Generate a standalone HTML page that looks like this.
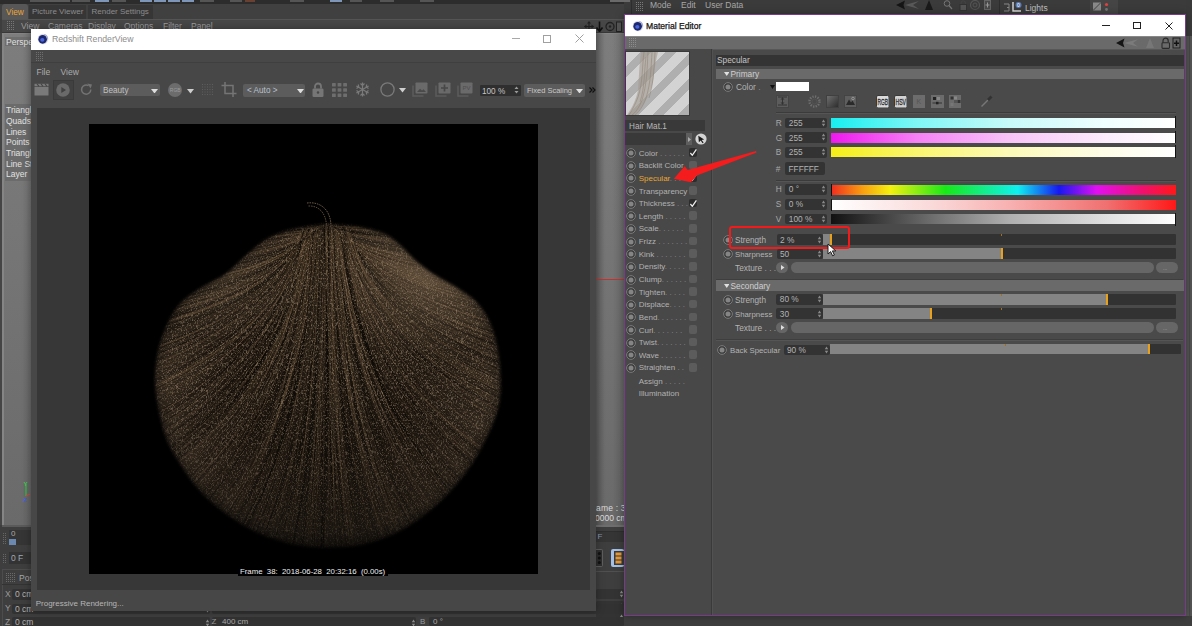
<!DOCTYPE html>
<html><head><meta charset="utf-8">
<style>
*{margin:0;padding:0;box-sizing:border-box}
html,body{width:1192px;height:626px;overflow:hidden;background:#3e3e3e;font-family:"Liberation Sans",sans-serif;position:relative}
.a{position:absolute}
.t{position:absolute;white-space:nowrap;line-height:1}
</style></head><body>
<div class="a" style="left:0px;top:0px;width:1192px;height:626px;background:#3e3e3e"></div>
<div class="a" style="left:0px;top:0px;width:624px;height:4px;background:#2c2c2c"></div>
<div class="a" style="left:30px;top:0px;width:20px;height:2px;background:#555"></div>
<div class="a" style="left:50px;top:0px;width:20px;height:2px;background:#5a5a5a"></div>
<div class="a" style="left:72px;top:0px;width:18px;height:2px;background:#555"></div>
<div class="a" style="left:95px;top:0px;width:14px;height:2px;background:#7e96b8"></div>
<div class="a" style="left:112px;top:0px;width:14px;height:2px;background:#555"></div>
<div class="a" style="left:140px;top:0px;width:12px;height:2px;background:#7e96b8"></div>
<div class="a" style="left:154px;top:0px;width:12px;height:2px;background:#7e96b8"></div>
<div class="a" style="left:168px;top:0px;width:12px;height:2px;background:#7e96b8"></div>
<div class="a" style="left:182px;top:0px;width:12px;height:2px;background:#7e96b8"></div>
<div class="a" style="left:200px;top:0px;width:14px;height:2px;background:#555"></div>
<div class="a" style="left:230px;top:0px;width:12px;height:2px;background:#555"></div>
<div class="a" style="left:245px;top:0px;width:10px;height:2px;background:#6a4030"></div>
<div class="a" style="left:290px;top:0px;width:14px;height:2px;background:#555"></div>
<div class="a" style="left:330px;top:0px;width:12px;height:2px;background:#7e96b8"></div>
<div class="a" style="left:350px;top:0px;width:12px;height:2px;background:#555"></div>
<div class="a" style="left:380px;top:0px;width:14px;height:2px;background:#555"></div>
<div class="a" style="left:420px;top:0px;width:14px;height:2px;background:#555"></div>
<div class="a" style="left:0px;top:4px;width:624px;height:15px;background:#404040"></div>
<div class="a" style="left:2px;top:4px;width:26px;height:15px;background:#575757;border-radius:3px 3px 0 0"></div>
<div class="t" style="left:6px;top:8px;font-size:8.3px;color:#e9a53a;">View</div>
<div class="a" style="left:29px;top:5px;width:57px;height:14px;background:#363636"></div>
<div class="t" style="left:32px;top:8px;font-size:8px;color:#8c8c8c;">Picture Viewer</div>
<div class="a" style="left:88px;top:5px;width:65px;height:14px;background:#363636"></div>
<div class="t" style="left:91.5px;top:8px;font-size:8px;color:#8c8c8c;">Render Settings</div>
<div class="a" style="left:2px;top:19px;width:622px;height:13px;background:#474747"></div>
<div class="a" style="left:2px;top:18.5px;width:622px;height:1px;background:#555"></div>
<svg class="a" style="left:7px;top:21px" width="8" height="9" viewBox="0 0 8 9"><rect x="0" y="0" width="1" height="1" fill="#777"/><rect x="0" y="2" width="1" height="1" fill="#777"/><rect x="0" y="4" width="1" height="1" fill="#777"/><rect x="0" y="6" width="1" height="1" fill="#777"/><rect x="0" y="8" width="1" height="1" fill="#777"/><rect x="2" y="0" width="1" height="1" fill="#777"/><rect x="2" y="2" width="1" height="1" fill="#777"/><rect x="2" y="4" width="1" height="1" fill="#777"/><rect x="2" y="6" width="1" height="1" fill="#777"/><rect x="2" y="8" width="1" height="1" fill="#777"/><rect x="4" y="0" width="1" height="1" fill="#777"/><rect x="4" y="2" width="1" height="1" fill="#777"/><rect x="4" y="4" width="1" height="1" fill="#777"/><rect x="4" y="6" width="1" height="1" fill="#777"/><rect x="4" y="8" width="1" height="1" fill="#777"/><rect x="6" y="0" width="1" height="1" fill="#777"/><rect x="6" y="2" width="1" height="1" fill="#777"/><rect x="6" y="4" width="1" height="1" fill="#777"/><rect x="6" y="6" width="1" height="1" fill="#777"/><rect x="6" y="8" width="1" height="1" fill="#777"/><rect x="8" y="0" width="1" height="1" fill="#777"/><rect x="8" y="2" width="1" height="1" fill="#777"/><rect x="8" y="4" width="1" height="1" fill="#777"/><rect x="8" y="6" width="1" height="1" fill="#777"/><rect x="8" y="8" width="1" height="1" fill="#777"/></svg>
<div class="t" style="left:21px;top:22px;font-size:8.5px;color:#9c9c9c;">View</div>
<div class="t" style="left:48px;top:22px;font-size:8.5px;color:#9c9c9c;">Cameras</div>
<div class="t" style="left:88px;top:22px;font-size:8.5px;color:#9c9c9c;">Display</div>
<div class="t" style="left:124px;top:22px;font-size:8.5px;color:#9c9c9c;">Options</div>
<div class="t" style="left:163px;top:22px;font-size:8.5px;color:#9c9c9c;">Filter</div>
<div class="t" style="left:191px;top:22px;font-size:8.5px;color:#9c9c9c;">Panel</div>
<div class="a" style="left:2px;top:32px;width:622px;height:1px;background:#383838"></div>
<svg class="a" style="left:584px;top:21px" width="38" height="11" viewBox="0 0 38 11"><g stroke="#222" stroke-width="1.2" fill="none"><path d="M5 1V10M0.5 5.5H9.5"/></g><path d="M5 0L7 2.5H3ZM5 11L3 8.5H7ZM0 5.5L2.5 3.5V7.5ZM10 5.5L7.5 3.5V7.5Z" fill="#222"/><path d="M15.5 0.5V9M12.5 6.5L15.5 10.5L18.5 6.5" stroke="#111" stroke-width="1.6" fill="none"/><circle cx="26" cy="5.5" r="4" stroke="#222" stroke-width="1.3" fill="none"/><circle cx="26" cy="5.5" r="1.2" fill="#222"/><rect x="32.5" y="1" width="5" height="9.5" fill="#555" stroke="#222"/></svg>
<div class="a" style="left:624px;top:0px;width:568px;height:14px;background:#3b3b3b"></div>
<div class="a" style="left:610px;top:0px;width:20px;height:2px;background:#6a6a6a"></div>
<div class="a" style="left:631px;top:0px;width:1px;height:14px;background:#2e2e2e"></div>
<svg class="a" style="left:636px;top:2px" width="7" height="9" viewBox="0 0 7 9"><rect x="0" y="0" width="1" height="1" fill="#7a7a7a"/><rect x="0" y="2" width="1" height="1" fill="#7a7a7a"/><rect x="0" y="4" width="1" height="1" fill="#7a7a7a"/><rect x="0" y="6" width="1" height="1" fill="#7a7a7a"/><rect x="0" y="8" width="1" height="1" fill="#7a7a7a"/><rect x="2" y="0" width="1" height="1" fill="#7a7a7a"/><rect x="2" y="2" width="1" height="1" fill="#7a7a7a"/><rect x="2" y="4" width="1" height="1" fill="#7a7a7a"/><rect x="2" y="6" width="1" height="1" fill="#7a7a7a"/><rect x="2" y="8" width="1" height="1" fill="#7a7a7a"/><rect x="4" y="0" width="1" height="1" fill="#7a7a7a"/><rect x="4" y="2" width="1" height="1" fill="#7a7a7a"/><rect x="4" y="4" width="1" height="1" fill="#7a7a7a"/><rect x="4" y="6" width="1" height="1" fill="#7a7a7a"/><rect x="4" y="8" width="1" height="1" fill="#7a7a7a"/><rect x="6" y="0" width="1" height="1" fill="#7a7a7a"/><rect x="6" y="2" width="1" height="1" fill="#7a7a7a"/><rect x="6" y="4" width="1" height="1" fill="#7a7a7a"/><rect x="6" y="6" width="1" height="1" fill="#7a7a7a"/><rect x="6" y="8" width="1" height="1" fill="#7a7a7a"/></svg>
<div class="t" style="left:650px;top:1px;font-size:8.5px;color:#a8a8a8;">Mode</div>
<div class="t" style="left:681px;top:1px;font-size:8.5px;color:#a8a8a8;">Edit</div>
<div class="t" style="left:705px;top:1px;font-size:8.5px;color:#a8a8a8;">User Data</div>
<svg class="a" style="left:895px;top:0px" width="100" height="12" viewBox="0 0 100 12"><path d="M1 5 L10 0.5 L8.5 5 L10 9.5Z" fill="#151515"/><path d="M10 5 L24 1 L18 5 L24 9Z" fill="#666" opacity="0.7"/><path d="M30 10 L34 0 L38 10Z" fill="#1a1a1a"/><circle cx="52" cy="3.5" r="2.8" stroke="#777" stroke-width="1" fill="none"/><path d="M54 5.5 L57 9" stroke="#777" stroke-width="1.2"/><path d="M66 4.5V3A2.2 2.2 0 0 1 70.4 3V4.5" stroke="#444" stroke-width="1" fill="none"/><rect x="65" y="4.5" width="6.5" height="6" fill="#555" stroke="#333"/><circle cx="80" cy="5" r="4.5" stroke="#555" stroke-width="1.2" fill="none"/><circle cx="80" cy="5" r="2" stroke="#555" stroke-width="1" fill="none"/><rect x="89.5" y="0.5" width="6" height="9" fill="#4a4a4a" stroke="#666"/><path d="M92.5 2.5V7.5M90.5 5H94.5" stroke="#999" stroke-width="1"/></svg>
<div class="a" style="left:999px;top:0px;width:1px;height:14px;background:#2e2e2e"></div>
<svg class="a" style="left:1003px;top:1px" width="22" height="12" viewBox="0 0 22 12"><path d="M1 3 H6 V10 H1 M6 6.5 H4" stroke="#888" stroke-width="1" fill="none"/><path d="M10 1 V10 H18" stroke="#ddd" stroke-width="1.4" fill="none"/><circle cx="15.5" cy="4" r="3" fill="#5a7ab0"/><text x="15.5" y="6" font-size="5" fill="#fff" text-anchor="middle" font-family="Liberation Sans">0</text></svg>
<div class="t" style="left:1025px;top:4px;font-size:8.5px;color:#c0c0c0;">Lights</div>
<div class="a" style="left:1090px;top:0px;width:28px;height:14px;background:#454545"></div>
<svg class="a" style="left:1093px;top:2px" width="22" height="10" viewBox="0 0 22 10"><rect x="0" y="0.5" width="8" height="8" fill="#8a8a8a"/><path d="M0 8.5 L8 0.5" stroke="#444" stroke-width="1"/><circle cx="13.5" cy="2.5" r="1.6" fill="#e04040"/><circle cx="13.5" cy="7.5" r="1.4" fill="#777"/></svg>
<div class="a" style="left:0px;top:33px;width:2px;height:493px;background:#454545"></div>
<div class="a" style="left:2px;top:33px;width:622px;height:493px;background:#858585"></div>
<div class="a" style="left:4px;top:34px;width:620px;height:491px;background:linear-gradient(180deg,#7d7d7d 0%,#767676 40%,#6a6a6a 100%)"></div>
<div class="a" style="left:596px;top:33px;width:9px;height:493px;background:linear-gradient(90deg,rgba(0,0,0,0.2),rgba(0,0,0,0))"></div>
<div class="a" style="left:612px;top:33px;width:12px;height:493px;background:linear-gradient(90deg,rgba(0,0,0,0),rgba(0,0,0,0.1))"></div>
<div class="a" style="left:22px;top:33px;width:9px;height:493px;background:linear-gradient(90deg,rgba(0,0,0,0),rgba(0,0,0,0.06))"></div>
<div class="a" style="left:5px;top:37px;width:30px;height:9px;background:#6e6e6e"></div>
<div class="t" style="left:6px;top:38px;font-size:8.5px;color:#e0e0e0;">Perspective</div>
<div class="a" style="left:5px;top:104px;width:30px;height:77px;background:#6b6b6b"></div>
<div class="t" style="left:6px;top:106px;font-size:8.5px;color:#e2e2e2;">Triangles</div>
<div class="t" style="left:6px;top:117px;font-size:8.5px;color:#e2e2e2;">Quads</div>
<div class="t" style="left:6px;top:128px;font-size:8.5px;color:#e2e2e2;">Lines</div>
<div class="t" style="left:6px;top:138px;font-size:8.5px;color:#e2e2e2;">Points</div>
<div class="t" style="left:6px;top:149px;font-size:8.5px;color:#e2e2e2;">Triangles</div>
<div class="t" style="left:6px;top:160px;font-size:8.5px;color:#e2e2e2;">Line Strips</div>
<div class="t" style="left:6px;top:170px;font-size:8.5px;color:#e2e2e2;">Layer</div>
<div class="a" style="left:596px;top:279px;width:28px;height:1px;background:#c83030"></div>
<div class="t" style="left:593px;top:504px;font-size:8.5px;color:#dcdcdc;letter-spacing:0.2px">rame : 38</div>
<div class="t" style="left:595px;top:514px;font-size:8.5px;color:#dcdcdc;">0000 cm</div>
<svg class="a" style="left:20px;top:480px" width="14" height="24" viewBox="0 0 14 24"><path d="M6 4 V16" stroke="#2ec040" stroke-width="1.2"/><text x="3.5" y="6" font-size="6" fill="#3ed050" font-family="Liberation Sans" font-weight="bold">Y</text><path d="M6 16 L10 14" stroke="#e04040" stroke-width="1"/><text x="3" y="22" font-size="6" fill="#4060e0" font-family="Liberation Sans" font-weight="bold">Z</text></svg>
<div class="a" style="left:0px;top:525px;width:624px;height:101px;background:#3e3e3e"></div>
<div class="a" style="left:2px;top:525px;width:622px;height:2px;background:#5a5a5a"></div>
<svg class="a" style="left:3px;top:533px" width="3" height="11" viewBox="0 0 3 11"><rect x="0" y="0" width="1" height="1" fill="#666"/><rect x="0" y="2" width="1" height="1" fill="#666"/><rect x="0" y="4" width="1" height="1" fill="#666"/><rect x="0" y="6" width="1" height="1" fill="#666"/><rect x="0" y="8" width="1" height="1" fill="#666"/><rect x="0" y="10" width="1" height="1" fill="#666"/><rect x="2" y="0" width="1" height="1" fill="#666"/><rect x="2" y="2" width="1" height="1" fill="#666"/><rect x="2" y="4" width="1" height="1" fill="#666"/><rect x="2" y="6" width="1" height="1" fill="#666"/><rect x="2" y="8" width="1" height="1" fill="#666"/><rect x="2" y="10" width="1" height="1" fill="#666"/></svg>
<div class="a" style="left:9px;top:530px;width:587px;height:15px;background:#353535"></div>
<div class="t" style="left:11px;top:530px;font-size:8px;color:#a8a8a8;">0</div>
<div class="a" style="left:9px;top:539px;width:7px;height:6px;background:#6b88b0"></div>
<svg class="a" style="left:3px;top:554px" width="3" height="10" viewBox="0 0 3 10"><rect x="0" y="0" width="1" height="1" fill="#666"/><rect x="0" y="2" width="1" height="1" fill="#666"/><rect x="0" y="4" width="1" height="1" fill="#666"/><rect x="0" y="6" width="1" height="1" fill="#666"/><rect x="0" y="8" width="1" height="1" fill="#666"/><rect x="0" y="10" width="1" height="1" fill="#666"/><rect x="2" y="0" width="1" height="1" fill="#666"/><rect x="2" y="2" width="1" height="1" fill="#666"/><rect x="2" y="4" width="1" height="1" fill="#666"/><rect x="2" y="6" width="1" height="1" fill="#666"/><rect x="2" y="8" width="1" height="1" fill="#666"/><rect x="2" y="10" width="1" height="1" fill="#666"/></svg>
<div class="a" style="left:9px;top:552px;width:587px;height:12px;background:#333"></div>
<div class="t" style="left:11px;top:554px;font-size:8.5px;color:#a0a8b8;">0 F</div>
<div class="a" style="left:2px;top:569px;width:594px;height:1px;background:#4c4c4c"></div>
<div class="a" style="left:2px;top:569px;width:1px;height:57px;background:#4c4c4c"></div>
<svg class="a" style="left:6px;top:573px" width="9" height="9" viewBox="0 0 9 9"><rect x="0" y="0" width="1" height="1" fill="#6a6a6a"/><rect x="0" y="2" width="1" height="1" fill="#6a6a6a"/><rect x="0" y="4" width="1" height="1" fill="#6a6a6a"/><rect x="0" y="6" width="1" height="1" fill="#6a6a6a"/><rect x="0" y="8" width="1" height="1" fill="#6a6a6a"/><rect x="2" y="0" width="1" height="1" fill="#6a6a6a"/><rect x="2" y="2" width="1" height="1" fill="#6a6a6a"/><rect x="2" y="4" width="1" height="1" fill="#6a6a6a"/><rect x="2" y="6" width="1" height="1" fill="#6a6a6a"/><rect x="2" y="8" width="1" height="1" fill="#6a6a6a"/><rect x="4" y="0" width="1" height="1" fill="#6a6a6a"/><rect x="4" y="2" width="1" height="1" fill="#6a6a6a"/><rect x="4" y="4" width="1" height="1" fill="#6a6a6a"/><rect x="4" y="6" width="1" height="1" fill="#6a6a6a"/><rect x="4" y="8" width="1" height="1" fill="#6a6a6a"/><rect x="6" y="0" width="1" height="1" fill="#6a6a6a"/><rect x="6" y="2" width="1" height="1" fill="#6a6a6a"/><rect x="6" y="4" width="1" height="1" fill="#6a6a6a"/><rect x="6" y="6" width="1" height="1" fill="#6a6a6a"/><rect x="6" y="8" width="1" height="1" fill="#6a6a6a"/><rect x="8" y="0" width="1" height="1" fill="#6a6a6a"/><rect x="8" y="2" width="1" height="1" fill="#6a6a6a"/><rect x="8" y="4" width="1" height="1" fill="#6a6a6a"/><rect x="8" y="6" width="1" height="1" fill="#6a6a6a"/><rect x="8" y="8" width="1" height="1" fill="#6a6a6a"/></svg>
<div class="t" style="left:19px;top:574px;font-size:8.5px;color:#a8a8a8;">Pos</div>
<div class="a" style="left:2px;top:584px;width:594px;height:1px;background:#333"></div>
<div class="t" style="left:5px;top:590px;font-size:8.5px;color:#9a9a9a;">X</div>
<div class="a" style="left:12px;top:589px;width:198px;height:10.5px;background:#323232;border-radius:2px"></div>
<div class="t" style="left:15px;top:590px;font-size:8.5px;color:#b0b0b0;">0 cm</div>
<svg class="a" style="left:205px;top:590.5px" width="5" height="8" viewBox="0 0 5 8"><path d="M0.8 3.2L2.5 0.6L4.2 3.2ZM0.8 4.8L2.5 7.4L4.2 4.8Z" fill="#8a8a8a"/></svg>
<div class="t" style="left:5px;top:604px;font-size:8.5px;color:#9a9a9a;">Y</div>
<div class="a" style="left:12px;top:603.5px;width:198px;height:10.5px;background:#323232;border-radius:2px"></div>
<div class="t" style="left:15px;top:605px;font-size:8.5px;color:#b0b0b0;">0 cm</div>
<svg class="a" style="left:205px;top:605.0px" width="5" height="8" viewBox="0 0 5 8"><path d="M0.8 3.2L2.5 0.6L4.2 3.2ZM0.8 4.8L2.5 7.4L4.2 4.8Z" fill="#8a8a8a"/></svg>
<div class="t" style="left:5px;top:618px;font-size:8.5px;color:#9a9a9a;">Z</div>
<div class="a" style="left:12px;top:617px;width:198px;height:10.5px;background:#323232;border-radius:2px"></div>
<div class="t" style="left:15px;top:618px;font-size:8.5px;color:#b0b0b0;">0 cm</div>
<svg class="a" style="left:205px;top:618.5px" width="5" height="8" viewBox="0 0 5 8"><path d="M0.8 3.2L2.5 0.6L4.2 3.2ZM0.8 4.8L2.5 7.4L4.2 4.8Z" fill="#8a8a8a"/></svg>
<div class="a" style="left:596px;top:525px;width:28px;height:1.5px;background:#6e6e6e"></div>
<div class="a" style="left:596px;top:531px;width:28px;height:11px;background:#353535;border-top:1px solid #2e2e2e"></div>
<div class="t" style="left:597.5px;top:533px;font-size:8px;color:#8898b8;">F</div>
<div class="a" style="left:596px;top:549px;width:6.5px;height:18px;background:#2e2e2e;border:1px solid #5e5e5e;border-left:none;border-radius:0 2px 2px 0"></div>
<svg class="a" style="left:596.5px;top:551px" width="5" height="14" viewBox="0 0 5 14"><circle cx="2.3" cy="2.5" r="1.5" fill="#111"/><circle cx="2.3" cy="7" r="1.5" fill="#111"/><circle cx="2.3" cy="11.5" r="1.5" fill="#111"/></svg>
<div class="a" style="left:611px;top:549px;width:13px;height:18px;background:#a4c0e6;border-radius:2px"></div>
<svg class="a" style="left:614px;top:551px" width="10" height="14" viewBox="0 0 10 14"><rect x="0" y="0" width="10" height="14" fill="#3a3a3a"/><rect x="1.5" y="1.5" width="6" height="3" fill="#e89a3a"/><rect x="1.5" y="5.5" width="6" height="3" fill="#e89a3a"/><rect x="1.5" y="9.5" width="6" height="3" fill="#e89a3a"/></svg>
<div class="a" style="left:596px;top:571px;width:28px;height:1px;background:#505050"></div>
<div class="a" style="left:596px;top:588.5px;width:28px;height:10.5px;background:#333;border-radius:2px"></div>
<svg class="a" style="left:618.5px;top:590.0px" width="5" height="8" viewBox="0 0 5 8"><path d="M0.8 3.2L2.5 0.6L4.2 3.2ZM0.8 4.8L2.5 7.4L4.2 4.8Z" fill="#8a8a8a"/></svg>
<div class="a" style="left:596px;top:601px;width:28px;height:10.5px;background:#333;border-radius:2px"></div>
<svg class="a" style="left:618.5px;top:602.5px" width="5" height="8" viewBox="0 0 5 8"><path d="M0.8 3.2L2.5 0.6L4.2 3.2ZM0.8 4.8L2.5 7.4L4.2 4.8Z" fill="#8a8a8a"/></svg>
<div class="a" style="left:596px;top:612px;width:28px;height:14px;background:#333;border-radius:2px"></div>
<svg class="a" style="left:618.5px;top:613.5px" width="5" height="8" viewBox="0 0 5 8"><path d="M0.8 3.2L2.5 0.6L4.2 3.2ZM0.8 4.8L2.5 7.4L4.2 4.8Z" fill="#8a8a8a"/></svg>
<div class="a" style="left:212px;top:603.5px;width:412px;height:10.5px;background:#323232;border-radius:2px"></div>
<div class="t" style="left:221px;top:605px;font-size:8px;color:#a8a8a8;">400 cm</div>
<div class="a" style="left:429px;top:603.5px;width:195px;height:10.5px;background:#323232;border-radius:2px"></div>
<div class="a" style="left:212px;top:617px;width:204px;height:9px;background:#323232;border-radius:2px"></div>
<div class="t" style="left:211.5px;top:618px;font-size:8px;color:#999;">Z</div>
<div class="t" style="left:222px;top:618px;font-size:8px;color:#a8a8a8;">400 cm</div>
<svg class="a" style="left:411px;top:618.5px" width="5" height="8" viewBox="0 0 5 8"><path d="M0.8 3.2L2.5 0.6L4.2 3.2ZM0.8 4.8L2.5 7.4L4.2 4.8Z" fill="#8a8a8a"/></svg>
<div class="a" style="left:429px;top:617px;width:195px;height:9px;background:#323232;border-radius:2px"></div>
<div class="t" style="left:420px;top:618px;font-size:8px;color:#999;">B</div>
<div class="t" style="left:433px;top:618px;font-size:8px;color:#a8a8a8;">0 &deg;</div>
<div class="a" style="left:1186px;top:0px;width:6px;height:36px;background:#3a3a3a"></div>
<div class="a" style="left:1186px;top:36px;width:6px;height:580px;background:#555"></div>
<div class="a" style="left:1189px;top:36px;width:1px;height:580px;background:#484848"></div>
<div class="a" style="left:31px;top:29px;width:565px;height:582px;background:#474747;box-shadow:0 0 8px rgba(0,0,0,0.35)"></div>
<div class="a" style="left:31px;top:29px;width:565px;height:21px;background:#fff"></div>
<svg class="a" style="left:37px;top:33px;" width="12" height="12" viewBox="0 0 14 14"><circle cx="7" cy="7" r="6.2" fill="#dcdce6"/><circle cx="6.6" cy="7.4" r="5" fill="#1c2870"/><ellipse cx="6.2" cy="8" rx="2.4" ry="2.2" fill="#4a66d8"/><path d="M8.5 1.8 Q12.6 3 12.4 7.5" stroke="#a0a8d0" fill="none" stroke-width="1.2"/></svg>
<div class="t" style="left:52px;top:35px;font-size:8.7px;color:#8c8c8c;">Redshift RenderView</div>
<div class="a" style="left:512px;top:38px;width:8px;height:1px;background:#a8a8a8"></div>
<div class="a" style="left:543px;top:35px;width:8px;height:8px;border:1px solid #a0a0a0"></div>
<svg class="a" style="left:575px;top:34px;" width="9" height="9" viewBox="0 0 9 9"><path d="M0.5 0.5L8.5 8.5M8.5 0.5L0.5 8.5" stroke="#a0a0a0" stroke-width="1"/></svg>
<div class="a" style="left:31px;top:50px;width:565px;height:13px;background:#484848"></div>
<div class="a" style="left:31px;top:62px;width:565px;height:1px;background:#3f3f3f"></div>
<svg class="a" style="left:36px;top:52px;" width="8" height="9" viewBox="0 0 8 9"><rect x="0" y="0" width="1" height="1" fill="#6e6e6e"/><rect x="0" y="2" width="1" height="1" fill="#6e6e6e"/><rect x="0" y="4" width="1" height="1" fill="#6e6e6e"/><rect x="0" y="6" width="1" height="1" fill="#6e6e6e"/><rect x="0" y="8" width="1" height="1" fill="#6e6e6e"/><rect x="2" y="0" width="1" height="1" fill="#6e6e6e"/><rect x="2" y="2" width="1" height="1" fill="#6e6e6e"/><rect x="2" y="4" width="1" height="1" fill="#6e6e6e"/><rect x="2" y="6" width="1" height="1" fill="#6e6e6e"/><rect x="2" y="8" width="1" height="1" fill="#6e6e6e"/><rect x="4" y="0" width="1" height="1" fill="#6e6e6e"/><rect x="4" y="2" width="1" height="1" fill="#6e6e6e"/><rect x="4" y="4" width="1" height="1" fill="#6e6e6e"/><rect x="4" y="6" width="1" height="1" fill="#6e6e6e"/><rect x="4" y="8" width="1" height="1" fill="#6e6e6e"/><rect x="6" y="0" width="1" height="1" fill="#6e6e6e"/><rect x="6" y="2" width="1" height="1" fill="#6e6e6e"/><rect x="6" y="4" width="1" height="1" fill="#6e6e6e"/><rect x="6" y="6" width="1" height="1" fill="#6e6e6e"/><rect x="6" y="8" width="1" height="1" fill="#6e6e6e"/><rect x="8" y="0" width="1" height="1" fill="#6e6e6e"/><rect x="8" y="2" width="1" height="1" fill="#6e6e6e"/><rect x="8" y="4" width="1" height="1" fill="#6e6e6e"/><rect x="8" y="6" width="1" height="1" fill="#6e6e6e"/><rect x="8" y="8" width="1" height="1" fill="#6e6e6e"/></svg>
<div class="t" style="left:36.5px;top:68px;font-size:8.5px;color:#acacac;">File</div>
<div class="t" style="left:60.5px;top:68px;font-size:8.5px;color:#acacac;">View</div>
<svg class="a" style="left:34px;top:83px;" width="15" height="13" viewBox="0 0 15 13"><rect x="0.5" y="4" width="14" height="8.5" fill="#7a7a7a"/><path d="M0.5 0.8 H14.5 V3.3 H0.5Z" fill="#7a7a7a"/><path d="M3 0.8L5 3.3M7 0.8L9 3.3M11 0.8L13 3.3" stroke="#474747" stroke-width="1.1"/></svg>
<div class="a" style="left:53px;top:80px;width:21px;height:20px;background:#414141;border:1px solid #3a3a3a"></div>
<svg class="a" style="left:56px;top:83px;" width="14" height="14" viewBox="0 0 14 14"><circle cx="7" cy="7" r="6.8" fill="#6a6a6a"/><path d="M5.3 4 L10 7 L5.3 10Z" fill="#414141"/></svg>
<svg class="a" style="left:80px;top:83px;" width="13" height="13" viewBox="0 0 13 13"><path d="M10.8 6.5 A4.6 4.6 0 1 1 8.6 2.6" stroke="#737373" stroke-width="1.5" fill="none"/><path d="M7.4 0.5 L12 1.5 L10.6 5.6Z" fill="#737373"/></svg>
<div class="a" style="left:99.5px;top:84px;width:60.5px;height:12px;background:#5c5c5c;border-radius:2px"></div>
<div class="t" style="left:103px;top:87px;font-size:8.2px;color:#c0c0c0;">Beauty</div>
<svg class="a" style="left:150.5px;top:88.5px;" width="7" height="4.5" viewBox="0 0 7 4.5"><path d="M0 0H7L3.5 4.5Z" fill="#dedede"/></svg>
<div class="a" style="left:168px;top:83px;width:14px;height:14px;background:#6c6c6c;border-radius:50%"></div>
<div class="t" style="left:169.8px;top:87.6px;font-size:5px;color:#9c9c9c;">RGB</div>
<svg class="a" style="left:187px;top:89px;" width="7" height="4.5" viewBox="0 0 7 4.5"><path d="M0 0H7L3.5 4.5Z" fill="#cfcfcf"/></svg>
<svg class="a" style="left:202px;top:84px;" width="11" height="12" viewBox="0 0 11 12"><rect x="0.0" y="0.0" width="1" height="1" fill="#5e5e5e"/><rect x="0.0" y="2.5" width="1" height="1" fill="#5e5e5e"/><rect x="0.0" y="5.0" width="1" height="1" fill="#5e5e5e"/><rect x="0.0" y="7.5" width="1" height="1" fill="#5e5e5e"/><rect x="0.0" y="10.0" width="1" height="1" fill="#5e5e5e"/><rect x="2.5" y="0.0" width="1" height="1" fill="#5e5e5e"/><rect x="2.5" y="2.5" width="1" height="1" fill="#5e5e5e"/><rect x="2.5" y="5.0" width="1" height="1" fill="#5e5e5e"/><rect x="2.5" y="7.5" width="1" height="1" fill="#5e5e5e"/><rect x="2.5" y="10.0" width="1" height="1" fill="#5e5e5e"/><rect x="5.0" y="0.0" width="1" height="1" fill="#5e5e5e"/><rect x="5.0" y="2.5" width="1" height="1" fill="#5e5e5e"/><rect x="5.0" y="5.0" width="1" height="1" fill="#5e5e5e"/><rect x="5.0" y="7.5" width="1" height="1" fill="#5e5e5e"/><rect x="5.0" y="10.0" width="1" height="1" fill="#5e5e5e"/><rect x="7.5" y="0.0" width="1" height="1" fill="#5e5e5e"/><rect x="7.5" y="2.5" width="1" height="1" fill="#5e5e5e"/><rect x="7.5" y="5.0" width="1" height="1" fill="#5e5e5e"/><rect x="7.5" y="7.5" width="1" height="1" fill="#5e5e5e"/><rect x="7.5" y="10.0" width="1" height="1" fill="#5e5e5e"/><rect x="10.0" y="0.0" width="1" height="1" fill="#5e5e5e"/><rect x="10.0" y="2.5" width="1" height="1" fill="#5e5e5e"/><rect x="10.0" y="5.0" width="1" height="1" fill="#5e5e5e"/><rect x="10.0" y="7.5" width="1" height="1" fill="#5e5e5e"/><rect x="10.0" y="10.0" width="1" height="1" fill="#5e5e5e"/></svg>
<svg class="a" style="left:221px;top:81px;" width="16" height="17" viewBox="0 0 16 17"><path d="M4 1 V12.5 H15.5 M0.5 4.5 H12 V16" stroke="#757575" stroke-width="1.5" fill="none"/></svg>
<div class="a" style="left:243px;top:84px;width:62px;height:12.5px;background:#5c5c5c;border-radius:2px"></div>
<div class="t" style="left:247px;top:87px;font-size:8.2px;color:#b8c0cc;">&lt; Auto &gt;</div>
<svg class="a" style="left:296.5px;top:88.5px;" width="7" height="4.5" viewBox="0 0 7 4.5"><path d="M0 0H7L3.5 4.5Z" fill="#dedede"/></svg>
<svg class="a" style="left:311.5px;top:82px;" width="12" height="15" viewBox="0 0 12 15"><path d="M3 6.5 V4.5 A3 3 0 0 1 9 4.5 V6.5" stroke="#767676" stroke-width="1.8" fill="none"/><rect x="0.5" y="6.5" width="11" height="8.5" rx="1.3" fill="#767676"/><circle cx="6" cy="10.5" r="1.2" fill="#474747"/></svg>
<svg class="a" style="left:332px;top:83px;" width="15" height="14" viewBox="0 0 15 14"><g fill="#6e6e6e"><rect x="0" y="0" width="3.8" height="3.6" rx="0.6"/><rect x="5.6" y="0" width="3.8" height="3.6" rx="0.6"/><rect x="11.2" y="0" width="3.8" height="3.6" rx="0.6"/><rect x="0" y="5.2" width="3.8" height="3.6" rx="0.6"/><rect x="5.6" y="5.2" width="3.8" height="3.6" rx="0.6"/><rect x="11.2" y="5.2" width="3.8" height="3.6" rx="0.6"/><rect x="0" y="10.4" width="3.8" height="3.6" rx="0.6"/><rect x="5.6" y="10.4" width="3.8" height="3.6" rx="0.6"/><rect x="11.2" y="10.4" width="3.8" height="3.6" rx="0.6"/></g></svg>
<svg class="a" style="left:355px;top:82px;" width="15" height="15" viewBox="0 0 15 15"><g stroke="#7a7a7a" stroke-width="1.2" fill="none"><path d="M7.5 0.5V14.5M1.4 4L13.6 11M1.4 11L13.6 4"/><path d="M5.5 1.5L7.5 3.5L9.5 1.5M5.5 13.5L7.5 11.5L9.5 13.5M1.5 6.5L3.8 5L3.2 2.5M13.5 8.5L11.2 10L11.8 12.5M1.5 8.5L3.8 10L3.2 12.5M13.5 6.5L11.2 5L11.8 2.5"/></g></svg>
<svg class="a" style="left:379.5px;top:82px;" width="15" height="15" viewBox="0 0 15 15"><circle cx="7.5" cy="7.5" r="6.6" stroke="#7a7a7a" stroke-width="1.3" fill="none"/></svg>
<svg class="a" style="left:399px;top:88px;" width="7" height="4.5" viewBox="0 0 7 4.5"><path d="M0 0H7L3.5 4.5Z" fill="#cfcfcf"/></svg>
<svg class="a" style="left:411.5px;top:82px;" width="16" height="15" viewBox="0 0 16 15"><path d="M1 3.5V14H11.5" stroke="#5c5c5c" stroke-width="1.5" fill="none"/><rect x="3.5" y="0.5" width="12" height="11" rx="0.8" fill="#6a6a6a"/><path d="M5 10L8 6.8L10 8.6L11.5 7.3L14 10Z" fill="#4a4a4a"/></svg>
<svg class="a" style="left:434.5px;top:82px;" width="16" height="15" viewBox="0 0 16 15"><path d="M1 3.5V14H11.5" stroke="#5c5c5c" stroke-width="1.5" fill="none"/><rect x="3.5" y="0.5" width="12" height="11" rx="0.8" fill="#6a6a6a"/><path d="M9.5 2.5V9.5M6 6H13" stroke="#474747" stroke-width="1.7"/></svg>
<svg class="a" style="left:456.5px;top:82px;" width="16" height="15" viewBox="0 0 16 15"><path d="M1 3.5V14H11.5" stroke="#5c5c5c" stroke-width="1.5" fill="none"/><rect x="3.5" y="0.5" width="12" height="11" rx="0.8" fill="#6a6a6a"/><text x="9.5" y="8.3" font-size="6" fill="#4e4e4e" text-anchor="middle" font-family="Liberation Sans">PV</text></svg>
<div class="a" style="left:479.5px;top:84.5px;width:41px;height:11.5px;background:#2f2f2f;border-radius:1px"></div>
<div class="t" style="left:482px;top:88px;font-size:8.2px;color:#c4c4c4;">100 %</div>
<svg class="a" style="left:514px;top:86px;" width="5" height="8" viewBox="0 0 5 8"><path d="M0.5 3L2.5 0.5L4.5 3ZM0.5 5L2.5 7.5L4.5 5Z" fill="#9a9a9a"/></svg>
<div class="a" style="left:524px;top:84px;width:60.5px;height:12.5px;background:#5c5c5c;border-radius:2px"></div>
<div class="t" style="left:527px;top:87px;font-size:7.5px;color:#c8c8c8;">Fixed Scaling</div>
<svg class="a" style="left:575.5px;top:88.5px;" width="7" height="4.5" viewBox="0 0 7 4.5"><path d="M0 0H7L3.5 4.5Z" fill="#dedede"/></svg>
<svg class="a" style="left:589px;top:87px;" width="7" height="6" viewBox="0 0 7 6"><path d="M0.5 0.5L3 3L0.5 5.5M3.5 0.5L6 3L3.5 5.5" stroke="#111" stroke-width="1.2" fill="none"/></svg>
<div class="a" style="left:37px;top:108px;width:553px;height:482px;background:#373737"></div>
<div class="a" style="left:89px;top:124px;width:449px;height:450px;background:#000"></div>
<svg class="a" style="left:89px;top:124px;" width="449" height="450" viewBox="89 124 449 450"><defs><radialGradient id="hg" gradientUnits="userSpaceOnUse" cx="326" cy="360" r="190"><stop offset="0" stop-color="#140f0a"/><stop offset="0.5" stop-color="#1c150e"/><stop offset="0.8" stop-color="#2e241a"/><stop offset="1" stop-color="#45382a"/></radialGradient>
<linearGradient id="hb" gradientUnits="userSpaceOnUse" x1="0" y1="380" x2="0" y2="550"><stop offset="0" stop-color="#000" stop-opacity="0"/><stop offset="0.55" stop-color="#000" stop-opacity="0.25"/><stop offset="0.85" stop-color="#000" stop-opacity="0.5"/><stop offset="1" stop-color="#000" stop-opacity="0.7"/></linearGradient><filter id="rb" x="-10%" y="-10%" width="120%" height="120%"><feGaussianBlur stdDeviation="4"/></filter>
<radialGradient id="hh" gradientUnits="userSpaceOnUse" cx="430" cy="270" r="90"><stop offset="0" stop-color="#a08668" stop-opacity="0.42"/><stop offset="1" stop-color="#a08668" stop-opacity="0"/></radialGradient><radialGradient id="hh2" gradientUnits="userSpaceOnUse" cx="225" cy="275" r="70"><stop offset="0" stop-color="#a08668" stop-opacity="0.18"/><stop offset="1" stop-color="#a08668" stop-opacity="0"/></radialGradient><filter id="fz" x="-5%" y="-5%" width="110%" height="110%"><feGaussianBlur stdDeviation="1.5"/></filter>
<filter id="nz" x="0" y="0" width="100%" height="100%"><feTurbulence type="fractalNoise" baseFrequency="1.8 0.6" numOctaves="1" seed="3"/><feColorMatrix type="matrix" values="0 0 0 0 0.6  0 0 0 0 0.47  0 0 0 0 0.32  0 0 0 4 -2.0"/></filter>
<filter id="mb" x="-10%" y="-10%" width="120%" height="120%"><feGaussianBlur stdDeviation="1.4"/></filter><mask id="hm" maskUnits="userSpaceOnUse" x="89" y="124" width="449" height="450"><path d="M330.5 224 C336.4 224.5 352.6 225.6 361.5 227.2 C370.4 228.8 377.5 230.6 383.9 233.5 C390.3 236.4 394.6 240.2 399.9 244.7 C405.2 249.2 409.9 255.6 415.8 260.7 C421.7 265.8 428.1 270.5 435 275 C441.9 279.5 450.5 283.4 457.4 287.9 C464.3 292.4 471.2 296.6 476.5 302.2 C481.8 307.8 485.8 313.9 489.3 321.4 C492.8 328.9 495.4 337.4 497.3 347 C499.2 356.6 500.4 368.8 500.5 379 C500.6 389.2 500.6 398.2 498 408.4 C495.4 418.6 490.5 429.6 485.2 440.3 C479.9 451.0 474.0 461.7 466 472.3 C458.0 482.9 447.9 494.6 437.2 504.2 C426.5 513.8 414.2 523.1 402 529.8 C389.8 536.5 376.5 541.3 363.7 544.2 C350.9 547.1 337.1 547.4 325.4 547.4 C313.7 547.4 304.6 546.6 293.4 544.2 C282.2 541.8 269.4 538.1 258.2 533 C247.0 527.9 235.9 520.7 226.3 513.8 C216.7 506.9 208.2 499.4 200.7 491.4 C193.2 483.4 187.1 474.4 181.5 465.9 C175.9 457.4 170.9 449.4 167.2 440.3 C163.5 431.2 161.2 421.7 159.2 411.5 C157.2 401.3 155.0 389.8 155 379 C155.0 368.2 156.9 356.6 159.2 347 C161.5 337.4 165.1 328.9 168.8 321.4 C172.5 313.9 175.7 308.0 181.5 302.2 C187.3 296.4 196.4 291.1 203.9 286.3 C211.4 281.5 219.4 278.6 226.3 273.5 C233.2 268.4 238.5 261.8 245.4 255.9 C252.3 250.0 259.8 242.8 267.8 238.3 C275.8 233.8 283.7 231.2 293.4 228.8 C303.1 226.4 319.8 224.8 326 224 C332.2 223.2 324.6 223.5 330.5 224Z" fill="#fff" filter="url(#mb)"/></mask><clipPath id="hc"><path d="M330.5 224 C336.4 224.5 352.6 225.6 361.5 227.2 C370.4 228.8 377.5 230.6 383.9 233.5 C390.3 236.4 394.6 240.2 399.9 244.7 C405.2 249.2 409.9 255.6 415.8 260.7 C421.7 265.8 428.1 270.5 435 275 C441.9 279.5 450.5 283.4 457.4 287.9 C464.3 292.4 471.2 296.6 476.5 302.2 C481.8 307.8 485.8 313.9 489.3 321.4 C492.8 328.9 495.4 337.4 497.3 347 C499.2 356.6 500.4 368.8 500.5 379 C500.6 389.2 500.6 398.2 498 408.4 C495.4 418.6 490.5 429.6 485.2 440.3 C479.9 451.0 474.0 461.7 466 472.3 C458.0 482.9 447.9 494.6 437.2 504.2 C426.5 513.8 414.2 523.1 402 529.8 C389.8 536.5 376.5 541.3 363.7 544.2 C350.9 547.1 337.1 547.4 325.4 547.4 C313.7 547.4 304.6 546.6 293.4 544.2 C282.2 541.8 269.4 538.1 258.2 533 C247.0 527.9 235.9 520.7 226.3 513.8 C216.7 506.9 208.2 499.4 200.7 491.4 C193.2 483.4 187.1 474.4 181.5 465.9 C175.9 457.4 170.9 449.4 167.2 440.3 C163.5 431.2 161.2 421.7 159.2 411.5 C157.2 401.3 155.0 389.8 155 379 C155.0 368.2 156.9 356.6 159.2 347 C161.5 337.4 165.1 328.9 168.8 321.4 C172.5 313.9 175.7 308.0 181.5 302.2 C187.3 296.4 196.4 291.1 203.9 286.3 C211.4 281.5 219.4 278.6 226.3 273.5 C233.2 268.4 238.5 261.8 245.4 255.9 C252.3 250.0 259.8 242.8 267.8 238.3 C275.8 233.8 283.7 231.2 293.4 228.8 C303.1 226.4 319.8 224.8 326 224 C332.2 223.2 324.6 223.5 330.5 224Z"/></clipPath></defs>
<g mask="url(#hm)">
<path d="M330.5 224 C336.4 224.5 352.6 225.6 361.5 227.2 C370.4 228.8 377.5 230.6 383.9 233.5 C390.3 236.4 394.6 240.2 399.9 244.7 C405.2 249.2 409.9 255.6 415.8 260.7 C421.7 265.8 428.1 270.5 435 275 C441.9 279.5 450.5 283.4 457.4 287.9 C464.3 292.4 471.2 296.6 476.5 302.2 C481.8 307.8 485.8 313.9 489.3 321.4 C492.8 328.9 495.4 337.4 497.3 347 C499.2 356.6 500.4 368.8 500.5 379 C500.6 389.2 500.6 398.2 498 408.4 C495.4 418.6 490.5 429.6 485.2 440.3 C479.9 451.0 474.0 461.7 466 472.3 C458.0 482.9 447.9 494.6 437.2 504.2 C426.5 513.8 414.2 523.1 402 529.8 C389.8 536.5 376.5 541.3 363.7 544.2 C350.9 547.1 337.1 547.4 325.4 547.4 C313.7 547.4 304.6 546.6 293.4 544.2 C282.2 541.8 269.4 538.1 258.2 533 C247.0 527.9 235.9 520.7 226.3 513.8 C216.7 506.9 208.2 499.4 200.7 491.4 C193.2 483.4 187.1 474.4 181.5 465.9 C175.9 457.4 170.9 449.4 167.2 440.3 C163.5 431.2 161.2 421.7 159.2 411.5 C157.2 401.3 155.0 389.8 155 379 C155.0 368.2 156.9 356.6 159.2 347 C161.5 337.4 165.1 328.9 168.8 321.4 C172.5 313.9 175.7 308.0 181.5 302.2 C187.3 296.4 196.4 291.1 203.9 286.3 C211.4 281.5 219.4 278.6 226.3 273.5 C233.2 268.4 238.5 261.8 245.4 255.9 C252.3 250.0 259.8 242.8 267.8 238.3 C275.8 233.8 283.7 231.2 293.4 228.8 C303.1 226.4 319.8 224.8 326 224 C332.2 223.2 324.6 223.5 330.5 224Z" fill="url(#hg)" transform="translate(326 385) scale(1.02) translate(-326 -385)"/>
<g><path d="M341.1 228.0 Q362.0 370.4 474.8 457.7" stroke="#9c7c58" stroke-opacity="0.26" stroke-width="0.55" fill="none"/><path d="M333.6 226.3 Q339.1 232.8 388.7 236.8" stroke="#4a3a2a" stroke-opacity="0.32" stroke-width="0.55" fill="none"/><path d="M337.6 226.5 Q344.9 414.8 401.1 530.2" stroke="#9c7c58" stroke-opacity="0.28" stroke-width="0.78" fill="none"/><path d="M315.9 226.5 Q308.7 413.0 248.7 527.3" stroke="#9c7c58" stroke-opacity="0.34" stroke-width="0.52" fill="none"/><path d="M339.0 227.7 Q356.1 266.3 460.2 290.0" stroke="#0a0805" stroke-opacity="0.26" stroke-width="0.91" fill="none"/><path d="M309.7 227.6 Q293.2 389.2 198.3 488.2" stroke="#9c7c58" stroke-opacity="0.14" stroke-width="0.48" fill="none"/><path d="M307.2 228.0 Q286.1 367.3 174.1 452.7" stroke="#4a3a2a" stroke-opacity="0.44" stroke-width="0.65" fill="none"/><path d="M308.0 228.3 Q284.6 296.5 162.5 338.3" stroke="#4a3a2a" stroke-opacity="0.46" stroke-width="0.94" fill="none"/><path d="M304.2 228.4 Q285.2 337.7 158.3 404.7" stroke="#9c7c58" stroke-opacity="0.23" stroke-width="0.70" fill="none"/><path d="M342.8 227.8 Q358.6 269.4 466.6 294.8" stroke="#0a0805" stroke-opacity="0.47" stroke-width="0.90" fill="none"/><path d="M311.5 227.2 Q298.6 259.0 217.5 278.5" stroke="#4a3a2a" stroke-opacity="0.47" stroke-width="0.73" fill="none"/><path d="M312.8 227.8 Q293.7 271.7 186.6 298.6" stroke="#0a0805" stroke-opacity="0.22" stroke-width="0.99" fill="none"/><path d="M314.0 227.7 Q297.8 385.0 193.2 481.4" stroke="#9c7c58" stroke-opacity="0.22" stroke-width="0.67" fill="none"/><path d="M329.0 225.6 Q330.8 226.1 353.8 226.4" stroke="#9c7c58" stroke-opacity="0.14" stroke-width="0.71" fill="none"/><path d="M338.5 227.4 Q354.1 261.2 447.0 281.9" stroke="#0a0805" stroke-opacity="0.23" stroke-width="0.81" fill="none"/><path d="M323.0 226.0 Q317.7 419.7 275.1 538.4" stroke="#0a0805" stroke-opacity="0.30" stroke-width="0.79" fill="none"/><path d="M344.3 227.5 Q363.4 388.1 453.1 486.6" stroke="#9c7c58" stroke-opacity="0.17" stroke-width="0.49" fill="none"/><path d="M346.7 228.5 Q370.2 315.7 499.5 369.2" stroke="#9c7c58" stroke-opacity="0.12" stroke-width="0.57" fill="none"/><path d="M340.9 227.4 Q359.4 393.1 445.8 494.6" stroke="#0a0805" stroke-opacity="0.38" stroke-width="0.93" fill="none"/><path d="M304.5 228.0 Q287.6 369.7 176.2 456.5" stroke="#0a0805" stroke-opacity="0.51" stroke-width="1.06" fill="none"/><path d="M337.5 227.0 Q348.7 402.9 428.2 510.8" stroke="#0a0805" stroke-opacity="0.22" stroke-width="0.55" fill="none"/><path d="M343.7 228.4 Q365.7 300.0 496.3 343.9" stroke="#9c7c58" stroke-opacity="0.12" stroke-width="0.46" fill="none"/><path d="M336.5 226.9 Q346.6 251.2 422.9 266.0" stroke="#0a0805" stroke-opacity="0.41" stroke-width="0.60" fill="none"/><path d="M345.6 228.5 Q367.9 327.8 499.7 388.7" stroke="#9c7c58" stroke-opacity="0.34" stroke-width="0.80" fill="none"/><path d="M330.0 225.7 Q332.1 423.3 360.6 544.5" stroke="#9c7c58" stroke-opacity="0.21" stroke-width="0.51" fill="none"/><path d="M305.6 227.9 Q283.7 276.7 178.6 306.6" stroke="#0a0805" stroke-opacity="0.38" stroke-width="0.60" fill="none"/><path d="M316.8 225.9 Q311.7 420.9 281.3 540.3" stroke="#0a0805" stroke-opacity="0.50" stroke-width="0.99" fill="none"/><path d="M345.7 228.5 Q366.7 333.5 498.9 397.9" stroke="#0a0805" stroke-opacity="0.39" stroke-width="1.05" fill="none"/><path d="M341.3 227.9 Q362.7 373.6 471.7 462.9" stroke="#0a0805" stroke-opacity="0.50" stroke-width="1.06" fill="none"/><path d="M309.5 228.1 Q287.3 282.4 172.6 315.7" stroke="#4a3a2a" stroke-opacity="0.41" stroke-width="0.51" fill="none"/><path d="M328.2 225.7 Q331.5 226.5 359.4 227.0" stroke="#0a0805" stroke-opacity="0.53" stroke-width="0.81" fill="none"/><path d="M322.9 226.2 Q317.3 233.9 267.3 238.7" stroke="#9c7c58" stroke-opacity="0.18" stroke-width="0.49" fill="none"/><path d="M343.6 228.3 Q366.7 292.6 492.6 332.0" stroke="#0a0805" stroke-opacity="0.49" stroke-width="0.84" fill="none"/><path d="M312.0 227.7 Q291.2 382.0 189.5 476.5" stroke="#0a0805" stroke-opacity="0.52" stroke-width="1.05" fill="none"/><path d="M305.4 228.4 Q281.0 324.5 155.6 383.4" stroke="#0a0805" stroke-opacity="0.32" stroke-width="1.06" fill="none"/><path d="M322.2 225.5 Q318.5 226.8 301.3 227.6" stroke="#0a0805" stroke-opacity="0.45" stroke-width="0.62" fill="none"/><path d="M337.5 227.4 Q356.0 260.5 445.0 280.7" stroke="#0a0805" stroke-opacity="0.25" stroke-width="1.08" fill="none"/><path d="M325.4 225.3 Q322.2 225.9 310.2 226.3" stroke="#4a3a2a" stroke-opacity="0.34" stroke-width="0.51" fill="none"/><path d="M324.1 225.5 Q320.8 226.9 300.5 227.7" stroke="#0a0805" stroke-opacity="0.35" stroke-width="1.11" fill="none"/><path d="M305.8 228.0 Q285.0 278.2 177.0 308.9" stroke="#9c7c58" stroke-opacity="0.18" stroke-width="0.63" fill="none"/><path d="M346.1 228.5 Q366.8 332.4 499.0 396.1" stroke="#0a0805" stroke-opacity="0.32" stroke-width="0.82" fill="none"/><path d="M319.3 226.7 Q307.4 411.0 243.2 524.0" stroke="#0a0805" stroke-opacity="0.38" stroke-width="0.87" fill="none"/><path d="M319.2 225.5 Q316.1 423.6 301.1 545.0" stroke="#9c7c58" stroke-opacity="0.12" stroke-width="0.72" fill="none"/><path d="M344.4 228.1 Q366.3 278.6 481.4 309.6" stroke="#4a3a2a" stroke-opacity="0.40" stroke-width="0.76" fill="none"/><path d="M321.4 226.1 Q311.2 418.5 269.1 536.5" stroke="#4a3a2a" stroke-opacity="0.37" stroke-width="0.64" fill="none"/><path d="M305.8 228.4 Q283.9 310.3 157.4 360.6" stroke="#0a0805" stroke-opacity="0.52" stroke-width="0.81" fill="none"/><path d="M313.1 227.2 Q299.0 400.5 218.3 506.8" stroke="#0a0805" stroke-opacity="0.36" stroke-width="0.87" fill="none"/><path d="M332.2 225.4 Q335.8 423.9 348.1 545.5" stroke="#0a0805" stroke-opacity="0.53" stroke-width="0.68" fill="none"/><path d="M322.2 226.2 Q315.7 417.8 265.1 535.2" stroke="#9c7c58" stroke-opacity="0.15" stroke-width="0.58" fill="none"/><path d="M332.9 226.5 Q340.5 238.4 400.9 245.7" stroke="#0a0805" stroke-opacity="0.47" stroke-width="1.13" fill="none"/><path d="M344.9 227.9 Q364.4 270.3 468.7 296.4" stroke="#9c7c58" stroke-opacity="0.35" stroke-width="0.79" fill="none"/><path d="M350.3 228.4 Q371.8 306.9 498.1 355.0" stroke="#4a3a2a" stroke-opacity="0.60" stroke-width="0.92" fill="none"/><path d="M343.3 228.0 Q363.1 273.1 474.5 300.7" stroke="#9c7c58" stroke-opacity="0.17" stroke-width="0.53" fill="none"/><path d="M302.2 228.3 Q281.1 342.3 159.4 412.2" stroke="#4a3a2a" stroke-opacity="0.31" stroke-width="0.67" fill="none"/><path d="M312.1 227.3 Q294.1 395.8 209.4 499.0" stroke="#0a0805" stroke-opacity="0.48" stroke-width="1.18" fill="none"/><path d="M336.1 227.0 Q346.8 252.4 425.7 268.1" stroke="#0a0805" stroke-opacity="0.29" stroke-width="0.59" fill="none"/><path d="M338.5 226.5 Q350.1 414.1 403.1 529.0" stroke="#9c7c58" stroke-opacity="0.16" stroke-width="0.77" fill="none"/><path d="M319.0 226.4 Q306.9 415.1 254.5 530.8" stroke="#9c7c58" stroke-opacity="0.30" stroke-width="0.57" fill="none"/><path d="M338.5 226.5 Q348.6 238.3 400.8 245.6" stroke="#0a0805" stroke-opacity="0.23" stroke-width="1.10" fill="none"/><path d="M337.3 226.4 Q345.8 236.1 396.0 242.0" stroke="#9c7c58" stroke-opacity="0.26" stroke-width="0.77" fill="none"/><path d="M343.7 228.4 Q367.1 337.8 498.3 404.9" stroke="#9c7c58" stroke-opacity="0.15" stroke-width="0.46" fill="none"/><path d="M330.3 226.1 Q336.9 230.3 381.9 232.9" stroke="#9c7c58" stroke-opacity="0.32" stroke-width="0.52" fill="none"/><path d="M323.3 225.0 Q322.7 424.9 325.3 547.4" stroke="#9c7c58" stroke-opacity="0.19" stroke-width="0.41" fill="none"/><path d="M306.2 228.4 Q282.1 335.4 157.8 400.9" stroke="#4a3a2a" stroke-opacity="0.58" stroke-width="0.55" fill="none"/><path d="M307.1 228.1 Q286.9 282.1 172.9 315.2" stroke="#0a0805" stroke-opacity="0.34" stroke-width="0.85" fill="none"/><path d="M311.2 228.1 Q289.1 363.2 170.4 446.0" stroke="#0a0805" stroke-opacity="0.45" stroke-width="0.95" fill="none"/><path d="M335.8 226.8 Q345.4 407.5 417.8 518.3" stroke="#9c7c58" stroke-opacity="0.14" stroke-width="0.70" fill="none"/><path d="M344.1 228.5 Q364.9 330.0 499.4 392.2" stroke="#0a0805" stroke-opacity="0.50" stroke-width="0.97" fill="none"/><path d="M344.1 228.4 Q365.3 346.4 493.9 418.7" stroke="#4a3a2a" stroke-opacity="0.35" stroke-width="0.72" fill="none"/><path d="M350.4 228.5 Q375.5 334.9 498.7 400.1" stroke="#4a3a2a" stroke-opacity="0.37" stroke-width="0.98" fill="none"/><path d="M343.6 228.1 Q361.4 362.5 482.4 444.9" stroke="#9c7c58" stroke-opacity="0.24" stroke-width="0.60" fill="none"/><path d="M346.2 228.4 Q365.4 295.2 493.9 336.2" stroke="#9c7c58" stroke-opacity="0.14" stroke-width="0.56" fill="none"/><path d="M327.8 225.9 Q333.5 228.8 373.2 230.5" stroke="#9c7c58" stroke-opacity="0.27" stroke-width="0.61" fill="none"/><path d="M306.8 228.4 Q285.4 324.2 155.5 382.9" stroke="#0a0805" stroke-opacity="0.34" stroke-width="0.73" fill="none"/><path d="M321.8 225.2 Q322.1 225.5 314.8 225.7" stroke="#0a0805" stroke-opacity="0.22" stroke-width="1.08" fill="none"/><path d="M315.7 226.9 Q304.4 252.9 231.4 268.8" stroke="#0a0805" stroke-opacity="0.25" stroke-width="0.87" fill="none"/><path d="M328.1 225.1 Q328.8 424.6 320.8 546.9" stroke="#0a0805" stroke-opacity="0.40" stroke-width="1.12" fill="none"/><path d="M309.2 228.1 Q287.1 365.9 172.8 450.4" stroke="#9c7c58" stroke-opacity="0.15" stroke-width="0.54" fill="none"/><path d="M340.7 227.0 Q353.8 252.5 425.8 268.1" stroke="#0a0805" stroke-opacity="0.42" stroke-width="0.98" fill="none"/><path d="M323.3 225.2 Q327.0 424.4 336.4 546.5" stroke="#0a0805" stroke-opacity="0.38" stroke-width="0.87" fill="none"/><path d="M305.7 227.8 Q289.1 378.8 185.6 471.3" stroke="#9c7c58" stroke-opacity="0.14" stroke-width="0.51" fill="none"/><path d="M303.5 228.4 Q283.2 337.7 158.3 404.8" stroke="#0a0805" stroke-opacity="0.37" stroke-width="0.77" fill="none"/><path d="M330.0 225.4 Q334.2 423.9 347.1 545.6" stroke="#4a3a2a" stroke-opacity="0.49" stroke-width="0.54" fill="none"/><path d="M340.5 227.7 Q360.3 267.6 462.9 292.0" stroke="#9c7c58" stroke-opacity="0.27" stroke-width="0.40" fill="none"/><path d="M331.9 226.3 Q341.8 233.8 390.9 238.4" stroke="#0a0805" stroke-opacity="0.44" stroke-width="0.70" fill="none"/><path d="M323.6 225.4 Q321.1 424.0 308.3 545.7" stroke="#9c7c58" stroke-opacity="0.35" stroke-width="0.48" fill="none"/><path d="M327.3 225.4 Q321.5 226.2 308.0 226.7" stroke="#4a3a2a" stroke-opacity="0.55" stroke-width="0.98" fill="none"/><path d="M330.2 226.0 Q335.5 420.2 376.8 539.3" stroke="#0a0805" stroke-opacity="0.27" stroke-width="0.91" fill="none"/><path d="M342.0 227.6 Q362.2 265.3 458.1 288.4" stroke="#9c7c58" stroke-opacity="0.33" stroke-width="0.60" fill="none"/><path d="M315.8 227.0 Q301.0 255.1 227.6 272.3" stroke="#0a0805" stroke-opacity="0.37" stroke-width="0.52" fill="none"/><path d="M326.9 225.2 Q327.7 224.7 334.2 224.4" stroke="#9c7c58" stroke-opacity="0.16" stroke-width="0.54" fill="none"/><path d="M347.1 228.1 Q363.9 366.1 478.9 450.8" stroke="#0a0805" stroke-opacity="0.49" stroke-width="0.58" fill="none"/><path d="M319.6 226.3 Q312.9 238.2 258.6 245.5" stroke="#9c7c58" stroke-opacity="0.22" stroke-width="0.56" fill="none"/><path d="M327.1 225.1 Q326.6 224.4 329.2 224.0" stroke="#4a3a2a" stroke-opacity="0.38" stroke-width="0.52" fill="none"/><path d="M340.3 226.9 Q351.5 251.2 423.1 266.1" stroke="#0a0805" stroke-opacity="0.29" stroke-width="0.69" fill="none"/><path d="M322.1 225.2 Q320.1 424.3 314.0 546.3" stroke="#0a0805" stroke-opacity="0.51" stroke-width="1.07" fill="none"/><path d="M314.7 227.4 Q300.7 392.9 204.0 494.3" stroke="#4a3a2a" stroke-opacity="0.52" stroke-width="0.52" fill="none"/><path d="M305.4 228.4 Q284.8 335.8 157.9 401.7" stroke="#0a0805" stroke-opacity="0.30" stroke-width="0.53" fill="none"/><path d="M315.0 226.3 Q306.4 238.1 258.9 245.3" stroke="#9c7c58" stroke-opacity="0.20" stroke-width="0.70" fill="none"/><path d="M321.7 225.4 Q320.3 226.3 306.1 226.9" stroke="#9c7c58" stroke-opacity="0.26" stroke-width="0.56" fill="none"/><path d="M341.6 228.1 Q360.4 275.9 478.5 305.2" stroke="#0a0805" stroke-opacity="0.37" stroke-width="0.65" fill="none"/><path d="M319.9 226.7 Q308.0 246.5 242.4 258.7" stroke="#9c7c58" stroke-opacity="0.17" stroke-width="0.44" fill="none"/><path d="M339.4 227.8 Q356.6 380.2 464.8 473.6" stroke="#9c7c58" stroke-opacity="0.27" stroke-width="0.75" fill="none"/><path d="M304.9 228.4 Q282.0 324.8 155.6 383.9" stroke="#4a3a2a" stroke-opacity="0.41" stroke-width="0.67" fill="none"/><path d="M332.2 226.3 Q344.0 234.3 392.1 239.2" stroke="#9c7c58" stroke-opacity="0.25" stroke-width="0.65" fill="none"/><path d="M309.3 227.4 Q292.5 263.1 206.1 285.0" stroke="#9c7c58" stroke-opacity="0.22" stroke-width="0.58" fill="none"/><path d="M323.7 225.8 Q319.9 229.9 283.7 232.4" stroke="#9c7c58" stroke-opacity="0.13" stroke-width="0.68" fill="none"/><path d="M314.8 226.8 Q303.2 251.2 234.3 266.1" stroke="#9c7c58" stroke-opacity="0.22" stroke-width="0.77" fill="none"/><path d="M310.9 228.0 Q293.6 278.5 176.7 309.4" stroke="#9c7c58" stroke-opacity="0.15" stroke-width="0.46" fill="none"/><path d="M324.6 225.5 Q323.9 423.6 302.2 545.1" stroke="#0a0805" stroke-opacity="0.43" stroke-width="1.04" fill="none"/><path d="M331.6 225.9 Q334.5 422.0 369.2 542.1" stroke="#0a0805" stroke-opacity="0.28" stroke-width="1.14" fill="none"/><path d="M308.6 227.6 Q289.2 385.8 194.2 482.7" stroke="#9c7c58" stroke-opacity="0.29" stroke-width="0.68" fill="none"/><path d="M335.3 227.1 Q349.9 255.3 431.8 272.6" stroke="#4a3a2a" stroke-opacity="0.42" stroke-width="0.61" fill="none"/><path d="M310.3 227.0 Q296.6 405.2 227.4 514.5" stroke="#4a3a2a" stroke-opacity="0.59" stroke-width="0.82" fill="none"/><path d="M313.7 227.0 Q298.8 256.3 225.0 274.2" stroke="#9c7c58" stroke-opacity="0.37" stroke-width="0.68" fill="none"/><path d="M341.1 228.2 Q362.4 361.4 483.6 443.0" stroke="#0a0805" stroke-opacity="0.35" stroke-width="0.68" fill="none"/><path d="M312.0 227.9 Q290.6 374.6 180.7 464.5" stroke="#9c7c58" stroke-opacity="0.21" stroke-width="0.57" fill="none"/><path d="M305.2 228.1 Q287.2 366.1 173.0 450.7" stroke="#0a0805" stroke-opacity="0.38" stroke-width="0.64" fill="none"/><path d="M321.3 225.5 Q320.0 227.0 299.5 227.9" stroke="#9c7c58" stroke-opacity="0.18" stroke-width="0.70" fill="none"/><path d="M349.2 228.3 Q370.1 354.1 488.8 431.2" stroke="#9c7c58" stroke-opacity="0.18" stroke-width="0.57" fill="none"/><path d="M312.3 227.9 Q290.6 375.7 181.8 466.3" stroke="#9c7c58" stroke-opacity="0.18" stroke-width="0.79" fill="none"/><path d="M338.3 227.6 Q353.6 265.4 458.3 288.6" stroke="#9c7c58" stroke-opacity="0.35" stroke-width="0.75" fill="none"/><path d="M309.8 228.4 Q289.6 335.6 157.9 401.3" stroke="#9c7c58" stroke-opacity="0.17" stroke-width="0.77" fill="none"/><path d="M301.9 228.4 Q281.0 326.9 156.1 387.3" stroke="#9c7c58" stroke-opacity="0.22" stroke-width="0.53" fill="none"/><path d="M340.5 228.1 Q360.0 276.9 479.6 306.9" stroke="#9c7c58" stroke-opacity="0.37" stroke-width="0.45" fill="none"/><path d="M319.8 225.6 Q315.0 227.6 293.7 228.8" stroke="#0a0805" stroke-opacity="0.49" stroke-width="0.80" fill="none"/><path d="M332.4 226.1 Q338.9 230.1 380.7 232.6" stroke="#0a0805" stroke-opacity="0.27" stroke-width="0.75" fill="none"/><path d="M311.4 226.8 Q299.4 250.6 235.3 265.2" stroke="#0a0805" stroke-opacity="0.47" stroke-width="0.53" fill="none"/><path d="M327.3 225.8 Q335.7 227.5 366.3 228.6" stroke="#9c7c58" stroke-opacity="0.31" stroke-width="0.76" fill="none"/><path d="M341.1 227.8 Q362.6 378.7 466.6 471.2" stroke="#4a3a2a" stroke-opacity="0.38" stroke-width="0.86" fill="none"/><path d="M342.5 228.1 Q360.0 366.4 478.7 451.1" stroke="#0a0805" stroke-opacity="0.52" stroke-width="0.94" fill="none"/><path d="M315.9 226.1 Q307.9 232.4 273.3 236.3" stroke="#4a3a2a" stroke-opacity="0.59" stroke-width="0.98" fill="none"/><path d="M336.9 227.1 Q350.9 400.8 433.1 507.2" stroke="#4a3a2a" stroke-opacity="0.58" stroke-width="0.59" fill="none"/><path d="M308.6 228.2 Q289.1 291.5 165.4 330.3" stroke="#0a0805" stroke-opacity="0.41" stroke-width="0.73" fill="none"/><path d="M343.0 228.0 Q364.8 368.0 477.1 453.8" stroke="#9c7c58" stroke-opacity="0.17" stroke-width="0.70" fill="none"/><path d="M343.4 228.5 Q364.1 324.7 500.1 383.6" stroke="#4a3a2a" stroke-opacity="0.40" stroke-width="0.99" fill="none"/><path d="M317.7 227.0 Q302.4 256.4 224.7 274.4" stroke="#9c7c58" stroke-opacity="0.15" stroke-width="0.60" fill="none"/><path d="M306.0 228.3 Q282.9 350.0 162.8 424.6" stroke="#4a3a2a" stroke-opacity="0.49" stroke-width="0.84" fill="none"/><path d="M308.4 228.4 Q286.5 325.9 155.9 385.6" stroke="#9c7c58" stroke-opacity="0.34" stroke-width="0.52" fill="none"/><path d="M316.8 226.4 Q309.4 416.3 257.8 532.8" stroke="#9c7c58" stroke-opacity="0.18" stroke-width="0.50" fill="none"/><path d="M346.1 227.8 Q364.8 269.9 467.8 295.7" stroke="#9c7c58" stroke-opacity="0.22" stroke-width="0.80" fill="none"/><path d="M322.9 225.2 Q324.0 424.5 317.8 546.6" stroke="#0a0805" stroke-opacity="0.55" stroke-width="0.57" fill="none"/><path d="M331.6 225.5 Q336.6 423.7 351.5 545.2" stroke="#0a0805" stroke-opacity="0.21" stroke-width="0.71" fill="none"/><path d="M336.9 227.2 Q354.9 257.9 437.9 276.7" stroke="#4a3a2a" stroke-opacity="0.58" stroke-width="0.69" fill="none"/><path d="M311.6 227.3 Q294.8 262.1 209.1 283.3" stroke="#0a0805" stroke-opacity="0.53" stroke-width="0.57" fill="none"/><path d="M315.7 226.9 Q301.4 406.8 231.8 517.1" stroke="#9c7c58" stroke-opacity="0.16" stroke-width="0.48" fill="none"/><path d="M347.6 228.5 Q371.3 329.5 499.4 391.5" stroke="#9c7c58" stroke-opacity="0.12" stroke-width="0.53" fill="none"/><path d="M305.4 228.0 Q284.7 368.5 175.2 454.6" stroke="#9c7c58" stroke-opacity="0.33" stroke-width="0.62" fill="none"/><path d="M330.9 226.3 Q339.6 234.8 393.1 240.0" stroke="#4a3a2a" stroke-opacity="0.49" stroke-width="0.55" fill="none"/><path d="M345.6 228.0 Q364.7 273.9 476.4 302.1" stroke="#9c7c58" stroke-opacity="0.20" stroke-width="0.78" fill="none"/><path d="M345.1 228.1 Q364.6 364.1 480.9 447.4" stroke="#4a3a2a" stroke-opacity="0.56" stroke-width="1.00" fill="none"/><path d="M338.4 227.5 Q356.5 390.5 449.6 490.4" stroke="#9c7c58" stroke-opacity="0.12" stroke-width="0.76" fill="none"/><path d="M337.7 226.5 Q346.7 414.6 401.8 529.9" stroke="#0a0805" stroke-opacity="0.36" stroke-width="0.61" fill="none"/><path d="M328.8 225.4 Q332.2 225.5 345.8 225.6" stroke="#0a0805" stroke-opacity="0.23" stroke-width="0.94" fill="none"/><path d="M340.3 227.4 Q353.8 393.8 444.7 495.9" stroke="#9c7c58" stroke-opacity="0.26" stroke-width="0.77" fill="none"/><path d="M338.3 227.1 Q353.7 254.0 429.0 270.5" stroke="#0a0805" stroke-opacity="0.27" stroke-width="0.59" fill="none"/><path d="M323.5 226.1 Q315.8 232.4 273.1 236.3" stroke="#9c7c58" stroke-opacity="0.36" stroke-width="0.56" fill="none"/><path d="M316.7 226.7 Q307.3 247.4 240.8 260.1" stroke="#9c7c58" stroke-opacity="0.32" stroke-width="0.49" fill="none"/><path d="M339.8 226.8 Q353.5 407.5 418.0 518.1" stroke="#9c7c58" stroke-opacity="0.18" stroke-width="0.56" fill="none"/><path d="M322.8 225.4 Q318.1 423.9 306.9 545.5" stroke="#9c7c58" stroke-opacity="0.31" stroke-width="0.76" fill="none"/><path d="M332.1 225.9 Q339.7 228.7 372.6 230.3" stroke="#9c7c58" stroke-opacity="0.34" stroke-width="0.45" fill="none"/><path d="M314.7 226.9 Q302.6 405.7 228.8 515.3" stroke="#9c7c58" stroke-opacity="0.23" stroke-width="0.63" fill="none"/><path d="M336.1 226.5 Q345.4 415.0 399.9 530.6" stroke="#4a3a2a" stroke-opacity="0.31" stroke-width="0.81" fill="none"/><path d="M325.1 225.2 Q328.4 424.4 336.2 546.5" stroke="#0a0805" stroke-opacity="0.36" stroke-width="0.63" fill="none"/><path d="M326.1 225.5 Q327.9 423.7 353.1 545.1" stroke="#4a3a2a" stroke-opacity="0.33" stroke-width="0.72" fill="none"/><path d="M321.0 225.2 Q320.9 424.3 314.9 546.3" stroke="#9c7c58" stroke-opacity="0.31" stroke-width="0.71" fill="none"/><path d="M320.9 225.3 Q319.8 424.2 313.5 546.2" stroke="#9c7c58" stroke-opacity="0.37" stroke-width="0.45" fill="none"/><path d="M315.0 227.5 Q299.3 265.2 201.1 288.3" stroke="#0a0805" stroke-opacity="0.27" stroke-width="1.19" fill="none"/><path d="M330.6 225.2 Q333.6 424.5 333.8 546.7" stroke="#9c7c58" stroke-opacity="0.32" stroke-width="0.77" fill="none"/><path d="M333.1 226.4 Q343.9 235.6 395.1 241.3" stroke="#9c7c58" stroke-opacity="0.35" stroke-width="0.51" fill="none"/><path d="M304.5 228.1 Q284.5 283.9 171.0 318.1" stroke="#0a0805" stroke-opacity="0.27" stroke-width="0.68" fill="none"/><path d="M323.7 225.1 Q320.3 424.6 319.1 546.8" stroke="#9c7c58" stroke-opacity="0.16" stroke-width="0.77" fill="none"/><path d="M311.0 228.0 Q288.5 367.7 174.5 453.3" stroke="#0a0805" stroke-opacity="0.24" stroke-width="0.87" fill="none"/><path d="M309.7 227.5 Q295.5 390.5 199.9 490.4" stroke="#4a3a2a" stroke-opacity="0.47" stroke-width="0.94" fill="none"/><path d="M341.9 227.0 Q355.2 252.4 425.5 267.9" stroke="#9c7c58" stroke-opacity="0.33" stroke-width="0.51" fill="none"/><path d="M326.0 225.1 Q324.3 224.9 320.7 224.8" stroke="#0a0805" stroke-opacity="0.35" stroke-width="0.62" fill="none"/><path d="M302.0 228.4 Q282.1 328.7 156.4 390.1" stroke="#9c7c58" stroke-opacity="0.29" stroke-width="0.79" fill="none"/><path d="M317.1 226.7 Q304.6 410.2 240.9 522.6" stroke="#9c7c58" stroke-opacity="0.13" stroke-width="0.46" fill="none"/><path d="M312.2 227.2 Q297.8 399.1 215.6 504.4" stroke="#0a0805" stroke-opacity="0.25" stroke-width="0.66" fill="none"/><path d="M305.8 227.7 Q285.4 381.9 189.4 476.4" stroke="#9c7c58" stroke-opacity="0.15" stroke-width="0.54" fill="none"/><path d="M347.4 228.5 Q370.6 309.9 498.6 359.8" stroke="#9c7c58" stroke-opacity="0.28" stroke-width="0.59" fill="none"/><path d="M344.6 227.5 Q359.2 263.0 451.9 284.7" stroke="#9c7c58" stroke-opacity="0.14" stroke-width="0.66" fill="none"/><path d="M314.8 227.2 Q299.0 260.4 213.7 280.7" stroke="#9c7c58" stroke-opacity="0.12" stroke-width="0.66" fill="none"/><path d="M317.2 226.3 Q309.8 417.3 262.3 534.3" stroke="#4a3a2a" stroke-opacity="0.58" stroke-width="0.87" fill="none"/><path d="M350.1 228.5 Q369.9 325.4 500.0 384.9" stroke="#4a3a2a" stroke-opacity="0.42" stroke-width="0.62" fill="none"/><path d="M335.8 226.3 Q340.8 233.0 389.0 237.1" stroke="#4a3a2a" stroke-opacity="0.58" stroke-width="0.57" fill="none"/><path d="M347.0 228.3 Q369.0 294.3 493.5 334.7" stroke="#0a0805" stroke-opacity="0.48" stroke-width="0.62" fill="none"/><path d="M343.2 228.1 Q361.4 362.5 482.5 444.8" stroke="#0a0805" stroke-opacity="0.47" stroke-width="1.00" fill="none"/><path d="M330.1 225.2 Q332.6 224.9 337.1 224.7" stroke="#4a3a2a" stroke-opacity="0.52" stroke-width="0.73" fill="none"/><path d="M343.6 228.5 Q365.2 311.0 498.8 361.5" stroke="#9c7c58" stroke-opacity="0.21" stroke-width="0.70" fill="none"/><path d="M309.7 228.2 Q289.5 359.0 166.9 439.2" stroke="#9c7c58" stroke-opacity="0.26" stroke-width="0.57" fill="none"/><path d="M306.3 228.3 Q283.0 300.1 160.3 344.1" stroke="#0a0805" stroke-opacity="0.54" stroke-width="0.65" fill="none"/><path d="M309.6 227.1 Q295.0 257.5 221.6 276.2" stroke="#9c7c58" stroke-opacity="0.31" stroke-width="0.78" fill="none"/><path d="M304.2 228.4 Q284.3 327.0 156.1 387.5" stroke="#9c7c58" stroke-opacity="0.18" stroke-width="0.76" fill="none"/><path d="M312.9 227.4 Q297.6 393.0 204.1 494.4" stroke="#0a0805" stroke-opacity="0.36" stroke-width="1.09" fill="none"/><path d="M309.7 228.2 Q287.8 357.5 166.2 436.7" stroke="#0a0805" stroke-opacity="0.40" stroke-width="0.72" fill="none"/><path d="M347.5 228.4 Q367.5 302.0 497.3 347.1" stroke="#0a0805" stroke-opacity="0.25" stroke-width="0.52" fill="none"/><path d="M341.6 227.0 Q353.5 253.2 427.3 269.2" stroke="#9c7c58" stroke-opacity="0.13" stroke-width="0.42" fill="none"/><path d="M308.1 228.2 Q288.3 360.5 167.9 441.6" stroke="#0a0805" stroke-opacity="0.22" stroke-width="0.91" fill="none"/><path d="M343.4 227.5 Q361.3 390.3 449.9 490.1" stroke="#0a0805" stroke-opacity="0.22" stroke-width="1.11" fill="none"/><path d="M320.3 226.5 Q307.2 243.1 248.8 253.2" stroke="#9c7c58" stroke-opacity="0.15" stroke-width="0.41" fill="none"/><path d="M312.6 227.7 Q295.5 268.7 193.2 293.9" stroke="#0a0805" stroke-opacity="0.42" stroke-width="0.70" fill="none"/><path d="M334.3 226.9 Q348.9 250.5 421.6 265.0" stroke="#9c7c58" stroke-opacity="0.20" stroke-width="0.57" fill="none"/><path d="M327.2 225.5 Q329.6 226.0 352.1 226.2" stroke="#0a0805" stroke-opacity="0.33" stroke-width="0.72" fill="none"/><path d="M322.1 225.7 Q319.9 227.6 293.5 228.8" stroke="#4a3a2a" stroke-opacity="0.31" stroke-width="0.71" fill="none"/><path d="M335.8 226.3 Q342.9 417.4 389.5 534.5" stroke="#0a0805" stroke-opacity="0.39" stroke-width="0.65" fill="none"/><path d="M308.3 227.4 Q294.8 263.3 205.6 285.3" stroke="#9c7c58" stroke-opacity="0.12" stroke-width="0.48" fill="none"/><path d="M309.4 228.4 Q283.4 316.8 156.1 371.0" stroke="#4a3a2a" stroke-opacity="0.45" stroke-width="0.90" fill="none"/><path d="M345.4 228.2 Q366.0 285.2 488.4 320.1" stroke="#0a0805" stroke-opacity="0.29" stroke-width="1.16" fill="none"/><path d="M343.8 228.3 Q367.4 347.4 493.2 420.4" stroke="#4a3a2a" stroke-opacity="0.33" stroke-width="0.82" fill="none"/><path d="M338.0 226.6 Q349.5 242.2 407.0 251.8" stroke="#0a0805" stroke-opacity="0.42" stroke-width="0.75" fill="none"/><path d="M336.5 226.9 Q351.5 406.3 420.7 516.2" stroke="#9c7c58" stroke-opacity="0.35" stroke-width="0.41" fill="none"/><path d="M344.4 228.4 Q369.5 298.4 495.5 341.3" stroke="#4a3a2a" stroke-opacity="0.41" stroke-width="0.94" fill="none"/><path d="M346.5 228.5 Q369.7 315.9 499.5 369.4" stroke="#0a0805" stroke-opacity="0.46" stroke-width="0.95" fill="none"/><path d="M340.7 227.7 Q356.6 383.3 460.3 478.6" stroke="#0a0805" stroke-opacity="0.43" stroke-width="1.02" fill="none"/><path d="M344.0 228.1 Q366.0 277.1 479.8 307.1" stroke="#4a3a2a" stroke-opacity="0.34" stroke-width="0.73" fill="none"/><path d="M311.9 227.0 Q297.2 255.9 226.2 273.5" stroke="#9c7c58" stroke-opacity="0.30" stroke-width="0.74" fill="none"/><path d="M340.4 227.9 Q358.1 270.4 468.8 296.4" stroke="#9c7c58" stroke-opacity="0.26" stroke-width="0.46" fill="none"/><path d="M341.1 227.9 Q363.7 372.7 472.5 461.4" stroke="#0a0805" stroke-opacity="0.24" stroke-width="1.17" fill="none"/><path d="M336.7 226.9 Q352.6 251.2 423.1 266.1" stroke="#0a0805" stroke-opacity="0.46" stroke-width="0.80" fill="none"/><path d="M347.1 228.3 Q366.5 292.3 492.4 331.4" stroke="#9c7c58" stroke-opacity="0.22" stroke-width="0.41" fill="none"/><path d="M339.9 226.9 Q353.5 405.4 422.6 514.8" stroke="#4a3a2a" stroke-opacity="0.49" stroke-width="0.73" fill="none"/><path d="M342.7 227.6 Q359.4 265.4 458.2 288.5" stroke="#0a0805" stroke-opacity="0.52" stroke-width="0.80" fill="none"/><path d="M319.1 226.5 Q308.5 414.0 251.5 529.0" stroke="#9c7c58" stroke-opacity="0.31" stroke-width="0.75" fill="none"/><path d="M307.4 228.4 Q287.1 309.2 157.7 358.7" stroke="#0a0805" stroke-opacity="0.42" stroke-width="0.82" fill="none"/><path d="M345.6 228.1 Q363.4 364.4 480.6 448.0" stroke="#4a3a2a" stroke-opacity="0.53" stroke-width="0.86" fill="none"/><path d="M309.5 227.4 Q293.3 393.4 205.0 495.1" stroke="#4a3a2a" stroke-opacity="0.49" stroke-width="0.70" fill="none"/><path d="M311.5 228.0 Q289.4 370.2 176.7 457.3" stroke="#0a0805" stroke-opacity="0.47" stroke-width="0.77" fill="none"/><path d="M331.0 225.2 Q328.9 424.4 335.9 546.5" stroke="#4a3a2a" stroke-opacity="0.35" stroke-width="0.89" fill="none"/><path d="M319.5 226.1 Q309.8 233.0 270.7 237.2" stroke="#4a3a2a" stroke-opacity="0.46" stroke-width="0.86" fill="none"/><path d="M325.5 225.3 Q325.6 424.2 312.8 546.1" stroke="#4a3a2a" stroke-opacity="0.42" stroke-width="0.97" fill="none"/><path d="M348.0 228.4 Q369.6 300.8 496.7 345.2" stroke="#0a0805" stroke-opacity="0.24" stroke-width="1.19" fill="none"/><path d="M338.0 227.6 Q354.2 386.6 455.4 484.0" stroke="#9c7c58" stroke-opacity="0.12" stroke-width="0.57" fill="none"/><path d="M337.0 226.6 Q346.2 413.4 404.5 528.0" stroke="#9c7c58" stroke-opacity="0.18" stroke-width="0.70" fill="none"/><path d="M319.5 226.1 Q310.4 233.2 270.0 237.5" stroke="#0a0805" stroke-opacity="0.34" stroke-width="0.65" fill="none"/><path d="M342.7 227.4 Q360.2 261.2 447.0 281.9" stroke="#0a0805" stroke-opacity="0.36" stroke-width="0.89" fill="none"/><path d="M350.4 228.5 Q371.8 311.0 498.8 361.6" stroke="#0a0805" stroke-opacity="0.49" stroke-width="1.07" fill="none"/><path d="M328.2 225.6 Q333.0 423.4 358.4 544.6" stroke="#9c7c58" stroke-opacity="0.34" stroke-width="0.54" fill="none"/><path d="M308.5 227.6 Q290.8 267.6 195.7 292.1" stroke="#9c7c58" stroke-opacity="0.23" stroke-width="0.47" fill="none"/><path d="M328.6 225.1 Q328.0 224.6 333.3 224.3" stroke="#9c7c58" stroke-opacity="0.20" stroke-width="0.59" fill="none"/><path d="M335.6 226.4 Q345.8 415.6 397.2 531.6" stroke="#9c7c58" stroke-opacity="0.36" stroke-width="0.74" fill="none"/><path d="M336.0 226.2 Q346.3 232.5 387.9 236.3" stroke="#0a0805" stroke-opacity="0.25" stroke-width="1.08" fill="none"/><path d="M307.3 227.5 Q288.6 391.9 202.2 492.7" stroke="#0a0805" stroke-opacity="0.43" stroke-width="0.68" fill="none"/><path d="M334.8 226.9 Q346.4 251.2 422.9 266.0" stroke="#0a0805" stroke-opacity="0.32" stroke-width="0.61" fill="none"/><path d="M318.1 226.7 Q304.5 247.5 240.7 260.2" stroke="#0a0805" stroke-opacity="0.41" stroke-width="1.05" fill="none"/><path d="M311.7 227.9 Q293.7 374.0 180.2 463.5" stroke="#0a0805" stroke-opacity="0.27" stroke-width="0.98" fill="none"/><path d="M324.0 225.6 Q319.1 423.2 293.5 544.2" stroke="#0a0805" stroke-opacity="0.39" stroke-width="0.69" fill="none"/><path d="M343.9 228.5 Q367.3 316.2 499.6 370.0" stroke="#9c7c58" stroke-opacity="0.24" stroke-width="0.46" fill="none"/><path d="M327.0 225.2 Q328.3 424.5 334.3 546.7" stroke="#0a0805" stroke-opacity="0.20" stroke-width="1.09" fill="none"/><path d="M330.4 225.7 Q335.6 423.4 358.5 544.6" stroke="#0a0805" stroke-opacity="0.33" stroke-width="0.79" fill="none"/><path d="M318.3 225.7 Q314.9 228.4 290.2 230.0" stroke="#0a0805" stroke-opacity="0.21" stroke-width="0.93" fill="none"/><path d="M311.1 228.1 Q289.4 366.1 173.0 450.7" stroke="#0a0805" stroke-opacity="0.38" stroke-width="0.84" fill="none"/><path d="M311.4 226.8 Q301.4 250.4 235.7 264.8" stroke="#0a0805" stroke-opacity="0.32" stroke-width="1.10" fill="none"/><path d="M340.4 227.4 Q356.7 391.6 448.0 492.3" stroke="#0a0805" stroke-opacity="0.27" stroke-width="0.80" fill="none"/><path d="M335.7 226.5 Q347.7 414.1 403.0 529.1" stroke="#9c7c58" stroke-opacity="0.34" stroke-width="0.56" fill="none"/><path d="M323.6 225.1 Q323.3 424.7 321.5 547.0" stroke="#0a0805" stroke-opacity="0.43" stroke-width="1.05" fill="none"/><path d="M341.9 227.9 Q360.1 374.3 471.0 463.9" stroke="#4a3a2a" stroke-opacity="0.49" stroke-width="0.89" fill="none"/><path d="M333.2 225.9 Q341.3 228.5 371.5 230.0" stroke="#4a3a2a" stroke-opacity="0.31" stroke-width="0.65" fill="none"/><path d="M324.8 225.2 Q329.2 224.9 336.9 224.7" stroke="#4a3a2a" stroke-opacity="0.50" stroke-width="0.89" fill="none"/><path d="M317.2 226.6 Q307.1 244.9 245.1 256.2" stroke="#0a0805" stroke-opacity="0.44" stroke-width="0.92" fill="none"/><path d="M305.4 228.0 Q286.7 367.0 173.8 452.1" stroke="#4a3a2a" stroke-opacity="0.53" stroke-width="0.55" fill="none"/><path d="M341.6 228.2 Q365.0 283.4 486.6 317.3" stroke="#0a0805" stroke-opacity="0.43" stroke-width="0.76" fill="none"/><path d="M310.2 228.0 Q290.3 280.1 175.0 312.0" stroke="#9c7c58" stroke-opacity="0.20" stroke-width="0.57" fill="none"/><path d="M343.6 228.0 Q364.6 367.4 477.6 452.9" stroke="#0a0805" stroke-opacity="0.22" stroke-width="0.90" fill="none"/><path d="M328.3 225.9 Q336.6 228.3 370.9 229.8" stroke="#4a3a2a" stroke-opacity="0.58" stroke-width="0.72" fill="none"/><path d="M327.4 225.4 Q330.6 225.5 345.1 225.5" stroke="#0a0805" stroke-opacity="0.54" stroke-width="0.83" fill="none"/><path d="M333.1 226.7 Q345.7 410.4 411.4 523.0" stroke="#9c7c58" stroke-opacity="0.16" stroke-width="0.41" fill="none"/><path d="M328.6 225.2 Q327.4 224.8 335.4 224.5" stroke="#0a0805" stroke-opacity="0.23" stroke-width="1.11" fill="none"/><path d="M336.6 227.4 Q354.5 261.1 446.7 281.7" stroke="#9c7c58" stroke-opacity="0.31" stroke-width="0.47" fill="none"/><path d="M334.9 226.1 Q343.2 230.3 381.6 232.9" stroke="#0a0805" stroke-opacity="0.46" stroke-width="0.56" fill="none"/><path d="M313.2 227.4 Q296.9 393.8 205.7 495.8" stroke="#0a0805" stroke-opacity="0.29" stroke-width="1.18" fill="none"/><path d="M302.3 228.3 Q278.1 345.4 160.8 417.1" stroke="#0a0805" stroke-opacity="0.49" stroke-width="0.56" fill="none"/><path d="M346.5 228.1 Q364.8 363.4 481.6 446.3" stroke="#0a0805" stroke-opacity="0.37" stroke-width="0.54" fill="none"/><path d="M341.1 227.4 Q356.6 392.3 447.0 493.3" stroke="#0a0805" stroke-opacity="0.25" stroke-width="1.06" fill="none"/><path d="M342.0 227.5 Q359.0 390.3 450.0 490.0" stroke="#4a3a2a" stroke-opacity="0.42" stroke-width="0.89" fill="none"/><path d="M322.1 226.0 Q315.5 232.0 274.9 235.7" stroke="#9c7c58" stroke-opacity="0.14" stroke-width="0.79" fill="none"/><path d="M309.3 228.2 Q286.6 354.0 164.6 431.1" stroke="#4a3a2a" stroke-opacity="0.59" stroke-width="0.92" fill="none"/><path d="M312.6 227.0 Q299.4 405.2 227.4 514.4" stroke="#0a0805" stroke-opacity="0.33" stroke-width="0.98" fill="none"/><path d="M317.3 227.0 Q305.5 405.0 226.8 514.1" stroke="#9c7c58" stroke-opacity="0.12" stroke-width="0.51" fill="none"/><path d="M335.9 226.5 Q347.9 414.2 402.9 529.2" stroke="#0a0805" stroke-opacity="0.21" stroke-width="1.08" fill="none"/><path d="M310.1 228.1 Q289.3 286.0 168.8 321.4" stroke="#9c7c58" stroke-opacity="0.34" stroke-width="0.72" fill="none"/><path d="M310.8 228.1 Q289.1 364.9 172.0 448.8" stroke="#9c7c58" stroke-opacity="0.26" stroke-width="0.72" fill="none"/><path d="M348.1 228.4 Q372.6 294.9 493.8 335.7" stroke="#9c7c58" stroke-opacity="0.28" stroke-width="0.67" fill="none"/><path d="M327.9 225.7 Q331.4 423.3 361.2 544.4" stroke="#0a0805" stroke-opacity="0.48" stroke-width="0.82" fill="none"/><path d="M338.8 226.7 Q351.4 245.4 412.0 256.8" stroke="#9c7c58" stroke-opacity="0.27" stroke-width="0.76" fill="none"/><path d="M314.2 227.0 Q300.9 255.9 226.2 273.6" stroke="#4a3a2a" stroke-opacity="0.36" stroke-width="0.60" fill="none"/><path d="M346.8 228.2 Q366.9 283.1 486.2 316.8" stroke="#4a3a2a" stroke-opacity="0.42" stroke-width="0.76" fill="none"/><path d="M338.9 227.8 Q360.7 268.2 464.2 293.0" stroke="#9c7c58" stroke-opacity="0.15" stroke-width="0.65" fill="none"/><path d="M303.3 228.3 Q282.4 300.8 159.9 345.2" stroke="#9c7c58" stroke-opacity="0.26" stroke-width="0.41" fill="none"/><path d="M334.6 225.8 Q341.4 227.3 365.1 228.2" stroke="#4a3a2a" stroke-opacity="0.47" stroke-width="0.63" fill="none"/><path d="M305.3 228.4 Q285.9 305.9 158.4 353.4" stroke="#0a0805" stroke-opacity="0.49" stroke-width="1.17" fill="none"/><path d="M343.1 228.5 Q364.8 329.0 499.5 390.5" stroke="#9c7c58" stroke-opacity="0.14" stroke-width="0.42" fill="none"/><path d="M321.9 226.2 Q313.5 418.2 267.2 535.9" stroke="#0a0805" stroke-opacity="0.52" stroke-width="0.54" fill="none"/><path d="M313.7 226.9 Q298.9 406.2 230.1 516.1" stroke="#0a0805" stroke-opacity="0.29" stroke-width="0.90" fill="none"/><path d="M314.2 227.6 Q297.7 388.3 197.2 486.8" stroke="#9c7c58" stroke-opacity="0.24" stroke-width="0.46" fill="none"/><path d="M326.2 225.6 Q319.9 227.4 295.3 228.5" stroke="#9c7c58" stroke-opacity="0.19" stroke-width="0.54" fill="none"/><path d="M318.9 226.7 Q309.0 248.1 239.7 261.2" stroke="#9c7c58" stroke-opacity="0.32" stroke-width="0.68" fill="none"/><path d="M314.0 227.7 Q293.2 385.2 193.4 481.8" stroke="#9c7c58" stroke-opacity="0.32" stroke-width="0.78" fill="none"/><path d="M306.4 228.0 Q287.4 369.3 175.9 455.9" stroke="#0a0805" stroke-opacity="0.24" stroke-width="0.73" fill="none"/><path d="M343.8 228.5 Q367.0 330.9 499.3 393.7" stroke="#9c7c58" stroke-opacity="0.18" stroke-width="0.46" fill="none"/><path d="M304.0 228.0 Q286.1 368.8 175.5 455.2" stroke="#9c7c58" stroke-opacity="0.13" stroke-width="0.77" fill="none"/><path d="M350.1 228.4 Q374.5 307.5 498.2 356.0" stroke="#0a0805" stroke-opacity="0.25" stroke-width="0.81" fill="none"/><path d="M340.6 226.9 Q354.5 249.4 419.2 263.2" stroke="#0a0805" stroke-opacity="0.36" stroke-width="0.74" fill="none"/><path d="M307.7 228.0 Q288.6 279.8 175.3 311.6" stroke="#9c7c58" stroke-opacity="0.18" stroke-width="0.42" fill="none"/><path d="M306.7 228.3 Q282.8 347.5 161.7 420.6" stroke="#0a0805" stroke-opacity="0.29" stroke-width="0.79" fill="none"/><path d="M341.4 227.9 Q362.7 270.8 469.7 297.1" stroke="#9c7c58" stroke-opacity="0.16" stroke-width="0.60" fill="none"/><path d="M347.4 228.0 Q364.7 367.2 477.9 452.5" stroke="#0a0805" stroke-opacity="0.22" stroke-width="1.13" fill="none"/><path d="M306.2 227.9 Q287.2 374.1 180.2 463.7" stroke="#9c7c58" stroke-opacity="0.19" stroke-width="0.48" fill="none"/><path d="M344.7 227.5 Q363.4 390.7 449.3 490.8" stroke="#0a0805" stroke-opacity="0.23" stroke-width="0.70" fill="none"/><path d="M311.5 226.8 Q301.3 251.0 234.7 265.8" stroke="#9c7c58" stroke-opacity="0.37" stroke-width="0.41" fill="none"/><path d="M305.7 228.2 Q282.7 288.8 167.1 326.0" stroke="#9c7c58" stroke-opacity="0.34" stroke-width="0.61" fill="none"/><path d="M345.1 228.3 Q369.1 285.9 489.2 321.2" stroke="#9c7c58" stroke-opacity="0.27" stroke-width="0.46" fill="none"/><path d="M347.3 228.2 Q369.4 282.8 485.9 316.3" stroke="#9c7c58" stroke-opacity="0.14" stroke-width="0.43" fill="none"/><path d="M313.4 227.1 Q298.3 402.2 221.4 509.5" stroke="#9c7c58" stroke-opacity="0.28" stroke-width="0.68" fill="none"/><path d="M307.8 228.1 Q285.1 286.1 168.7 321.6" stroke="#9c7c58" stroke-opacity="0.31" stroke-width="0.56" fill="none"/><path d="M302.5 228.3 Q282.9 342.6 159.5 412.7" stroke="#9c7c58" stroke-opacity="0.34" stroke-width="0.75" fill="none"/><path d="M322.9 225.1 Q326.8 424.6 332.6 546.8" stroke="#4a3a2a" stroke-opacity="0.56" stroke-width="0.63" fill="none"/><path d="M348.2 228.3 Q368.6 286.0 489.3 321.4" stroke="#9c7c58" stroke-opacity="0.22" stroke-width="0.64" fill="none"/><path d="M327.3 225.2 Q328.2 224.8 335.3 224.5" stroke="#4a3a2a" stroke-opacity="0.34" stroke-width="0.86" fill="none"/><path d="M310.4 228.1 Q288.5 283.4 171.5 317.3" stroke="#0a0805" stroke-opacity="0.33" stroke-width="1.03" fill="none"/><path d="M336.8 226.3 Q347.7 234.0 391.4 238.7" stroke="#4a3a2a" stroke-opacity="0.45" stroke-width="0.77" fill="none"/><path d="M317.5 225.8 Q315.7 421.9 287.1 542.2" stroke="#9c7c58" stroke-opacity="0.17" stroke-width="0.44" fill="none"/><path d="M349.4 228.5 Q369.1 326.7 499.8 386.9" stroke="#9c7c58" stroke-opacity="0.30" stroke-width="0.48" fill="none"/><path d="M329.5 225.5 Q332.9 225.7 348.8 225.9" stroke="#4a3a2a" stroke-opacity="0.51" stroke-width="0.55" fill="none"/><path d="M314.1 227.3 Q296.1 260.9 212.1 281.6" stroke="#9c7c58" stroke-opacity="0.25" stroke-width="0.60" fill="none"/><path d="M343.2 228.4 Q365.4 345.0 494.8 416.5" stroke="#9c7c58" stroke-opacity="0.27" stroke-width="0.74" fill="none"/><path d="M343.0 227.7 Q362.4 267.5 462.7 291.9" stroke="#9c7c58" stroke-opacity="0.33" stroke-width="0.78" fill="none"/><path d="M338.0 227.1 Q354.0 401.6 431.2 508.5" stroke="#4a3a2a" stroke-opacity="0.42" stroke-width="0.97" fill="none"/><path d="M304.6 228.4 Q281.0 307.4 158.0 355.8" stroke="#9c7c58" stroke-opacity="0.23" stroke-width="0.79" fill="none"/><path d="M310.1 228.2 Q290.4 290.4 166.1 328.6" stroke="#0a0805" stroke-opacity="0.22" stroke-width="0.86" fill="none"/><path d="M324.9 225.8 Q317.7 229.0 287.5 231.0" stroke="#4a3a2a" stroke-opacity="0.49" stroke-width="0.68" fill="none"/><path d="M318.7 225.6 Q314.5 423.2 293.5 544.2" stroke="#4a3a2a" stroke-opacity="0.31" stroke-width="0.57" fill="none"/><path d="M325.0 225.5 Q323.8 227.0 299.3 227.9" stroke="#0a0805" stroke-opacity="0.48" stroke-width="1.12" fill="none"/><path d="M310.2 227.0 Q298.4 256.0 225.8 273.8" stroke="#9c7c58" stroke-opacity="0.30" stroke-width="0.51" fill="none"/><path d="M324.1 225.9 Q318.6 421.0 282.2 540.6" stroke="#9c7c58" stroke-opacity="0.26" stroke-width="0.57" fill="none"/><path d="M318.9 225.9 Q312.0 230.6 280.7 233.5" stroke="#0a0805" stroke-opacity="0.24" stroke-width="0.92" fill="none"/><path d="M321.3 225.8 Q314.6 229.4 285.7 231.6" stroke="#4a3a2a" stroke-opacity="0.46" stroke-width="0.57" fill="none"/><path d="M337.0 227.3 Q351.5 259.4 442.1 279.1" stroke="#4a3a2a" stroke-opacity="0.39" stroke-width="0.62" fill="none"/><path d="M336.7 226.7 Q350.0 245.5 412.1 257.0" stroke="#4a3a2a" stroke-opacity="0.47" stroke-width="0.83" fill="none"/><path d="M347.8 228.4 Q369.5 295.3 494.0 336.4" stroke="#4a3a2a" stroke-opacity="0.48" stroke-width="0.73" fill="none"/><path d="M342.6 228.1 Q361.9 363.1 481.9 445.8" stroke="#4a3a2a" stroke-opacity="0.41" stroke-width="0.79" fill="none"/><path d="M326.8 225.3 Q331.4 225.3 342.8 225.3" stroke="#9c7c58" stroke-opacity="0.26" stroke-width="0.60" fill="none"/><path d="M349.9 228.3 Q370.1 348.1 492.8 421.5" stroke="#0a0805" stroke-opacity="0.26" stroke-width="0.55" fill="none"/><path d="M312.0 227.2 Q294.7 260.4 213.7 280.7" stroke="#9c7c58" stroke-opacity="0.23" stroke-width="0.69" fill="none"/><path d="M336.2 227.1 Q352.9 254.2 429.4 270.8" stroke="#0a0805" stroke-opacity="0.25" stroke-width="0.74" fill="none"/><path d="M343.2 227.6 Q361.0 385.1 457.5 481.7" stroke="#0a0805" stroke-opacity="0.49" stroke-width="0.86" fill="none"/><path d="M307.7 228.4 Q286.6 331.7 157.1 395.1" stroke="#4a3a2a" stroke-opacity="0.54" stroke-width="0.85" fill="none"/><path d="M313.8 226.5 Q306.3 243.0 249.1 253.0" stroke="#9c7c58" stroke-opacity="0.32" stroke-width="0.63" fill="none"/><path d="M329.9 225.0 Q330.0 424.8 327.5 547.2" stroke="#4a3a2a" stroke-opacity="0.54" stroke-width="0.94" fill="none"/><path d="M312.6 227.1 Q298.8 402.7 222.4 510.4" stroke="#4a3a2a" stroke-opacity="0.52" stroke-width="0.65" fill="none"/><path d="M338.9 227.1 Q351.8 402.3 429.6 509.7" stroke="#9c7c58" stroke-opacity="0.32" stroke-width="0.74" fill="none"/><path d="M325.5 225.0 Q323.7 424.9 325.8 547.4" stroke="#9c7c58" stroke-opacity="0.16" stroke-width="0.63" fill="none"/><path d="M313.0 226.6 Q305.2 411.6 244.8 524.9" stroke="#9c7c58" stroke-opacity="0.34" stroke-width="0.74" fill="none"/><path d="M319.1 225.8 Q314.1 228.8 288.4 230.7" stroke="#0a0805" stroke-opacity="0.20" stroke-width="0.53" fill="none"/><path d="M318.0 226.3 Q311.8 416.8 259.7 533.5" stroke="#0a0805" stroke-opacity="0.39" stroke-width="1.20" fill="none"/><path d="M323.9 225.4 Q322.5 423.9 307.3 545.6" stroke="#9c7c58" stroke-opacity="0.21" stroke-width="0.64" fill="none"/><path d="M345.5 227.6 Q363.5 384.5 458.5 480.7" stroke="#4a3a2a" stroke-opacity="0.33" stroke-width="0.69" fill="none"/><path d="M337.9 226.9 Q350.8 406.1 421.0 516.0" stroke="#0a0805" stroke-opacity="0.54" stroke-width="0.84" fill="none"/><path d="M334.2 226.2 Q344.9 418.2 385.9 535.9" stroke="#9c7c58" stroke-opacity="0.26" stroke-width="0.73" fill="none"/><path d="M343.1 228.1 Q366.6 277.7 480.5 308.1" stroke="#0a0805" stroke-opacity="0.38" stroke-width="0.58" fill="none"/><path d="M316.4 226.9 Q305.9 251.7 233.4 267.0" stroke="#0a0805" stroke-opacity="0.51" stroke-width="0.79" fill="none"/><path d="M341.6 227.9 Q361.0 271.1 470.3 297.6" stroke="#4a3a2a" stroke-opacity="0.36" stroke-width="0.59" fill="none"/><path d="M312.3 227.4 Q295.2 393.2 204.6 494.8" stroke="#0a0805" stroke-opacity="0.42" stroke-width="0.53" fill="none"/><path d="M338.6 226.7 Q348.5 410.0 412.2 522.4" stroke="#0a0805" stroke-opacity="0.20" stroke-width="0.71" fill="none"/><path d="M310.2 227.8 Q292.9 270.8 188.5 297.3" stroke="#9c7c58" stroke-opacity="0.25" stroke-width="0.62" fill="none"/><path d="M347.9 228.4 Q370.6 336.7 498.5 403.0" stroke="#0a0805" stroke-opacity="0.40" stroke-width="0.79" fill="none"/><path d="M336.9 227.3 Q353.9 258.6 440.0 277.9" stroke="#9c7c58" stroke-opacity="0.15" stroke-width="0.47" fill="none"/><path d="M325.7 225.5 Q322.9 423.6 302.1 545.1" stroke="#0a0805" stroke-opacity="0.22" stroke-width="0.51" fill="none"/><path d="M304.3 228.4 Q283.5 311.4 157.2 362.3" stroke="#9c7c58" stroke-opacity="0.16" stroke-width="0.51" fill="none"/><path d="M340.7 226.9 Q353.2 250.4 421.2 264.7" stroke="#9c7c58" stroke-opacity="0.24" stroke-width="0.55" fill="none"/><path d="M336.3 226.2 Q344.2 231.6 385.8 234.9" stroke="#0a0805" stroke-opacity="0.35" stroke-width="0.93" fill="none"/><path d="M343.2 228.5 Q369.3 326.0 499.9 385.7" stroke="#0a0805" stroke-opacity="0.31" stroke-width="1.13" fill="none"/><path d="M305.8 228.1 Q286.3 283.7 171.2 317.8" stroke="#0a0805" stroke-opacity="0.37" stroke-width="1.16" fill="none"/><path d="M346.1 228.5 Q370.5 321.9 500.5 379.1" stroke="#9c7c58" stroke-opacity="0.20" stroke-width="0.75" fill="none"/><path d="M330.2 225.3 Q330.4 424.2 341.5 546.1" stroke="#9c7c58" stroke-opacity="0.21" stroke-width="0.47" fill="none"/><path d="M321.4 225.5 Q318.7 226.8 301.2 227.6" stroke="#9c7c58" stroke-opacity="0.26" stroke-width="0.55" fill="none"/><path d="M333.7 226.9 Q344.2 407.0 419.1 517.4" stroke="#0a0805" stroke-opacity="0.32" stroke-width="0.67" fill="none"/><path d="M344.1 228.3 Q364.5 289.2 490.9 326.5" stroke="#9c7c58" stroke-opacity="0.29" stroke-width="0.54" fill="none"/><path d="M344.9 227.9 Q361.2 270.9 469.9 297.3" stroke="#9c7c58" stroke-opacity="0.34" stroke-width="0.45" fill="none"/><path d="M335.5 226.1 Q344.4 418.9 382.8 537.0" stroke="#9c7c58" stroke-opacity="0.21" stroke-width="0.69" fill="none"/><path d="M343.4 227.3 Q356.2 396.7 440.5 500.5" stroke="#0a0805" stroke-opacity="0.38" stroke-width="0.66" fill="none"/><path d="M328.8 226.0 Q336.7 420.9 373.7 540.5" stroke="#9c7c58" stroke-opacity="0.35" stroke-width="0.64" fill="none"/><path d="M338.5 227.4 Q355.3 392.5 446.7 493.7" stroke="#9c7c58" stroke-opacity="0.35" stroke-width="0.45" fill="none"/><path d="M324.6 225.3 Q321.4 424.2 311.9 546.0" stroke="#0a0805" stroke-opacity="0.33" stroke-width="0.96" fill="none"/><path d="M316.2 226.4 Q306.7 416.1 257.1 532.4" stroke="#9c7c58" stroke-opacity="0.17" stroke-width="0.74" fill="none"/><path d="M345.3 228.0 Q362.6 368.8 476.3 455.2" stroke="#4a3a2a" stroke-opacity="0.41" stroke-width="0.75" fill="none"/><path d="M342.0 228.2 Q362.8 355.3 488.1 433.2" stroke="#9c7c58" stroke-opacity="0.15" stroke-width="0.69" fill="none"/><path d="M345.4 228.4 Q370.1 346.6 493.7 419.1" stroke="#0a0805" stroke-opacity="0.51" stroke-width="1.10" fill="none"/><path d="M339.0 227.5 Q352.8 262.1 449.6 283.4" stroke="#0a0805" stroke-opacity="0.43" stroke-width="0.75" fill="none"/><path d="M337.5 226.7 Q349.8 410.5 411.2 523.1" stroke="#9c7c58" stroke-opacity="0.34" stroke-width="0.54" fill="none"/><path d="M309.0 227.4 Q291.2 393.7 205.6 495.7" stroke="#0a0805" stroke-opacity="0.46" stroke-width="1.00" fill="none"/><path d="M327.8 225.9 Q332.4 228.5 371.9 230.1" stroke="#9c7c58" stroke-opacity="0.20" stroke-width="0.55" fill="none"/><path d="M329.9 225.9 Q336.8 228.3 370.7 229.8" stroke="#9c7c58" stroke-opacity="0.34" stroke-width="0.63" fill="none"/><path d="M304.2 228.3 Q282.3 345.7 160.9 417.7" stroke="#0a0805" stroke-opacity="0.32" stroke-width="0.50" fill="none"/><path d="M310.9 227.9 Q290.3 273.8 181.8 302.0" stroke="#9c7c58" stroke-opacity="0.34" stroke-width="0.64" fill="none"/><path d="M330.3 226.1 Q335.2 229.8 378.8 232.1" stroke="#0a0805" stroke-opacity="0.27" stroke-width="1.14" fill="none"/><path d="M302.2 228.4 Q281.4 324.9 155.6 384.0" stroke="#9c7c58" stroke-opacity="0.31" stroke-width="0.73" fill="none"/><path d="M342.9 228.4 Q368.3 345.9 494.2 418.0" stroke="#4a3a2a" stroke-opacity="0.58" stroke-width="0.85" fill="none"/><path d="M308.4 228.4 Q286.4 331.8 157.1 395.2" stroke="#4a3a2a" stroke-opacity="0.32" stroke-width="0.85" fill="none"/><path d="M334.7 226.4 Q346.6 415.6 397.3 531.6" stroke="#9c7c58" stroke-opacity="0.32" stroke-width="0.42" fill="none"/><path d="M309.1 228.2 Q286.0 354.3 164.8 431.6" stroke="#4a3a2a" stroke-opacity="0.59" stroke-width="0.82" fill="none"/><path d="M318.5 225.9 Q310.2 420.7 280.5 540.1" stroke="#9c7c58" stroke-opacity="0.23" stroke-width="0.48" fill="none"/><path d="M341.8 228.1 Q364.1 363.1 481.9 445.8" stroke="#0a0805" stroke-opacity="0.28" stroke-width="0.67" fill="none"/><path d="M323.6 225.3 Q324.1 424.0 309.5 545.8" stroke="#9c7c58" stroke-opacity="0.20" stroke-width="0.75" fill="none"/><path d="M342.4 227.6 Q358.8 265.4 458.2 288.5" stroke="#0a0805" stroke-opacity="0.39" stroke-width="1.03" fill="none"/><path d="M345.8 228.1 Q366.4 276.9 479.6 306.8" stroke="#4a3a2a" stroke-opacity="0.53" stroke-width="0.92" fill="none"/><path d="M337.2 227.2 Q350.9 256.2 433.7 274.1" stroke="#9c7c58" stroke-opacity="0.14" stroke-width="0.51" fill="none"/><path d="M347.6 228.3 Q369.1 292.8 492.7 332.4" stroke="#9c7c58" stroke-opacity="0.20" stroke-width="0.59" fill="none"/><path d="M338.2 227.5 Q352.5 390.1 450.2 489.8" stroke="#9c7c58" stroke-opacity="0.38" stroke-width="0.70" fill="none"/><path d="M337.7 226.7 Q351.3 243.7 409.2 254.1" stroke="#4a3a2a" stroke-opacity="0.33" stroke-width="0.74" fill="none"/><path d="M331.4 226.3 Q340.7 416.9 391.6 533.7" stroke="#9c7c58" stroke-opacity="0.36" stroke-width="0.66" fill="none"/><path d="M315.1 227.4 Q299.7 394.2 206.4 496.4" stroke="#9c7c58" stroke-opacity="0.18" stroke-width="0.46" fill="none"/><path d="M332.2 225.7 Q338.2 226.5 359.1 227.0" stroke="#9c7c58" stroke-opacity="0.17" stroke-width="0.66" fill="none"/><path d="M313.3 227.7 Q293.0 269.5 191.5 295.1" stroke="#0a0805" stroke-opacity="0.49" stroke-width="1.02" fill="none"/><path d="M341.1 227.9 Q362.9 371.9 473.3 460.2" stroke="#9c7c58" stroke-opacity="0.22" stroke-width="0.62" fill="none"/><path d="M343.0 227.4 Q356.9 393.1 445.8 494.7" stroke="#9c7c58" stroke-opacity="0.27" stroke-width="0.65" fill="none"/><path d="M309.3 228.1 Q291.4 281.6 173.4 314.5" stroke="#0a0805" stroke-opacity="0.37" stroke-width="0.85" fill="none"/><path d="M341.8 227.9 Q361.7 271.5 471.2 298.2" stroke="#9c7c58" stroke-opacity="0.30" stroke-width="0.47" fill="none"/><path d="M336.6 226.1 Q341.1 418.9 382.9 537.0" stroke="#9c7c58" stroke-opacity="0.23" stroke-width="0.48" fill="none"/><path d="M302.0 228.3 Q282.6 341.8 159.2 411.4" stroke="#0a0805" stroke-opacity="0.48" stroke-width="0.80" fill="none"/><path d="M347.4 228.3 Q369.4 347.2 493.4 420.0" stroke="#4a3a2a" stroke-opacity="0.40" stroke-width="0.72" fill="none"/><path d="M311.3 227.9 Q294.2 375.3 181.4 465.6" stroke="#9c7c58" stroke-opacity="0.20" stroke-width="0.58" fill="none"/><path d="M317.0 226.3 Q306.8 417.1 261.3 534.0" stroke="#9c7c58" stroke-opacity="0.20" stroke-width="0.58" fill="none"/><path d="M326.3 225.5 Q324.7 226.9 301.0 227.7" stroke="#0a0805" stroke-opacity="0.54" stroke-width="0.93" fill="none"/><path d="M303.6 228.1 Q284.4 286.3 168.6 322.0" stroke="#4a3a2a" stroke-opacity="0.39" stroke-width="0.79" fill="none"/><path d="M320.6 225.9 Q315.8 230.2 282.6 232.8" stroke="#9c7c58" stroke-opacity="0.21" stroke-width="0.75" fill="none"/><path d="M327.5 225.7 Q333.3 226.5 359.3 227.0" stroke="#4a3a2a" stroke-opacity="0.33" stroke-width="0.83" fill="none"/><path d="M340.8 227.4 Q355.8 394.4 443.9 496.8" stroke="#4a3a2a" stroke-opacity="0.47" stroke-width="0.70" fill="none"/><path d="M336.4 227.2 Q353.3 256.2 433.6 273.9" stroke="#4a3a2a" stroke-opacity="0.33" stroke-width="0.93" fill="none"/><path d="M343.6 228.5 Q367.2 328.6 499.6 390.0" stroke="#9c7c58" stroke-opacity="0.25" stroke-width="0.62" fill="none"/><path d="M347.3 228.5 Q367.7 311.4 498.8 362.2" stroke="#4a3a2a" stroke-opacity="0.48" stroke-width="0.54" fill="none"/><path d="M333.3 226.8 Q345.2 408.8 415.0 520.3" stroke="#0a0805" stroke-opacity="0.39" stroke-width="1.00" fill="none"/><path d="M302.4 228.4 Q283.3 320.2 155.3 376.4" stroke="#0a0805" stroke-opacity="0.24" stroke-width="1.08" fill="none"/><path d="M335.7 227.1 Q352.4 402.8 428.5 510.5" stroke="#4a3a2a" stroke-opacity="0.53" stroke-width="0.57" fill="none"/><path d="M302.3 228.4 Q279.1 307.8 157.9 356.6" stroke="#9c7c58" stroke-opacity="0.12" stroke-width="0.64" fill="none"/><path d="M345.0 228.4 Q369.1 302.7 497.4 348.3" stroke="#4a3a2a" stroke-opacity="0.57" stroke-width="0.81" fill="none"/><path d="M313.1 227.2 Q300.8 260.1 214.5 280.2" stroke="#0a0805" stroke-opacity="0.26" stroke-width="1.02" fill="none"/><path d="M344.8 227.8 Q364.0 379.9 465.2 473.2" stroke="#0a0805" stroke-opacity="0.24" stroke-width="0.76" fill="none"/><path d="M309.3 228.4 Q287.9 332.7 157.3 396.6" stroke="#9c7c58" stroke-opacity="0.28" stroke-width="0.44" fill="none"/><path d="M322.4 226.0 Q313.1 419.8 275.7 538.6" stroke="#0a0805" stroke-opacity="0.44" stroke-width="0.68" fill="none"/><path d="M345.4 228.3 Q369.4 290.4 491.5 328.4" stroke="#4a3a2a" stroke-opacity="0.33" stroke-width="0.51" fill="none"/><path d="M340.9 227.1 Q352.5 254.7 430.4 271.5" stroke="#4a3a2a" stroke-opacity="0.39" stroke-width="0.84" fill="none"/><path d="M336.6 227.2 Q354.0 398.6 437.8 503.6" stroke="#4a3a2a" stroke-opacity="0.51" stroke-width="0.90" fill="none"/><path d="M316.4 225.9 Q309.8 231.1 278.6 234.3" stroke="#9c7c58" stroke-opacity="0.25" stroke-width="0.75" fill="none"/><path d="M302.9 228.2 Q280.3 292.8 164.7 332.4" stroke="#0a0805" stroke-opacity="0.44" stroke-width="0.77" fill="none"/><path d="M326.2 225.5 Q331.9 423.8 350.4 545.3" stroke="#9c7c58" stroke-opacity="0.35" stroke-width="0.64" fill="none"/><path d="M333.9 226.5 Q342.6 239.9 403.3 248.1" stroke="#0a0805" stroke-opacity="0.41" stroke-width="0.53" fill="none"/><path d="M343.4 228.1 Q363.6 277.2 479.9 307.3" stroke="#4a3a2a" stroke-opacity="0.42" stroke-width="0.68" fill="none"/><path d="M327.9 225.2 Q328.2 224.9 336.7 224.6" stroke="#9c7c58" stroke-opacity="0.24" stroke-width="0.79" fill="none"/><path d="M329.3 226.0 Q337.4 229.4 376.9 231.5" stroke="#9c7c58" stroke-opacity="0.19" stroke-width="0.60" fill="none"/><path d="M347.3 228.5 Q370.2 334.1 498.8 398.9" stroke="#0a0805" stroke-opacity="0.55" stroke-width="0.52" fill="none"/><path d="M320.7 226.2 Q314.5 417.6 264.0 534.8" stroke="#0a0805" stroke-opacity="0.42" stroke-width="0.94" fill="none"/><path d="M339.2 227.5 Q357.6 390.1 450.2 489.8" stroke="#0a0805" stroke-opacity="0.53" stroke-width="0.98" fill="none"/><path d="M347.2 228.2 Q369.4 359.5 485.3 440.0" stroke="#4a3a2a" stroke-opacity="0.49" stroke-width="0.68" fill="none"/><path d="M319.0 226.0 Q309.6 419.4 273.8 538.0" stroke="#9c7c58" stroke-opacity="0.20" stroke-width="0.80" fill="none"/><path d="M327.2 225.4 Q328.2 424.0 344.5 545.8" stroke="#9c7c58" stroke-opacity="0.21" stroke-width="0.45" fill="none"/><path d="M330.4 225.2 Q331.3 224.9 338.0 224.8" stroke="#4a3a2a" stroke-opacity="0.47" stroke-width="0.65" fill="none"/><path d="M340.9 228.1 Q360.5 276.8 479.4 306.6" stroke="#9c7c58" stroke-opacity="0.31" stroke-width="0.62" fill="none"/><path d="M317.7 226.2 Q312.7 233.8 267.6 238.4" stroke="#4a3a2a" stroke-opacity="0.32" stroke-width="0.59" fill="none"/><path d="M320.3 226.6 Q308.2 411.9 245.7 525.5" stroke="#0a0805" stroke-opacity="0.35" stroke-width="1.11" fill="none"/><path d="M334.4 226.4 Q346.2 236.5 397.0 242.6" stroke="#9c7c58" stroke-opacity="0.19" stroke-width="0.41" fill="none"/><path d="M342.3 228.0 Q363.7 274.4 476.9 302.8" stroke="#9c7c58" stroke-opacity="0.22" stroke-width="0.48" fill="none"/><path d="M316.9 227.0 Q304.1 404.6 225.9 513.4" stroke="#9c7c58" stroke-opacity="0.31" stroke-width="0.79" fill="none"/><path d="M310.8 227.0 Q300.2 405.2 227.5 514.5" stroke="#0a0805" stroke-opacity="0.32" stroke-width="0.60" fill="none"/><path d="M346.0 228.3 Q369.8 287.3 490.0 323.5" stroke="#0a0805" stroke-opacity="0.52" stroke-width="0.65" fill="none"/><path d="M345.7 227.9 Q365.7 372.0 473.2 460.3" stroke="#4a3a2a" stroke-opacity="0.50" stroke-width="0.67" fill="none"/><path d="M332.8 226.2 Q338.4 232.6 388.2 236.5" stroke="#0a0805" stroke-opacity="0.32" stroke-width="0.85" fill="none"/><path d="M312.6 226.9 Q300.0 406.3 230.3 516.2" stroke="#9c7c58" stroke-opacity="0.36" stroke-width="0.63" fill="none"/><path d="M321.4 225.2 Q321.6 225.2 317.6 225.2" stroke="#0a0805" stroke-opacity="0.32" stroke-width="0.57" fill="none"/><path d="M340.4 227.9 Q361.5 271.0 470.1 297.4" stroke="#9c7c58" stroke-opacity="0.33" stroke-width="0.57" fill="none"/><path d="M321.9 225.8 Q316.8 421.7 285.7 541.8" stroke="#0a0805" stroke-opacity="0.41" stroke-width="0.73" fill="none"/><path d="M303.8 228.4 Q283.0 330.3 156.8 392.7" stroke="#0a0805" stroke-opacity="0.47" stroke-width="0.72" fill="none"/><path d="M309.6 228.4 Q286.5 310.1 157.5 360.2" stroke="#9c7c58" stroke-opacity="0.26" stroke-width="0.78" fill="none"/><path d="M336.9 227.5 Q353.6 262.0 449.3 283.2" stroke="#0a0805" stroke-opacity="0.47" stroke-width="0.75" fill="none"/><path d="M323.1 225.1 Q324.1 225.0 319.7 224.9" stroke="#9c7c58" stroke-opacity="0.13" stroke-width="0.45" fill="none"/><path d="M333.8 226.3 Q342.6 233.6 390.5 238.1" stroke="#9c7c58" stroke-opacity="0.36" stroke-width="0.55" fill="none"/><path d="M340.0 227.8 Q360.1 268.3 464.4 293.2" stroke="#0a0805" stroke-opacity="0.26" stroke-width="0.52" fill="none"/><path d="M303.8 228.4 Q284.9 306.6 158.2 354.6" stroke="#4a3a2a" stroke-opacity="0.49" stroke-width="0.67" fill="none"/><path d="M306.3 228.2 Q284.0 292.8 164.7 332.3" stroke="#0a0805" stroke-opacity="0.24" stroke-width="1.01" fill="none"/><path d="M335.4 226.4 Q343.8 235.6 395.0 241.3" stroke="#0a0805" stroke-opacity="0.22" stroke-width="0.89" fill="none"/><path d="M339.8 226.7 Q353.6 409.5 413.4 521.5" stroke="#0a0805" stroke-opacity="0.28" stroke-width="0.68" fill="none"/><path d="M346.2 228.5 Q367.5 334.3 498.8 399.2" stroke="#9c7c58" stroke-opacity="0.32" stroke-width="0.66" fill="none"/><path d="M349.3 228.2 Q368.4 356.2 487.5 434.6" stroke="#4a3a2a" stroke-opacity="0.35" stroke-width="0.93" fill="none"/><path d="M310.4 227.3 Q297.2 261.0 211.9 281.7" stroke="#0a0805" stroke-opacity="0.30" stroke-width="0.73" fill="none"/><path d="M330.8 225.3 Q330.2 424.2 340.3 546.2" stroke="#0a0805" stroke-opacity="0.41" stroke-width="0.82" fill="none"/><path d="M319.6 226.6 Q306.9 412.3 246.9 526.2" stroke="#0a0805" stroke-opacity="0.33" stroke-width="1.05" fill="none"/><path d="M309.1 227.4 Q295.9 263.0 206.6 284.8" stroke="#0a0805" stroke-opacity="0.30" stroke-width="0.52" fill="none"/><path d="M342.4 227.1 Q352.8 255.1 431.3 272.3" stroke="#0a0805" stroke-opacity="0.25" stroke-width="1.02" fill="none"/><path d="M334.6 226.9 Q348.4 249.6 419.6 263.6" stroke="#9c7c58" stroke-opacity="0.21" stroke-width="0.77" fill="none"/><path d="M309.3 228.3 Q289.9 345.9 161.0 418.0" stroke="#9c7c58" stroke-opacity="0.18" stroke-width="0.72" fill="none"/><path d="M303.5 228.1 Q283.5 362.3 169.5 444.5" stroke="#9c7c58" stroke-opacity="0.23" stroke-width="0.44" fill="none"/><path d="M332.9 225.5 Q334.6 225.9 351.1 226.1" stroke="#0a0805" stroke-opacity="0.24" stroke-width="0.84" fill="none"/><path d="M340.6 227.5 Q355.6 263.3 452.8 285.3" stroke="#0a0805" stroke-opacity="0.25" stroke-width="1.02" fill="none"/><path d="M322.7 225.0 Q322.1 424.8 324.6 547.3" stroke="#4a3a2a" stroke-opacity="0.58" stroke-width="0.67" fill="none"/><path d="M350.3 228.4 Q374.7 304.0 497.6 350.4" stroke="#0a0805" stroke-opacity="0.30" stroke-width="0.62" fill="none"/><path d="M343.3 228.5 Q363.8 335.8 498.6 401.6" stroke="#4a3a2a" stroke-opacity="0.42" stroke-width="0.78" fill="none"/><path d="M337.0 227.5 Q355.2 389.9 450.5 489.5" stroke="#0a0805" stroke-opacity="0.39" stroke-width="0.88" fill="none"/><path d="M311.0 228.1 Q292.0 361.8 169.1 443.7" stroke="#0a0805" stroke-opacity="0.34" stroke-width="0.72" fill="none"/><path d="M339.3 226.6 Q348.6 412.9 405.7 527.1" stroke="#9c7c58" stroke-opacity="0.23" stroke-width="0.46" fill="none"/><path d="M322.4 225.1 Q324.0 224.4 328.8 224.0" stroke="#0a0805" stroke-opacity="0.29" stroke-width="0.93" fill="none"/><path d="M337.7 227.3 Q351.3 396.7 440.5 500.6" stroke="#9c7c58" stroke-opacity="0.34" stroke-width="0.71" fill="none"/><path d="M312.6 226.6 Q303.5 245.5 244.1 257.1" stroke="#9c7c58" stroke-opacity="0.29" stroke-width="0.62" fill="none"/><path d="M348.2 228.1 Q364.8 365.9 479.2 450.3" stroke="#0a0805" stroke-opacity="0.50" stroke-width="0.86" fill="none"/><path d="M319.1 226.8 Q304.9 408.1 235.2 519.2" stroke="#0a0805" stroke-opacity="0.46" stroke-width="0.77" fill="none"/><path d="M305.5 228.3 Q284.1 348.5 162.2 422.2" stroke="#4a3a2a" stroke-opacity="0.50" stroke-width="0.66" fill="none"/><path d="M311.9 227.4 Q294.3 393.7 205.5 495.6" stroke="#4a3a2a" stroke-opacity="0.38" stroke-width="0.95" fill="none"/><path d="M331.0 225.5 Q334.4 423.7 353.0 545.1" stroke="#4a3a2a" stroke-opacity="0.37" stroke-width="0.57" fill="none"/><path d="M318.2 226.3 Q309.5 237.9 259.4 244.9" stroke="#4a3a2a" stroke-opacity="0.54" stroke-width="0.62" fill="none"/><path d="M347.2 228.1 Q367.1 278.6 481.4 309.6" stroke="#0a0805" stroke-opacity="0.49" stroke-width="1.13" fill="none"/><path d="M308.5 227.3 Q293.1 261.5 210.6 282.5" stroke="#0a0805" stroke-opacity="0.49" stroke-width="0.59" fill="none"/><path d="M341.1 227.8 Q357.8 270.1 468.2 296.0" stroke="#9c7c58" stroke-opacity="0.33" stroke-width="0.61" fill="none"/><path d="M328.4 226.0 Q334.6 421.0 373.6 540.5" stroke="#0a0805" stroke-opacity="0.44" stroke-width="0.81" fill="none"/><path d="M331.0 225.4 Q335.1 423.9 347.8 545.5" stroke="#9c7c58" stroke-opacity="0.30" stroke-width="0.55" fill="none"/><path d="M321.3 225.4 Q317.9 423.7 304.0 545.3" stroke="#9c7c58" stroke-opacity="0.22" stroke-width="0.41" fill="none"/><path d="M346.7 228.4 Q366.1 295.1 493.9 336.1" stroke="#9c7c58" stroke-opacity="0.31" stroke-width="0.51" fill="none"/><path d="M341.8 228.0 Q363.7 370.5 474.7 457.8" stroke="#9c7c58" stroke-opacity="0.29" stroke-width="0.74" fill="none"/><path d="M345.6 228.4 Q369.6 295.7 494.1 336.9" stroke="#4a3a2a" stroke-opacity="0.41" stroke-width="0.52" fill="none"/><path d="M331.8 226.2 Q340.9 418.7 383.6 536.7" stroke="#9c7c58" stroke-opacity="0.23" stroke-width="0.66" fill="none"/><path d="M305.9 228.2 Q284.6 286.5 168.5 322.3" stroke="#4a3a2a" stroke-opacity="0.58" stroke-width="0.60" fill="none"/><path d="M324.7 225.5 Q320.4 226.8 301.0 227.7" stroke="#0a0805" stroke-opacity="0.32" stroke-width="0.55" fill="none"/><path d="M304.5 228.4 Q282.3 320.7 155.2 377.3" stroke="#4a3a2a" stroke-opacity="0.57" stroke-width="0.88" fill="none"/><path d="M330.5 225.6 Q334.2 226.3 356.9 226.7" stroke="#4a3a2a" stroke-opacity="0.55" stroke-width="0.71" fill="none"/><path d="M332.3 225.5 Q335.0 423.7 352.7 545.1" stroke="#4a3a2a" stroke-opacity="0.45" stroke-width="0.91" fill="none"/><path d="M310.3 227.9 Q290.0 372.9 179.2 461.8" stroke="#9c7c58" stroke-opacity="0.30" stroke-width="0.62" fill="none"/><path d="M307.9 228.4 Q283.0 312.3 157.0 363.7" stroke="#9c7c58" stroke-opacity="0.14" stroke-width="0.73" fill="none"/><path d="M334.4 226.9 Q349.2 251.2 423.1 266.1" stroke="#4a3a2a" stroke-opacity="0.32" stroke-width="0.84" fill="none"/><path d="M306.2 228.3 Q282.0 349.2 162.5 423.3" stroke="#0a0805" stroke-opacity="0.35" stroke-width="0.91" fill="none"/><path d="M328.8 225.1 Q331.0 224.4 328.5 224.0" stroke="#9c7c58" stroke-opacity="0.21" stroke-width="0.61" fill="none"/><path d="M331.2 225.2 Q330.7 224.9 336.7 224.6" stroke="#9c7c58" stroke-opacity="0.20" stroke-width="0.50" fill="none"/><path d="M311.6 227.5 Q295.4 264.5 202.6 287.2" stroke="#4a3a2a" stroke-opacity="0.32" stroke-width="0.65" fill="none"/><path d="M314.5 227.3 Q300.9 261.8 209.7 283.0" stroke="#9c7c58" stroke-opacity="0.17" stroke-width="0.42" fill="none"/><path d="M320.4 225.8 Q315.2 422.0 287.5 542.3" stroke="#4a3a2a" stroke-opacity="0.48" stroke-width="0.68" fill="none"/><path d="M304.3 228.2 Q285.9 292.2 165.0 331.4" stroke="#4a3a2a" stroke-opacity="0.32" stroke-width="0.66" fill="none"/><path d="M321.1 225.7 Q317.0 422.7 291.3 543.5" stroke="#9c7c58" stroke-opacity="0.19" stroke-width="0.72" fill="none"/><path d="M347.4 228.3 Q370.6 352.1 490.2 428.0" stroke="#4a3a2a" stroke-opacity="0.44" stroke-width="0.97" fill="none"/><path d="M335.7 226.1 Q339.8 419.2 381.3 537.6" stroke="#4a3a2a" stroke-opacity="0.49" stroke-width="0.52" fill="none"/><path d="M308.2 227.4 Q293.4 263.2 205.9 285.1" stroke="#9c7c58" stroke-opacity="0.36" stroke-width="0.62" fill="none"/><path d="M306.6 228.2 Q286.4 292.7 164.8 332.2" stroke="#0a0805" stroke-opacity="0.30" stroke-width="0.65" fill="none"/><path d="M306.3 227.8 Q290.6 272.3 185.2 299.6" stroke="#9c7c58" stroke-opacity="0.15" stroke-width="0.44" fill="none"/><path d="M309.6 228.3 Q286.5 302.7 159.0 348.2" stroke="#0a0805" stroke-opacity="0.29" stroke-width="1.13" fill="none"/><path d="M304.7 228.1 Q282.0 364.2 171.3 447.7" stroke="#0a0805" stroke-opacity="0.21" stroke-width="1.09" fill="none"/><path d="M343.5 228.3 Q365.8 353.3 489.3 430.0" stroke="#9c7c58" stroke-opacity="0.27" stroke-width="0.46" fill="none"/><path d="M315.1 226.6 Q306.9 244.1 246.8 254.8" stroke="#9c7c58" stroke-opacity="0.33" stroke-width="0.79" fill="none"/><path d="M334.6 227.1 Q348.0 402.6 428.9 510.2" stroke="#0a0805" stroke-opacity="0.28" stroke-width="0.88" fill="none"/><path d="M336.6 226.8 Q349.9 248.1 416.4 261.1" stroke="#4a3a2a" stroke-opacity="0.50" stroke-width="0.56" fill="none"/><path d="M305.3 228.0 Q288.8 276.9 178.4 306.9" stroke="#0a0805" stroke-opacity="0.53" stroke-width="0.87" fill="none"/><path d="M344.5 228.3 Q367.9 351.6 490.5 427.2" stroke="#4a3a2a" stroke-opacity="0.58" stroke-width="0.55" fill="none"/><path d="M330.7 225.3 Q332.9 424.2 341.1 546.1" stroke="#4a3a2a" stroke-opacity="0.33" stroke-width="0.57" fill="none"/><path d="M349.8 228.4 Q374.1 340.0 498.0 408.3" stroke="#9c7c58" stroke-opacity="0.36" stroke-width="0.41" fill="none"/><path d="M318.2 226.9 Q303.9 406.0 229.4 515.7" stroke="#0a0805" stroke-opacity="0.43" stroke-width="0.54" fill="none"/><path d="M342.9 227.9 Q360.4 375.5 469.8 465.9" stroke="#0a0805" stroke-opacity="0.26" stroke-width="1.05" fill="none"/><path d="M341.9 228.2 Q364.1 356.1 487.6 434.4" stroke="#9c7c58" stroke-opacity="0.26" stroke-width="0.72" fill="none"/><path d="M314.4 226.9 Q299.3 407.0 232.3 517.4" stroke="#4a3a2a" stroke-opacity="0.33" stroke-width="0.82" fill="none"/><path d="M341.4 227.5 Q356.7 262.1 449.4 283.3" stroke="#9c7c58" stroke-opacity="0.29" stroke-width="0.47" fill="none"/><path d="M348.0 228.1 Q366.8 277.2 479.9 307.3" stroke="#0a0805" stroke-opacity="0.51" stroke-width="0.84" fill="none"/><path d="M339.3 227.8 Q360.3 268.2 464.2 293.0" stroke="#9c7c58" stroke-opacity="0.25" stroke-width="0.61" fill="none"/><path d="M339.0 227.2 Q351.6 257.4 436.4 275.8" stroke="#4a3a2a" stroke-opacity="0.45" stroke-width="0.68" fill="none"/><path d="M345.3 228.3 Q365.6 293.2 492.9 333.0" stroke="#9c7c58" stroke-opacity="0.18" stroke-width="0.75" fill="none"/><path d="M328.8 225.1 Q325.1 424.8 323.5 547.2" stroke="#0a0805" stroke-opacity="0.37" stroke-width="1.05" fill="none"/><path d="M319.0 226.4 Q307.7 415.2 254.7 530.9" stroke="#0a0805" stroke-opacity="0.25" stroke-width="0.68" fill="none"/><path d="M329.5 225.7 Q334.6 226.8 362.4 227.5" stroke="#9c7c58" stroke-opacity="0.35" stroke-width="0.43" fill="none"/><path d="M314.5 226.6 Q305.0 412.6 247.5 526.6" stroke="#0a0805" stroke-opacity="0.45" stroke-width="0.54" fill="none"/><path d="M347.7 228.5 Q373.5 323.7 500.2 382.0" stroke="#9c7c58" stroke-opacity="0.28" stroke-width="0.68" fill="none"/><path d="M306.1 228.1 Q287.6 284.4 170.4 318.9" stroke="#4a3a2a" stroke-opacity="0.58" stroke-width="0.51" fill="none"/><path d="M318.6 226.1 Q310.8 233.1 270.4 237.3" stroke="#9c7c58" stroke-opacity="0.18" stroke-width="0.69" fill="none"/><path d="M305.1 228.0 Q284.6 368.2 174.9 454.1" stroke="#9c7c58" stroke-opacity="0.17" stroke-width="0.49" fill="none"/><path d="M347.2 227.9 Q368.7 374.3 470.9 464.1" stroke="#0a0805" stroke-opacity="0.37" stroke-width="0.85" fill="none"/><path d="M309.1 228.4 Q288.0 305.9 158.4 353.4" stroke="#0a0805" stroke-opacity="0.27" stroke-width="0.94" fill="none"/><path d="M312.2 227.7 Q291.6 269.5 191.5 295.1" stroke="#0a0805" stroke-opacity="0.32" stroke-width="0.61" fill="none"/><path d="M323.7 225.6 Q320.9 227.4 295.3 228.5" stroke="#9c7c58" stroke-opacity="0.34" stroke-width="0.77" fill="none"/><path d="M317.8 226.7 Q308.3 247.2 241.2 259.7" stroke="#0a0805" stroke-opacity="0.41" stroke-width="0.80" fill="none"/><path d="M310.3 228.0 Q292.5 278.7 176.5 309.8" stroke="#9c7c58" stroke-opacity="0.37" stroke-width="0.61" fill="none"/><path d="M316.9 226.0 Q313.6 231.8 275.9 235.3" stroke="#0a0805" stroke-opacity="0.29" stroke-width="1.09" fill="none"/><path d="M344.4 228.5 Q367.4 314.9 499.4 367.9" stroke="#9c7c58" stroke-opacity="0.25" stroke-width="0.76" fill="none"/><path d="M309.2 228.1 Q287.9 364.6 171.6 448.2" stroke="#0a0805" stroke-opacity="0.48" stroke-width="0.98" fill="none"/><path d="M322.1 226.1 Q314.0 232.7 271.7 236.8" stroke="#9c7c58" stroke-opacity="0.29" stroke-width="0.73" fill="none"/><path d="M343.6 227.8 Q364.0 379.0 466.4 471.7" stroke="#0a0805" stroke-opacity="0.20" stroke-width="0.84" fill="none"/><path d="M325.5 225.4 Q330.6 225.6 347.4 225.7" stroke="#4a3a2a" stroke-opacity="0.48" stroke-width="0.73" fill="none"/><path d="M340.8 227.9 Q359.1 376.7 468.6 468.0" stroke="#0a0805" stroke-opacity="0.42" stroke-width="0.70" fill="none"/><path d="M334.5 226.7 Q347.4 245.5 412.2 257.1" stroke="#4a3a2a" stroke-opacity="0.50" stroke-width="0.90" fill="none"/><path d="M341.1 227.3 Q353.0 258.4 439.3 277.5" stroke="#0a0805" stroke-opacity="0.26" stroke-width="0.69" fill="none"/><path d="M320.3 225.8 Q313.7 229.0 287.3 231.1" stroke="#0a0805" stroke-opacity="0.41" stroke-width="1.13" fill="none"/><path d="M338.1 227.0 Q354.1 403.7 426.5 512.0" stroke="#4a3a2a" stroke-opacity="0.60" stroke-width="0.59" fill="none"/><path d="M305.7 227.9 Q287.0 275.8 179.6 305.1" stroke="#9c7c58" stroke-opacity="0.17" stroke-width="0.78" fill="none"/><path d="M334.0 225.9 Q338.2 421.4 371.8 541.1" stroke="#9c7c58" stroke-opacity="0.15" stroke-width="0.62" fill="none"/><path d="M311.7 227.4 Q295.0 263.3 205.6 285.3" stroke="#0a0805" stroke-opacity="0.51" stroke-width="0.97" fill="none"/><path d="M336.3 226.5 Q346.0 239.9 403.3 248.2" stroke="#0a0805" stroke-opacity="0.33" stroke-width="0.96" fill="none"/><path d="M310.3 227.5 Q294.3 392.4 203.2 493.6" stroke="#0a0805" stroke-opacity="0.52" stroke-width="0.85" fill="none"/><path d="M344.7 227.5 Q357.7 390.5 449.7 490.4" stroke="#0a0805" stroke-opacity="0.44" stroke-width="0.89" fill="none"/><path d="M334.3 226.0 Q343.3 419.9 378.5 538.6" stroke="#0a0805" stroke-opacity="0.46" stroke-width="0.52" fill="none"/><path d="M340.9 228.0 Q363.6 371.1 474.1 458.9" stroke="#0a0805" stroke-opacity="0.25" stroke-width="0.91" fill="none"/><path d="M313.1 226.5 Q302.9 413.1 249.0 527.5" stroke="#0a0805" stroke-opacity="0.42" stroke-width="0.70" fill="none"/><path d="M303.9 228.4 Q282.0 316.6 156.1 370.7" stroke="#4a3a2a" stroke-opacity="0.59" stroke-width="0.82" fill="none"/><path d="M308.2 228.2 Q286.2 290.1 166.3 328.1" stroke="#0a0805" stroke-opacity="0.45" stroke-width="0.98" fill="none"/><path d="M343.6 228.4 Q366.9 343.7 495.6 414.4" stroke="#0a0805" stroke-opacity="0.48" stroke-width="0.74" fill="none"/><path d="M341.8 227.6 Q361.3 264.7 456.5 287.4" stroke="#9c7c58" stroke-opacity="0.31" stroke-width="0.47" fill="none"/><path d="M341.0 228.1 Q360.8 363.9 481.1 447.1" stroke="#9c7c58" stroke-opacity="0.37" stroke-width="0.78" fill="none"/><path d="M344.1 228.3 Q368.6 286.7 489.6 322.5" stroke="#9c7c58" stroke-opacity="0.20" stroke-width="0.58" fill="none"/><path d="M336.4 227.1 Q349.6 253.9 428.7 270.3" stroke="#9c7c58" stroke-opacity="0.37" stroke-width="0.51" fill="none"/><path d="M349.5 228.4 Q371.0 297.1 494.9 339.2" stroke="#0a0805" stroke-opacity="0.42" stroke-width="1.05" fill="none"/><path d="M341.7 228.1 Q363.9 365.4 479.6 449.6" stroke="#4a3a2a" stroke-opacity="0.47" stroke-width="0.84" fill="none"/><path d="M303.7 228.4 Q280.6 322.9 155.2 380.8" stroke="#0a0805" stroke-opacity="0.39" stroke-width="0.70" fill="none"/><path d="M309.5 227.4 Q295.4 393.2 204.5 494.7" stroke="#9c7c58" stroke-opacity="0.33" stroke-width="0.63" fill="none"/><path d="M345.2 227.6 Q360.5 385.7 456.7 482.6" stroke="#9c7c58" stroke-opacity="0.14" stroke-width="0.62" fill="none"/><path d="M306.9 228.4 Q283.6 322.2 155.1 379.7" stroke="#0a0805" stroke-opacity="0.24" stroke-width="0.71" fill="none"/><path d="M314.0 227.6 Q296.9 386.2 194.6 483.4" stroke="#0a0805" stroke-opacity="0.47" stroke-width="0.78" fill="none"/><path d="M321.3 226.1 Q312.7 233.1 270.4 237.3" stroke="#9c7c58" stroke-opacity="0.33" stroke-width="0.54" fill="none"/><path d="M348.5 228.3 Q369.8 285.8 489.1 321.1" stroke="#4a3a2a" stroke-opacity="0.50" stroke-width="0.95" fill="none"/><path d="M339.7 227.5 Q353.8 262.6 450.8 284.1" stroke="#4a3a2a" stroke-opacity="0.45" stroke-width="0.93" fill="none"/><path d="M309.2 227.9 Q289.3 374.3 180.5 464.1" stroke="#4a3a2a" stroke-opacity="0.38" stroke-width="0.92" fill="none"/><path d="M308.8 228.3 Q284.5 300.1 160.3 344.1" stroke="#0a0805" stroke-opacity="0.46" stroke-width="0.85" fill="none"/><path d="M318.4 226.8 Q307.6 250.0 236.3 264.3" stroke="#0a0805" stroke-opacity="0.43" stroke-width="1.12" fill="none"/><path d="M342.4 227.5 Q359.5 261.9 448.8 282.9" stroke="#4a3a2a" stroke-opacity="0.38" stroke-width="0.53" fill="none"/><path d="M316.5 227.0 Q301.5 404.4 225.5 513.1" stroke="#9c7c58" stroke-opacity="0.18" stroke-width="0.44" fill="none"/><path d="M311.8 228.0 Q293.3 369.8 176.3 456.7" stroke="#9c7c58" stroke-opacity="0.30" stroke-width="0.43" fill="none"/><path d="M307.7 227.8 Q286.4 272.2 185.4 299.4" stroke="#0a0805" stroke-opacity="0.25" stroke-width="0.69" fill="none"/><path d="M333.2 226.3 Q342.0 233.2 389.6 237.5" stroke="#0a0805" stroke-opacity="0.21" stroke-width="1.08" fill="none"/><path d="M336.3 227.1 Q351.2 254.7 430.5 271.6" stroke="#9c7c58" stroke-opacity="0.21" stroke-width="0.63" fill="none"/><path d="M349.0 228.4 Q369.6 305.8 497.9 353.2" stroke="#0a0805" stroke-opacity="0.48" stroke-width="0.88" fill="none"/><path d="M332.5 225.7 Q334.1 226.7 362.0 227.3" stroke="#4a3a2a" stroke-opacity="0.43" stroke-width="0.53" fill="none"/><path d="M313.2 227.4 Q297.5 393.2 204.7 494.9" stroke="#4a3a2a" stroke-opacity="0.45" stroke-width="0.79" fill="none"/><path d="M349.7 228.5 Q375.0 311.2 498.8 361.9" stroke="#0a0805" stroke-opacity="0.54" stroke-width="0.73" fill="none"/><path d="M321.4 225.2 Q320.5 225.3 316.3 225.4" stroke="#9c7c58" stroke-opacity="0.24" stroke-width="0.67" fill="none"/><path d="M306.1 228.3 Q283.7 350.8 163.2 425.9" stroke="#9c7c58" stroke-opacity="0.22" stroke-width="0.51" fill="none"/><path d="M347.8 228.3 Q369.5 291.0 491.8 329.5" stroke="#4a3a2a" stroke-opacity="0.36" stroke-width="0.85" fill="none"/><path d="M344.1 228.3 Q366.8 292.6 492.6 332.0" stroke="#0a0805" stroke-opacity="0.54" stroke-width="1.02" fill="none"/><path d="M323.6 226.0 Q318.1 231.2 278.2 234.5" stroke="#0a0805" stroke-opacity="0.22" stroke-width="0.64" fill="none"/><path d="M331.1 225.4 Q334.3 225.4 343.9 225.4" stroke="#0a0805" stroke-opacity="0.29" stroke-width="0.75" fill="none"/><path d="M345.1 228.0 Q367.7 273.9 476.3 302.1" stroke="#9c7c58" stroke-opacity="0.13" stroke-width="0.47" fill="none"/><path d="M344.7 227.6 Q363.2 386.5 455.6 483.9" stroke="#4a3a2a" stroke-opacity="0.33" stroke-width="0.55" fill="none"/><path d="M345.3 227.8 Q363.6 270.1 468.2 296.0" stroke="#0a0805" stroke-opacity="0.52" stroke-width="1.06" fill="none"/><path d="M331.4 225.5 Q332.0 423.8 349.9 545.3" stroke="#9c7c58" stroke-opacity="0.27" stroke-width="0.60" fill="none"/><path d="M344.5 228.4 Q364.4 300.3 496.5 344.4" stroke="#0a0805" stroke-opacity="0.45" stroke-width="1.16" fill="none"/><path d="M323.6 225.3 Q323.1 225.9 310.5 226.3" stroke="#9c7c58" stroke-opacity="0.33" stroke-width="0.74" fill="none"/><path d="M337.1 227.5 Q352.5 262.7 451.1 284.3" stroke="#4a3a2a" stroke-opacity="0.41" stroke-width="0.50" fill="none"/><path d="M310.7 227.9 Q290.8 275.9 179.4 305.3" stroke="#9c7c58" stroke-opacity="0.35" stroke-width="0.61" fill="none"/><path d="M333.4 226.5 Q344.1 237.7 399.7 244.6" stroke="#0a0805" stroke-opacity="0.37" stroke-width="0.95" fill="none"/><path d="M344.3 228.4 Q369.4 298.1 495.4 340.9" stroke="#9c7c58" stroke-opacity="0.15" stroke-width="0.64" fill="none"/><path d="M337.8 227.4 Q353.5 260.2 444.2 280.3" stroke="#4a3a2a" stroke-opacity="0.49" stroke-width="0.85" fill="none"/><path d="M329.8 226.2 Q339.6 418.1 386.4 535.7" stroke="#9c7c58" stroke-opacity="0.24" stroke-width="0.56" fill="none"/><path d="M309.9 228.0 Q288.6 371.5 177.9 459.5" stroke="#0a0805" stroke-opacity="0.44" stroke-width="0.83" fill="none"/><path d="M345.1 227.6 Q362.7 265.4 458.2 288.5" stroke="#9c7c58" stroke-opacity="0.18" stroke-width="0.79" fill="none"/><path d="M345.9 228.5 Q370.6 312.7 499.0 364.4" stroke="#0a0805" stroke-opacity="0.42" stroke-width="1.02" fill="none"/><path d="M328.0 225.9 Q337.1 228.1 369.8 229.5" stroke="#0a0805" stroke-opacity="0.21" stroke-width="0.53" fill="none"/><path d="M350.4 228.5 Q371.2 320.3 500.3 376.5" stroke="#0a0805" stroke-opacity="0.53" stroke-width="0.95" fill="none"/><path d="M315.3 226.5 Q303.9 241.1 252.8 250.1" stroke="#9c7c58" stroke-opacity="0.32" stroke-width="0.44" fill="none"/><path d="M324.9 225.5 Q319.7 226.7 302.9 227.4" stroke="#0a0805" stroke-opacity="0.26" stroke-width="0.86" fill="none"/><path d="M340.4 227.0 Q355.6 252.8 426.5 268.7" stroke="#0a0805" stroke-opacity="0.20" stroke-width="1.10" fill="none"/><path d="M321.7 226.1 Q313.8 418.5 268.7 536.3" stroke="#4a3a2a" stroke-opacity="0.48" stroke-width="0.90" fill="none"/><path d="M331.9 226.6 Q343.0 240.7 404.6 249.4" stroke="#9c7c58" stroke-opacity="0.22" stroke-width="0.40" fill="none"/><path d="M301.8 228.4 Q282.0 327.8 156.2 388.7" stroke="#0a0805" stroke-opacity="0.36" stroke-width="0.59" fill="none"/><path d="M307.5 227.7 Q289.6 383.5 191.3 479.0" stroke="#9c7c58" stroke-opacity="0.37" stroke-width="0.62" fill="none"/><path d="M338.5 227.6 Q357.8 385.2 457.5 481.7" stroke="#0a0805" stroke-opacity="0.50" stroke-width="0.57" fill="none"/><path d="M338.9 227.4 Q356.7 392.3 447.0 493.4" stroke="#9c7c58" stroke-opacity="0.28" stroke-width="0.79" fill="none"/><path d="M301.8 228.4 Q277.5 312.6 156.9 364.2" stroke="#9c7c58" stroke-opacity="0.30" stroke-width="0.64" fill="none"/><path d="M323.1 225.4 Q319.7 423.8 304.6 545.3" stroke="#4a3a2a" stroke-opacity="0.49" stroke-width="0.96" fill="none"/><path d="M308.2 228.4 Q288.1 335.6 157.9 401.3" stroke="#0a0805" stroke-opacity="0.45" stroke-width="0.52" fill="none"/><path d="M310.5 228.0 Q289.6 367.1 173.9 452.3" stroke="#0a0805" stroke-opacity="0.26" stroke-width="1.16" fill="none"/><path d="M334.7 226.2 Q340.6 418.5 384.3 536.4" stroke="#9c7c58" stroke-opacity="0.21" stroke-width="0.53" fill="none"/><path d="M336.5 226.8 Q351.5 248.5 417.3 261.8" stroke="#0a0805" stroke-opacity="0.53" stroke-width="1.03" fill="none"/><path d="M312.9 227.8 Q295.1 272.9 183.9 300.5" stroke="#9c7c58" stroke-opacity="0.18" stroke-width="0.56" fill="none"/><path d="M327.0 225.5 Q333.1 226.0 352.1 226.2" stroke="#0a0805" stroke-opacity="0.32" stroke-width="1.04" fill="none"/><path d="M308.9 228.4 Q288.0 308.6 157.8 357.8" stroke="#4a3a2a" stroke-opacity="0.33" stroke-width="0.91" fill="none"/><path d="M345.5 228.1 Q364.9 364.8 480.2 448.6" stroke="#4a3a2a" stroke-opacity="0.59" stroke-width="0.58" fill="none"/><path d="M323.3 225.7 Q319.0 423.2 293.4 544.2" stroke="#0a0805" stroke-opacity="0.34" stroke-width="1.14" fill="none"/><path d="M310.9 228.1 Q287.2 362.1 169.4 444.2" stroke="#9c7c58" stroke-opacity="0.19" stroke-width="0.76" fill="none"/><path d="M326.3 225.4 Q330.3 225.4 344.6 225.5" stroke="#0a0805" stroke-opacity="0.26" stroke-width="0.81" fill="none"/><path d="M308.9 228.1 Q289.7 363.7 170.8 446.8" stroke="#0a0805" stroke-opacity="0.29" stroke-width="0.68" fill="none"/><path d="M331.5 225.7 Q333.9 226.5 359.1 227.0" stroke="#9c7c58" stroke-opacity="0.37" stroke-width="0.66" fill="none"/><path d="M316.5 226.8 Q305.0 408.5 236.3 519.8" stroke="#0a0805" stroke-opacity="0.31" stroke-width="0.54" fill="none"/><path d="M330.5 226.4 Q339.6 236.2 396.2 242.1" stroke="#9c7c58" stroke-opacity="0.15" stroke-width="0.60" fill="none"/><path d="M324.3 225.5 Q319.2 227.0 299.2 228.0" stroke="#0a0805" stroke-opacity="0.26" stroke-width="0.57" fill="none"/><path d="M344.4 228.2 Q366.8 359.0 485.7 439.2" stroke="#4a3a2a" stroke-opacity="0.52" stroke-width="0.55" fill="none"/><path d="M317.2 226.3 Q311.2 235.8 263.4 241.7" stroke="#9c7c58" stroke-opacity="0.34" stroke-width="0.49" fill="none"/><path d="M313.2 227.5 Q297.2 266.0 199.4 289.5" stroke="#9c7c58" stroke-opacity="0.12" stroke-width="0.48" fill="none"/><path d="M313.1 226.7 Q303.3 247.1 241.3 259.7" stroke="#4a3a2a" stroke-opacity="0.50" stroke-width="0.59" fill="none"/><path d="M338.8 227.7 Q359.9 266.1 459.7 289.6" stroke="#9c7c58" stroke-opacity="0.29" stroke-width="0.63" fill="none"/><path d="M343.2 228.4 Q363.6 309.2 498.5 358.8" stroke="#0a0805" stroke-opacity="0.25" stroke-width="1.17" fill="none"/><path d="M342.6 227.5 Q356.5 390.4 449.7 490.3" stroke="#0a0805" stroke-opacity="0.29" stroke-width="0.76" fill="none"/><path d="M320.0 225.5 Q315.7 423.6 301.5 545.0" stroke="#0a0805" stroke-opacity="0.30" stroke-width="0.77" fill="none"/><path d="M303.4 228.4 Q279.5 315.1 156.4 368.3" stroke="#9c7c58" stroke-opacity="0.22" stroke-width="0.55" fill="none"/><path d="M310.3 227.6 Q295.5 387.9 196.7 486.1" stroke="#9c7c58" stroke-opacity="0.29" stroke-width="0.73" fill="none"/><path d="M343.1 228.5 Q366.2 316.7 499.7 370.7" stroke="#9c7c58" stroke-opacity="0.24" stroke-width="0.68" fill="none"/><path d="M333.8 226.8 Q346.1 248.1 416.5 261.2" stroke="#9c7c58" stroke-opacity="0.18" stroke-width="0.58" fill="none"/><path d="M335.9 227.2 Q350.2 257.6 437.1 276.2" stroke="#4a3a2a" stroke-opacity="0.58" stroke-width="0.78" fill="none"/><path d="M332.7 226.5 Q344.3 237.9 400.1 244.9" stroke="#4a3a2a" stroke-opacity="0.56" stroke-width="0.98" fill="none"/><path d="M308.0 227.5 Q294.7 264.9 201.8 287.8" stroke="#4a3a2a" stroke-opacity="0.37" stroke-width="0.59" fill="none"/><path d="M309.5 227.4 Q291.7 262.5 207.8 284.1" stroke="#9c7c58" stroke-opacity="0.36" stroke-width="0.58" fill="none"/><path d="M302.4 228.4 Q280.5 336.5 158.1 402.7" stroke="#9c7c58" stroke-opacity="0.17" stroke-width="0.67" fill="none"/><path d="M338.0 227.5 Q357.9 389.3 451.4 488.5" stroke="#4a3a2a" stroke-opacity="0.35" stroke-width="0.51" fill="none"/><path d="M309.7 227.7 Q288.9 382.0 189.5 476.6" stroke="#4a3a2a" stroke-opacity="0.52" stroke-width="0.77" fill="none"/><path d="M346.8 228.5 Q370.4 316.2 499.6 370.0" stroke="#0a0805" stroke-opacity="0.25" stroke-width="1.06" fill="none"/><path d="M321.9 226.0 Q317.1 231.9 275.5 235.4" stroke="#9c7c58" stroke-opacity="0.35" stroke-width="0.47" fill="none"/><path d="M347.5 228.5 Q372.6 311.6 498.9 362.5" stroke="#9c7c58" stroke-opacity="0.18" stroke-width="0.41" fill="none"/><path d="M330.4 226.2 Q337.1 417.9 387.0 535.5" stroke="#0a0805" stroke-opacity="0.40" stroke-width="1.16" fill="none"/><path d="M338.7 226.9 Q348.0 406.5 420.1 516.6" stroke="#0a0805" stroke-opacity="0.28" stroke-width="0.83" fill="none"/><path d="M328.1 225.3 Q325.8 424.2 313.3 546.2" stroke="#0a0805" stroke-opacity="0.42" stroke-width="0.65" fill="none"/><path d="M306.3 227.9 Q290.6 274.0 181.5 302.2" stroke="#4a3a2a" stroke-opacity="0.37" stroke-width="0.98" fill="none"/><path d="M343.2 228.0 Q362.2 369.3 475.9 455.8" stroke="#0a0805" stroke-opacity="0.21" stroke-width="0.76" fill="none"/><path d="M346.5 228.0 Q362.8 273.3 475.0 301.1" stroke="#4a3a2a" stroke-opacity="0.38" stroke-width="0.73" fill="none"/><path d="M320.1 226.3 Q309.3 417.3 262.8 534.5" stroke="#9c7c58" stroke-opacity="0.15" stroke-width="0.78" fill="none"/><path d="M339.7 227.8 Q358.5 268.2 464.3 293.1" stroke="#4a3a2a" stroke-opacity="0.57" stroke-width="0.53" fill="none"/><path d="M344.2 228.5 Q368.0 316.3 499.6 370.2" stroke="#4a3a2a" stroke-opacity="0.42" stroke-width="0.94" fill="none"/><path d="M311.8 227.8 Q295.4 377.5 184.1 469.3" stroke="#9c7c58" stroke-opacity="0.36" stroke-width="0.56" fill="none"/><path d="M336.2 226.1 Q340.8 230.6 383.1 233.3" stroke="#9c7c58" stroke-opacity="0.20" stroke-width="0.52" fill="none"/><path d="M325.4 225.6 Q320.6 227.3 296.4 228.4" stroke="#4a3a2a" stroke-opacity="0.55" stroke-width="0.90" fill="none"/><path d="M309.7 227.7 Q289.3 381.8 189.2 476.2" stroke="#9c7c58" stroke-opacity="0.29" stroke-width="0.63" fill="none"/><path d="M309.9 228.2 Q290.9 292.4 164.9 331.8" stroke="#9c7c58" stroke-opacity="0.14" stroke-width="0.76" fill="none"/><path d="M314.9 226.4 Q307.0 415.2 254.8 530.9" stroke="#9c7c58" stroke-opacity="0.18" stroke-width="0.55" fill="none"/><path d="M324.4 225.5 Q318.3 423.5 300.7 544.9" stroke="#0a0805" stroke-opacity="0.42" stroke-width="0.83" fill="none"/><path d="M310.7 228.0 Q287.9 371.9 178.3 460.2" stroke="#4a3a2a" stroke-opacity="0.50" stroke-width="0.85" fill="none"/><path d="M307.5 227.7 Q293.0 384.8 192.9 481.1" stroke="#0a0805" stroke-opacity="0.28" stroke-width="0.80" fill="none"/><path d="M319.0 225.8 Q313.8 229.0 287.5 231.0" stroke="#0a0805" stroke-opacity="0.52" stroke-width="0.66" fill="none"/><path d="M304.7 228.4 Q283.6 334.0 157.5 398.7" stroke="#0a0805" stroke-opacity="0.24" stroke-width="0.66" fill="none"/><path d="M344.7 228.4 Q364.9 303.9 497.6 350.2" stroke="#9c7c58" stroke-opacity="0.23" stroke-width="0.57" fill="none"/><path d="M336.1 226.6 Q349.1 240.8 404.7 249.5" stroke="#4a3a2a" stroke-opacity="0.41" stroke-width="0.85" fill="none"/><path d="M330.9 226.3 Q339.5 417.5 388.7 534.8" stroke="#9c7c58" stroke-opacity="0.30" stroke-width="0.46" fill="none"/><path d="M344.0 227.4 Q360.9 393.3 445.5 495.0" stroke="#0a0805" stroke-opacity="0.42" stroke-width="0.94" fill="none"/><path d="M310.3 228.2 Q286.6 353.0 164.2 429.4" stroke="#0a0805" stroke-opacity="0.31" stroke-width="0.68" fill="none"/><path d="M308.6 228.0 Q290.6 280.7 174.4 312.9" stroke="#0a0805" stroke-opacity="0.41" stroke-width="0.64" fill="none"/><path d="M328.7 225.4 Q332.6 225.5 346.0 225.6" stroke="#9c7c58" stroke-opacity="0.14" stroke-width="0.40" fill="none"/><path d="M346.3 228.1 Q363.6 279.1 481.9 310.3" stroke="#9c7c58" stroke-opacity="0.19" stroke-width="0.68" fill="none"/><path d="M321.1 225.2 Q318.2 225.2 317.3 225.3" stroke="#0a0805" stroke-opacity="0.54" stroke-width="0.60" fill="none"/><path d="M343.3 227.9 Q361.0 376.7 468.6 467.9" stroke="#4a3a2a" stroke-opacity="0.44" stroke-width="0.63" fill="none"/><path d="M329.9 226.2 Q336.3 231.7 386.1 235.0" stroke="#9c7c58" stroke-opacity="0.28" stroke-width="0.68" fill="none"/><path d="M349.1 228.5 Q372.9 334.7 498.7 399.8" stroke="#9c7c58" stroke-opacity="0.25" stroke-width="0.48" fill="none"/><path d="M318.6 226.3 Q307.3 237.2 260.7 243.9" stroke="#9c7c58" stroke-opacity="0.30" stroke-width="0.55" fill="none"/><path d="M304.0 228.3 Q284.3 345.5 160.8 417.3" stroke="#0a0805" stroke-opacity="0.23" stroke-width="0.91" fill="none"/><path d="M347.5 228.3 Q370.8 289.2 490.9 326.6" stroke="#0a0805" stroke-opacity="0.28" stroke-width="0.57" fill="none"/><path d="M309.4 227.9 Q288.2 376.7 183.0 467.9" stroke="#9c7c58" stroke-opacity="0.27" stroke-width="0.44" fill="none"/><path d="M309.0 227.5 Q291.4 391.6 201.6 492.2" stroke="#4a3a2a" stroke-opacity="0.46" stroke-width="0.86" fill="none"/><path d="M332.2 225.7 Q335.0 226.8 362.4 227.5" stroke="#9c7c58" stroke-opacity="0.29" stroke-width="0.68" fill="none"/><path d="M316.1 227.2 Q299.4 399.6 216.6 505.3" stroke="#9c7c58" stroke-opacity="0.29" stroke-width="0.50" fill="none"/><path d="M341.2 227.9 Q362.3 271.5 471.1 298.2" stroke="#0a0805" stroke-opacity="0.45" stroke-width="1.17" fill="none"/><path d="M304.9 228.3 Q282.4 296.5 162.5 338.3" stroke="#0a0805" stroke-opacity="0.22" stroke-width="0.93" fill="none"/><path d="M332.8 226.7 Q344.9 246.1 413.0 257.9" stroke="#9c7c58" stroke-opacity="0.36" stroke-width="0.75" fill="none"/><path d="M328.2 225.8 Q331.5 422.9 364.9 543.8" stroke="#4a3a2a" stroke-opacity="0.46" stroke-width="0.68" fill="none"/><path d="M306.4 228.3 Q286.3 345.9 161.0 418.0" stroke="#9c7c58" stroke-opacity="0.14" stroke-width="0.55" fill="none"/><path d="M326.0 225.3 Q329.5 424.1 342.4 546.0" stroke="#9c7c58" stroke-opacity="0.20" stroke-width="0.59" fill="none"/><path d="M308.5 228.3 Q285.8 348.4 162.1 422.0" stroke="#4a3a2a" stroke-opacity="0.58" stroke-width="0.97" fill="none"/><path d="M309.3 227.3 Q294.7 397.9 213.5 502.6" stroke="#0a0805" stroke-opacity="0.30" stroke-width="0.53" fill="none"/><path d="M327.5 225.3 Q322.8 225.9 311.1 226.2" stroke="#4a3a2a" stroke-opacity="0.49" stroke-width="0.65" fill="none"/><path d="M336.6 226.4 Q347.4 236.8 397.6 243.1" stroke="#4a3a2a" stroke-opacity="0.33" stroke-width="0.70" fill="none"/><path d="M340.6 226.8 Q349.3 248.3 416.7 261.4" stroke="#9c7c58" stroke-opacity="0.32" stroke-width="0.45" fill="none"/><path d="M334.7 227.0 Q346.6 253.1 427.1 269.1" stroke="#4a3a2a" stroke-opacity="0.55" stroke-width="0.58" fill="none"/><path d="M346.9 228.1 Q366.7 279.3 482.2 310.7" stroke="#9c7c58" stroke-opacity="0.15" stroke-width="0.50" fill="none"/><path d="M320.0 225.5 Q315.8 226.8 301.4 227.6" stroke="#0a0805" stroke-opacity="0.51" stroke-width="1.13" fill="none"/><path d="M333.0 225.6 Q336.7 423.6 353.5 545.0" stroke="#9c7c58" stroke-opacity="0.24" stroke-width="0.69" fill="none"/><path d="M302.8 228.4 Q279.2 334.8 157.7 400.0" stroke="#0a0805" stroke-opacity="0.24" stroke-width="1.07" fill="none"/><path d="M340.9 227.8 Q358.3 378.6 466.8 471.0" stroke="#4a3a2a" stroke-opacity="0.60" stroke-width="0.57" fill="none"/><path d="M309.3 227.5 Q290.8 266.2 198.9 289.8" stroke="#0a0805" stroke-opacity="0.32" stroke-width="0.63" fill="none"/><path d="M338.2 226.6 Q350.6 412.6 406.3 526.7" stroke="#4a3a2a" stroke-opacity="0.30" stroke-width="0.88" fill="none"/><path d="M316.8 227.1 Q305.5 403.1 223.0 510.9" stroke="#9c7c58" stroke-opacity="0.34" stroke-width="0.73" fill="none"/><path d="M345.6 228.4 Q367.8 336.6 498.5 402.9" stroke="#9c7c58" stroke-opacity="0.22" stroke-width="0.44" fill="none"/><path d="M350.0 228.5 Q371.8 311.7 498.9 362.8" stroke="#0a0805" stroke-opacity="0.51" stroke-width="1.03" fill="none"/><path d="M350.3 228.5 Q374.6 322.8 500.4 380.6" stroke="#0a0805" stroke-opacity="0.45" stroke-width="1.03" fill="none"/><path d="M305.2 228.1 Q285.8 285.3 169.5 320.3" stroke="#9c7c58" stroke-opacity="0.34" stroke-width="0.45" fill="none"/><path d="M319.8 225.8 Q316.5 421.6 285.3 541.6" stroke="#9c7c58" stroke-opacity="0.34" stroke-width="0.74" fill="none"/><path d="M310.5 227.1 Q299.6 257.9 220.5 276.8" stroke="#0a0805" stroke-opacity="0.44" stroke-width="0.96" fill="none"/><path d="M335.4 226.1 Q342.3 229.9 379.5 232.3" stroke="#4a3a2a" stroke-opacity="0.40" stroke-width="0.89" fill="none"/><path d="M308.9 228.3 Q284.7 304.0 158.8 350.3" stroke="#9c7c58" stroke-opacity="0.18" stroke-width="0.44" fill="none"/><path d="M339.9 227.9 Q361.6 372.2 473.0 460.6" stroke="#9c7c58" stroke-opacity="0.14" stroke-width="0.43" fill="none"/><path d="M303.3 228.4 Q281.1 330.2 156.8 392.7" stroke="#4a3a2a" stroke-opacity="0.54" stroke-width="0.98" fill="none"/><path d="M345.8 228.1 Q368.6 362.7 482.2 445.2" stroke="#4a3a2a" stroke-opacity="0.57" stroke-width="0.87" fill="none"/><path d="M347.6 228.1 Q368.1 363.6 481.4 446.7" stroke="#9c7c58" stroke-opacity="0.27" stroke-width="0.73" fill="none"/><path d="M323.5 225.4 Q320.4 423.8 306.2 545.5" stroke="#0a0805" stroke-opacity="0.43" stroke-width="0.65" fill="none"/><path d="M339.9 227.5 Q359.2 389.8 450.6 489.3" stroke="#0a0805" stroke-opacity="0.24" stroke-width="1.14" fill="none"/><path d="M331.6 225.8 Q336.4 227.5 366.4 228.6" stroke="#0a0805" stroke-opacity="0.35" stroke-width="0.56" fill="none"/><path d="M325.5 225.5 Q323.6 423.6 300.9 544.9" stroke="#9c7c58" stroke-opacity="0.18" stroke-width="0.70" fill="none"/><path d="M304.4 228.2 Q285.9 292.0 165.1 331.2" stroke="#0a0805" stroke-opacity="0.35" stroke-width="0.77" fill="none"/><path d="M309.9 228.3 Q286.0 349.9 162.8 424.5" stroke="#9c7c58" stroke-opacity="0.21" stroke-width="0.69" fill="none"/><path d="M346.0 228.3 Q367.5 286.5 489.5 322.2" stroke="#0a0805" stroke-opacity="0.25" stroke-width="1.17" fill="none"/><path d="M327.0 225.1 Q329.3 224.4 330.5 224.0" stroke="#9c7c58" stroke-opacity="0.36" stroke-width="0.62" fill="none"/><path d="M308.5 228.4 Q284.8 318.5 155.7 373.7" stroke="#0a0805" stroke-opacity="0.27" stroke-width="0.52" fill="none"/><path d="M328.8 225.1 Q330.3 424.8 322.9 547.1" stroke="#0a0805" stroke-opacity="0.38" stroke-width="1.15" fill="none"/><path d="M315.8 226.2 Q308.9 417.7 264.6 535.1" stroke="#0a0805" stroke-opacity="0.35" stroke-width="0.92" fill="none"/><path d="M345.0 228.5 Q367.6 332.3 499.1 395.9" stroke="#4a3a2a" stroke-opacity="0.44" stroke-width="0.55" fill="none"/><path d="M326.0 225.2 Q328.8 224.8 336.4 224.6" stroke="#0a0805" stroke-opacity="0.28" stroke-width="0.68" fill="none"/><path d="M321.3 225.4 Q319.9 424.0 308.1 545.7" stroke="#0a0805" stroke-opacity="0.27" stroke-width="0.91" fill="none"/><path d="M308.0 228.3 Q287.1 343.2 159.8 413.5" stroke="#0a0805" stroke-opacity="0.30" stroke-width="1.09" fill="none"/><path d="M314.2 226.4 Q308.4 238.8 257.5 246.4" stroke="#4a3a2a" stroke-opacity="0.33" stroke-width="0.53" fill="none"/><path d="M307.9 228.3 Q284.1 295.0 163.4 335.9" stroke="#4a3a2a" stroke-opacity="0.49" stroke-width="1.00" fill="none"/><path d="M345.2 227.8 Q362.1 377.1 468.3 468.5" stroke="#9c7c58" stroke-opacity="0.16" stroke-width="0.56" fill="none"/><path d="M311.0 227.2 Q294.4 398.2 213.9 502.9" stroke="#9c7c58" stroke-opacity="0.14" stroke-width="0.48" fill="none"/><path d="M344.4 228.1 Q362.7 366.0 479.1 450.5" stroke="#4a3a2a" stroke-opacity="0.43" stroke-width="0.99" fill="none"/><path d="M331.2 225.3 Q332.3 424.3 339.6 546.2" stroke="#9c7c58" stroke-opacity="0.27" stroke-width="0.46" fill="none"/><path d="M341.0 228.1 Q363.0 276.9 479.6 306.8" stroke="#0a0805" stroke-opacity="0.34" stroke-width="0.75" fill="none"/><path d="M333.7 226.5 Q344.9 414.9 400.4 530.4" stroke="#9c7c58" stroke-opacity="0.16" stroke-width="0.75" fill="none"/><path d="M313.3 226.5 Q306.3 414.5 252.8 529.7" stroke="#0a0805" stroke-opacity="0.32" stroke-width="0.94" fill="none"/><path d="M316.5 226.4 Q306.7 240.7 253.6 249.5" stroke="#9c7c58" stroke-opacity="0.26" stroke-width="0.67" fill="none"/><path d="M309.4 228.4 Q284.5 334.1 157.6 398.9" stroke="#9c7c58" stroke-opacity="0.34" stroke-width="0.72" fill="none"/><path d="M316.8 226.8 Q303.9 408.8 237.2 520.4" stroke="#0a0805" stroke-opacity="0.39" stroke-width="0.78" fill="none"/><path d="M342.3 228.2 Q366.4 284.0 487.2 318.3" stroke="#0a0805" stroke-opacity="0.21" stroke-width="0.73" fill="none"/><path d="M328.4 225.4 Q330.3 424.0 346.4 545.6" stroke="#0a0805" stroke-opacity="0.32" stroke-width="0.87" fill="none"/><path d="M319.3 226.3 Q310.4 237.0 261.1 243.6" stroke="#9c7c58" stroke-opacity="0.22" stroke-width="0.64" fill="none"/><path d="M304.1 228.3 Q281.6 301.6 159.4 346.5" stroke="#9c7c58" stroke-opacity="0.21" stroke-width="0.77" fill="none"/><path d="M319.3 225.8 Q313.3 421.6 285.5 541.7" stroke="#0a0805" stroke-opacity="0.26" stroke-width="0.98" fill="none"/><path d="M326.8 225.5 Q328.1 226.0 353.0 226.3" stroke="#0a0805" stroke-opacity="0.25" stroke-width="0.66" fill="none"/><path d="M331.6 226.2 Q341.5 232.7 388.3 236.6" stroke="#0a0805" stroke-opacity="0.52" stroke-width="1.16" fill="none"/><path d="M323.1 226.0 Q313.2 419.4 273.6 537.9" stroke="#0a0805" stroke-opacity="0.35" stroke-width="0.64" fill="none"/><path d="M308.4 228.4 Q284.9 325.8 155.8 385.5" stroke="#9c7c58" stroke-opacity="0.35" stroke-width="0.70" fill="none"/><path d="M318.4 226.9 Q302.5 406.5 231.0 516.7" stroke="#9c7c58" stroke-opacity="0.15" stroke-width="0.41" fill="none"/><path d="M307.5 228.3 Q283.5 350.9 163.2 426.0" stroke="#9c7c58" stroke-opacity="0.17" stroke-width="0.64" fill="none"/><path d="M312.0 228.0 Q291.1 371.7 178.1 459.8" stroke="#0a0805" stroke-opacity="0.35" stroke-width="0.77" fill="none"/><path d="M344.7 228.5 Q370.8 328.5 499.6 389.8" stroke="#0a0805" stroke-opacity="0.45" stroke-width="0.62" fill="none"/><path d="M342.4 228.2 Q363.0 282.7 485.8 316.1" stroke="#0a0805" stroke-opacity="0.22" stroke-width="0.87" fill="none"/><path d="M304.0 228.0 Q284.2 367.1 174.0 452.4" stroke="#0a0805" stroke-opacity="0.40" stroke-width="0.82" fill="none"/><path d="M314.4 227.1 Q299.7 257.1 222.8 275.5" stroke="#9c7c58" stroke-opacity="0.37" stroke-width="0.74" fill="none"/><path d="M317.3 226.5 Q304.9 242.9 249.2 252.9" stroke="#9c7c58" stroke-opacity="0.22" stroke-width="0.68" fill="none"/><path d="M329.5 225.2 Q332.1 224.8 335.3 224.5" stroke="#4a3a2a" stroke-opacity="0.30" stroke-width="0.90" fill="none"/><path d="M337.4 226.7 Q348.7 411.0 409.9 524.0" stroke="#0a0805" stroke-opacity="0.34" stroke-width="1.17" fill="none"/><path d="M324.5 225.8 Q319.3 229.6 285.2 231.9" stroke="#9c7c58" stroke-opacity="0.22" stroke-width="0.51" fill="none"/><path d="M318.1 226.7 Q308.2 247.6 240.5 260.4" stroke="#0a0805" stroke-opacity="0.55" stroke-width="0.98" fill="none"/><path d="M346.3 228.0 Q364.6 367.3 477.8 452.7" stroke="#4a3a2a" stroke-opacity="0.35" stroke-width="0.93" fill="none"/><path d="M325.5 225.2 Q329.8 424.4 337.0 546.4" stroke="#9c7c58" stroke-opacity="0.36" stroke-width="0.70" fill="none"/><path d="M344.7 227.8 Q363.0 268.2 464.2 293.0" stroke="#0a0805" stroke-opacity="0.41" stroke-width="0.80" fill="none"/><path d="M315.3 226.2 Q309.3 235.4 264.3 241.1" stroke="#9c7c58" stroke-opacity="0.19" stroke-width="0.45" fill="none"/><path d="M312.1 227.2 Q298.7 260.4 213.7 280.7" stroke="#9c7c58" stroke-opacity="0.31" stroke-width="0.66" fill="none"/><path d="M337.2 226.9 Q350.9 249.6 419.7 263.6" stroke="#9c7c58" stroke-opacity="0.29" stroke-width="0.51" fill="none"/><path d="M343.6 227.4 Q361.5 393.7 445.0 495.6" stroke="#0a0805" stroke-opacity="0.35" stroke-width="0.90" fill="none"/><path d="M309.1 228.2 Q287.6 287.9 167.6 324.6" stroke="#0a0805" stroke-opacity="0.34" stroke-width="1.17" fill="none"/><path d="M326.3 225.6 Q331.8 423.6 353.5 545.0" stroke="#9c7c58" stroke-opacity="0.30" stroke-width="0.42" fill="none"/><path d="M325.4 225.2 Q325.8 225.1 318.4 225.1" stroke="#9c7c58" stroke-opacity="0.29" stroke-width="0.55" fill="none"/><path d="M349.4 228.5 Q369.2 325.8 499.9 385.5" stroke="#4a3a2a" stroke-opacity="0.33" stroke-width="0.93" fill="none"/><path d="M311.0 226.9 Q299.0 252.3 232.4 267.9" stroke="#4a3a2a" stroke-opacity="0.52" stroke-width="0.86" fill="none"/><path d="M346.0 227.8 Q361.8 380.8 463.9 474.6" stroke="#9c7c58" stroke-opacity="0.33" stroke-width="0.45" fill="none"/><path d="M345.6 228.3 Q366.2 285.9 489.2 321.3" stroke="#9c7c58" stroke-opacity="0.36" stroke-width="0.59" fill="none"/><path d="M304.0 228.3 Q284.8 301.7 159.4 346.6" stroke="#9c7c58" stroke-opacity="0.36" stroke-width="0.65" fill="none"/><path d="M325.1 225.5 Q322.3 226.9 300.7 227.7" stroke="#4a3a2a" stroke-opacity="0.56" stroke-width="0.72" fill="none"/><path d="M340.6 226.9 Q354.4 249.9 420.3 264.1" stroke="#0a0805" stroke-opacity="0.46" stroke-width="0.66" fill="none"/><path d="M333.1 225.7 Q340.4 423.2 363.3 544.2" stroke="#0a0805" stroke-opacity="0.26" stroke-width="0.98" fill="none"/><path d="M318.6 226.1 Q309.4 418.8 270.4 536.9" stroke="#9c7c58" stroke-opacity="0.24" stroke-width="0.60" fill="none"/><path d="M345.6 228.4 Q368.8 337.8 498.3 404.9" stroke="#0a0805" stroke-opacity="0.41" stroke-width="0.61" fill="none"/><path d="M313.1 227.0 Q302.9 255.4 227.0 272.9" stroke="#0a0805" stroke-opacity="0.25" stroke-width="0.91" fill="none"/><path d="M321.5 225.6 Q318.0 227.3 296.4 228.4" stroke="#9c7c58" stroke-opacity="0.13" stroke-width="0.48" fill="none"/><path d="M338.2 227.3 Q354.6 259.5 442.2 279.2" stroke="#4a3a2a" stroke-opacity="0.58" stroke-width="0.84" fill="none"/><path d="M344.6 227.5 Q361.3 389.8 450.7 489.3" stroke="#4a3a2a" stroke-opacity="0.56" stroke-width="0.83" fill="none"/><path d="M342.0 227.5 Q357.3 388.9 452.0 487.8" stroke="#0a0805" stroke-opacity="0.29" stroke-width="1.18" fill="none"/><path d="M330.2 226.4 Q340.1 235.2 394.1 240.6" stroke="#9c7c58" stroke-opacity="0.25" stroke-width="0.45" fill="none"/><path d="M310.3 227.8 Q292.5 272.9 184.0 300.5" stroke="#0a0805" stroke-opacity="0.55" stroke-width="0.97" fill="none"/><path d="M302.3 228.3 Q278.5 347.9 161.9 421.1" stroke="#4a3a2a" stroke-opacity="0.59" stroke-width="0.66" fill="none"/><path d="M313.7 226.4 Q304.6 415.8 256.4 531.9" stroke="#0a0805" stroke-opacity="0.41" stroke-width="1.08" fill="none"/><path d="M325.8 225.4 Q326.6 225.4 344.0 225.4" stroke="#0a0805" stroke-opacity="0.24" stroke-width="1.15" fill="none"/><path d="M349.7 228.4 Q372.1 337.6 498.3 404.5" stroke="#9c7c58" stroke-opacity="0.37" stroke-width="0.56" fill="none"/><path d="M303.4 228.2 Q284.8 357.6 166.3 436.9" stroke="#0a0805" stroke-opacity="0.24" stroke-width="1.02" fill="none"/><path d="M343.8 228.4 Q366.2 339.5 498.1 407.5" stroke="#0a0805" stroke-opacity="0.53" stroke-width="1.20" fill="none"/><path d="M326.7 225.0 Q327.2 224.6 323.9 224.3" stroke="#9c7c58" stroke-opacity="0.31" stroke-width="0.62" fill="none"/><path d="M344.4 227.5 Q359.2 388.2 453.0 486.7" stroke="#9c7c58" stroke-opacity="0.16" stroke-width="0.46" fill="none"/><path d="M317.9 226.7 Q304.0 409.3 238.6 521.2" stroke="#4a3a2a" stroke-opacity="0.47" stroke-width="0.78" fill="none"/><path d="M336.6 226.7 Q344.8 410.5 411.1 523.2" stroke="#9c7c58" stroke-opacity="0.23" stroke-width="0.49" fill="none"/><path d="M303.5 228.4 Q283.2 320.2 155.3 376.5" stroke="#9c7c58" stroke-opacity="0.14" stroke-width="0.59" fill="none"/><path d="M337.4 227.1 Q353.3 401.1 432.3 507.8" stroke="#9c7c58" stroke-opacity="0.29" stroke-width="0.73" fill="none"/><path d="M331.8 226.0 Q340.6 420.9 373.7 540.4" stroke="#4a3a2a" stroke-opacity="0.35" stroke-width="0.53" fill="none"/><path d="M334.5 226.6 Q343.0 242.8 407.9 252.8" stroke="#0a0805" stroke-opacity="0.35" stroke-width="0.72" fill="none"/><path d="M327.9 225.3 Q324.1 424.2 312.8 546.1" stroke="#9c7c58" stroke-opacity="0.20" stroke-width="0.53" fill="none"/><path d="M317.9 226.6 Q306.6 244.9 245.2 256.1" stroke="#9c7c58" stroke-opacity="0.13" stroke-width="0.45" fill="none"/><path d="M311.2 227.7 Q291.4 268.8 193.0 294.0" stroke="#0a0805" stroke-opacity="0.22" stroke-width="0.85" fill="none"/><path d="M339.9 227.9 Q360.7 376.7 468.6 467.9" stroke="#0a0805" stroke-opacity="0.38" stroke-width="0.62" fill="none"/><path d="M307.9 227.9 Q289.6 373.3 179.6 462.5" stroke="#9c7c58" stroke-opacity="0.35" stroke-width="0.40" fill="none"/><path d="M345.9 228.4 Q366.9 308.9 498.4 358.2" stroke="#9c7c58" stroke-opacity="0.30" stroke-width="0.80" fill="none"/><path d="M341.3 227.9 Q361.4 376.5 468.8 467.6" stroke="#9c7c58" stroke-opacity="0.22" stroke-width="0.68" fill="none"/><path d="M331.5 226.4 Q338.5 416.1 395.0 532.4" stroke="#4a3a2a" stroke-opacity="0.60" stroke-width="0.96" fill="none"/><path d="M337.5 226.9 Q350.0 250.5 421.6 265.0" stroke="#9c7c58" stroke-opacity="0.29" stroke-width="0.60" fill="none"/><path d="M305.3 228.2 Q287.3 287.8 167.7 324.3" stroke="#0a0805" stroke-opacity="0.37" stroke-width="0.60" fill="none"/><path d="M325.0 225.3 Q328.7 424.1 342.2 546.0" stroke="#0a0805" stroke-opacity="0.40" stroke-width="1.18" fill="none"/><path d="M333.8 226.0 Q342.1 229.4 376.7 231.5" stroke="#9c7c58" stroke-opacity="0.20" stroke-width="0.42" fill="none"/><path d="M317.9 226.7 Q305.8 411.1 243.5 524.2" stroke="#0a0805" stroke-opacity="0.33" stroke-width="1.00" fill="none"/><path d="M350.2 228.4 Q371.7 343.4 495.8 413.9" stroke="#9c7c58" stroke-opacity="0.14" stroke-width="0.69" fill="none"/><path d="M312.9 227.4 Q295.1 262.5 207.8 284.1" stroke="#0a0805" stroke-opacity="0.45" stroke-width="0.58" fill="none"/><path d="M340.8 227.2 Q352.4 398.4 437.9 503.4" stroke="#9c7c58" stroke-opacity="0.21" stroke-width="0.75" fill="none"/><path d="M324.6 225.0 Q327.4 224.4 326.7 224.0" stroke="#0a0805" stroke-opacity="0.50" stroke-width="0.91" fill="none"/><path d="M323.9 225.5 Q322.9 227.1 299.0 228.0" stroke="#4a3a2a" stroke-opacity="0.36" stroke-width="0.76" fill="none"/><path d="M326.7 225.3 Q328.4 424.1 343.0 545.9" stroke="#4a3a2a" stroke-opacity="0.48" stroke-width="0.61" fill="none"/><path d="M346.4 228.4 Q368.8 343.7 495.6 414.3" stroke="#4a3a2a" stroke-opacity="0.50" stroke-width="0.59" fill="none"/><path d="M320.2 225.7 Q317.7 423.0 292.5 543.9" stroke="#0a0805" stroke-opacity="0.47" stroke-width="0.86" fill="none"/><path d="M350.3 228.5 Q372.8 325.7 500.0 385.3" stroke="#9c7c58" stroke-opacity="0.20" stroke-width="0.56" fill="none"/><path d="M309.0 228.3 Q287.0 350.6 163.1 425.7" stroke="#0a0805" stroke-opacity="0.27" stroke-width="0.82" fill="none"/><path d="M339.8 227.6 Q356.0 387.7 453.7 485.9" stroke="#0a0805" stroke-opacity="0.46" stroke-width="0.65" fill="none"/><path d="M349.1 228.5 Q372.6 316.0 499.6 369.7" stroke="#0a0805" stroke-opacity="0.42" stroke-width="0.99" fill="none"/><path d="M343.1 228.4 Q365.4 340.9 497.4 409.9" stroke="#9c7c58" stroke-opacity="0.37" stroke-width="0.61" fill="none"/><path d="M312.1 227.9 Q294.0 373.0 179.3 461.9" stroke="#9c7c58" stroke-opacity="0.21" stroke-width="0.44" fill="none"/><path d="M308.3 228.3 Q286.4 295.7 162.9 337.1" stroke="#9c7c58" stroke-opacity="0.19" stroke-width="0.59" fill="none"/><path d="M309.5 228.3 Q289.5 348.6 162.2 422.3" stroke="#0a0805" stroke-opacity="0.35" stroke-width="0.79" fill="none"/><path d="M348.3 228.1 Q366.1 365.0 480.0 448.9" stroke="#9c7c58" stroke-opacity="0.19" stroke-width="0.77" fill="none"/><path d="M309.2 227.6 Q294.6 266.8 197.4 290.9" stroke="#0a0805" stroke-opacity="0.35" stroke-width="0.63" fill="none"/><path d="M304.8 228.4 Q280.4 310.0 157.5 360.1" stroke="#0a0805" stroke-opacity="0.35" stroke-width="0.78" fill="none"/><path d="M312.8 226.9 Q297.9 407.1 232.6 517.6" stroke="#9c7c58" stroke-opacity="0.22" stroke-width="0.40" fill="none"/><path d="M342.3 227.4 Q356.5 394.3 444.1 496.6" stroke="#0a0805" stroke-opacity="0.42" stroke-width="0.63" fill="none"/><path d="M330.5 225.5 Q334.3 225.9 351.6 226.2" stroke="#9c7c58" stroke-opacity="0.17" stroke-width="0.74" fill="none"/><path d="M314.1 226.6 Q304.2 245.2 244.7 256.6" stroke="#4a3a2a" stroke-opacity="0.40" stroke-width="0.52" fill="none"/><path d="M344.9 228.0 Q364.9 371.2 474.0 459.0" stroke="#4a3a2a" stroke-opacity="0.34" stroke-width="0.61" fill="none"/><path d="M344.0 228.1 Q363.8 363.5 481.5 446.5" stroke="#0a0805" stroke-opacity="0.24" stroke-width="1.19" fill="none"/><path d="M349.8 228.5 Q370.8 320.2 500.2 376.5" stroke="#4a3a2a" stroke-opacity="0.41" stroke-width="0.52" fill="none"/><path d="M308.9 228.3 Q285.7 295.3 163.2 336.3" stroke="#0a0805" stroke-opacity="0.37" stroke-width="1.19" fill="none"/><path d="M332.2 226.2 Q338.6 231.5 385.6 234.7" stroke="#0a0805" stroke-opacity="0.47" stroke-width="1.09" fill="none"/><path d="M319.1 226.0 Q314.5 419.9 276.1 538.7" stroke="#9c7c58" stroke-opacity="0.19" stroke-width="0.70" fill="none"/><path d="M337.1 226.2 Q341.9 418.3 385.6 536.0" stroke="#4a3a2a" stroke-opacity="0.36" stroke-width="0.50" fill="none"/><path d="M333.6 226.8 Q345.2 248.0 416.3 261.1" stroke="#4a3a2a" stroke-opacity="0.45" stroke-width="0.64" fill="none"/><path d="M306.8 228.2 Q288.4 354.8 165.0 432.4" stroke="#9c7c58" stroke-opacity="0.25" stroke-width="0.60" fill="none"/><path d="M343.1 227.4 Q356.5 394.3 444.0 496.6" stroke="#0a0805" stroke-opacity="0.33" stroke-width="0.73" fill="none"/><rect x="89" y="124" width="449" height="450" filter="url(#nz)" opacity="0.42"/><path d="M330.5 224 C336.4 224.5 352.6 225.6 361.5 227.2 C370.4 228.8 377.5 230.6 383.9 233.5 C390.3 236.4 394.6 240.2 399.9 244.7 C405.2 249.2 409.9 255.6 415.8 260.7 C421.7 265.8 428.1 270.5 435 275 C441.9 279.5 450.5 283.4 457.4 287.9 C464.3 292.4 471.2 296.6 476.5 302.2 C481.8 307.8 485.8 313.9 489.3 321.4 C492.8 328.9 495.4 337.4 497.3 347 C499.2 356.6 500.4 368.8 500.5 379 C500.6 389.2 500.6 398.2 498 408.4 C495.4 418.6 490.5 429.6 485.2 440.3 C479.9 451.0 474.0 461.7 466 472.3 C458.0 482.9 447.9 494.6 437.2 504.2 C426.5 513.8 414.2 523.1 402 529.8 C389.8 536.5 376.5 541.3 363.7 544.2 C350.9 547.1 337.1 547.4 325.4 547.4 C313.7 547.4 304.6 546.6 293.4 544.2 C282.2 541.8 269.4 538.1 258.2 533 C247.0 527.9 235.9 520.7 226.3 513.8 C216.7 506.9 208.2 499.4 200.7 491.4 C193.2 483.4 187.1 474.4 181.5 465.9 C175.9 457.4 170.9 449.4 167.2 440.3 C163.5 431.2 161.2 421.7 159.2 411.5 C157.2 401.3 155.0 389.8 155 379 C155.0 368.2 156.9 356.6 159.2 347 C161.5 337.4 165.1 328.9 168.8 321.4 C172.5 313.9 175.7 308.0 181.5 302.2 C187.3 296.4 196.4 291.1 203.9 286.3 C211.4 281.5 219.4 278.6 226.3 273.5 C233.2 268.4 238.5 261.8 245.4 255.9 C252.3 250.0 259.8 242.8 267.8 238.3 C275.8 233.8 283.7 231.2 293.4 228.8 C303.1 226.4 319.8 224.8 326 224 C332.2 223.2 324.6 223.5 330.5 224Z" fill="none" stroke="#000" stroke-width="12" stroke-opacity="0.35" filter="url(#rb)"/><rect x="89" y="124" width="449" height="450" fill="url(#hh)"/><rect x="89" y="124" width="449" height="450" fill="url(#hh2)"/><rect x="89" y="124" width="449" height="450" fill="url(#hb)"/></g></g>
<path d="M307 203 C319 201.5 330.5 208 331 226" stroke="#6a5844" stroke-width="1" stroke-dasharray="1.6 0.9" fill="none"/><path d="M308.5 206 C318 205.5 326 212 326.5 226" stroke="#5a4a38" stroke-width="1" stroke-dasharray="1.6 0.9" fill="none"/></svg>
<div class="a" style="left:238px;top:565px;width:150px;height:11px;background:#000"></div>
<div class="t" style="left:240px;top:568px;font-size:7.8px;color:#f0f0f0;">Frame&nbsp; 38:&nbsp; 2018-06-28&nbsp; 20:32:16&nbsp; (0.00s)</div>
<div class="t" style="left:35.7px;top:600px;font-size:8px;color:#b6b6b6;">Progressive Rendering...</div>
<div class="a" style="left:624px;top:14px;width:562px;height:602px;background:#7a3a8a;box-shadow:0 0 8px rgba(0,0,0,0.35)"></div>
<div class="a" style="left:625px;top:15px;width:560px;height:600px;background:#4a4a4a"></div>
<div class="a" style="left:625px;top:15px;width:560px;height:21px;background:#fff"></div>
<svg class="a" style="left:632px;top:20px;" width="12" height="12" viewBox="0 0 14 14"><circle cx="7" cy="7" r="6.2" fill="#dcdce6"/><circle cx="6.6" cy="7.4" r="5" fill="#1c2870"/><ellipse cx="6.2" cy="8" rx="2.4" ry="2.2" fill="#4a66d8"/><path d="M8.5 1.8 Q12.6 3 12.4 7.5" stroke="#a0a8d0" fill="none" stroke-width="1.2"/></svg>
<div class="t" style="left:646px;top:22px;font-size:8.6px;color:#151515;-webkit-text-stroke:0.25px #151515">Material Editor</div>
<div class="a" style="left:1102px;top:25px;width:8px;height:1px;background:#222"></div>
<div class="a" style="left:1133px;top:22px;width:8px;height:7px;border:1px solid #222;border-top-width:1.5px"></div>
<svg class="a" style="left:1165px;top:21.5px;" width="8" height="8" viewBox="0 0 8 8"><path d="M0.5 0.5L7.5 7.5M7.5 0.5L0.5 7.5" stroke="#222" stroke-width="1"/></svg>
<div class="a" style="left:625px;top:36px;width:560px;height:13px;background:#6a6a6a"></div>
<div class="a" style="left:625px;top:36px;width:560px;height:1px;background:#888"></div>
<div class="a" style="left:625px;top:48.5px;width:560px;height:1px;background:#575757"></div>
<svg class="a" style="left:629px;top:38px;" width="7" height="9" viewBox="0 0 7 9"><rect x="0" y="0" width="1" height="1" fill="#8c8c8c"/><rect x="0" y="2" width="1" height="1" fill="#8c8c8c"/><rect x="0" y="4" width="1" height="1" fill="#8c8c8c"/><rect x="0" y="6" width="1" height="1" fill="#8c8c8c"/><rect x="0" y="8" width="1" height="1" fill="#8c8c8c"/><rect x="2" y="0" width="1" height="1" fill="#8c8c8c"/><rect x="2" y="2" width="1" height="1" fill="#8c8c8c"/><rect x="2" y="4" width="1" height="1" fill="#8c8c8c"/><rect x="2" y="6" width="1" height="1" fill="#8c8c8c"/><rect x="2" y="8" width="1" height="1" fill="#8c8c8c"/><rect x="4" y="0" width="1" height="1" fill="#8c8c8c"/><rect x="4" y="2" width="1" height="1" fill="#8c8c8c"/><rect x="4" y="4" width="1" height="1" fill="#8c8c8c"/><rect x="4" y="6" width="1" height="1" fill="#8c8c8c"/><rect x="4" y="8" width="1" height="1" fill="#8c8c8c"/><rect x="6" y="0" width="1" height="1" fill="#8c8c8c"/><rect x="6" y="2" width="1" height="1" fill="#8c8c8c"/><rect x="6" y="4" width="1" height="1" fill="#8c8c8c"/><rect x="6" y="6" width="1" height="1" fill="#8c8c8c"/><rect x="6" y="8" width="1" height="1" fill="#8c8c8c"/></svg>
<svg class="a" style="left:1113px;top:37px;" width="72" height="12" viewBox="0 0 72 12"><path d="M3 6 L11.5 1.5 L10 6 L11.5 10.5Z" fill="#151515"/><path d="M11 6 L25 2.2 L20 6 L25 9.8Z" fill="#888" opacity="0.55"/><path d="M33 11 L37 1 L41 11Z" fill="#888" opacity="0.45"/><path d="M50 5.8 V3.8 A2.6 2.6 0 0 1 55.2 3.8 V5" stroke="#2a2a2a" stroke-width="1.2" fill="none"/><rect x="49" y="5.8" width="7.5" height="5.6" rx="0.8" fill="#6a6a6a" stroke="#2a2a2a" stroke-width="1.1"/><rect x="60" y="1" width="7" height="10" fill="#666" stroke="#1e1e1e" stroke-width="1"/><path d="M63.5 3.5V9M61 6.2H66" stroke="#111" stroke-width="1.5"/></svg>
<div class="a" style="left:625px;top:49px;width:86px;height:566px;background:#484848"></div>
<div class="a" style="left:711px;top:49px;width:1px;height:566px;background:#3a3a3a"></div>
<div class="a" style="left:712px;top:49px;width:1px;height:566px;background:#525252"></div>
<div class="a" style="left:625px;top:51px;width:65px;height:65px;background:#3a3a3a"></div><div class="a" style="left:626px;top:52px;width:63px;height:63px;overflow:hidden;background:repeating-linear-gradient(135deg,#d3d3d3 0px,#d3d3d3 10.5px,#afafaf 10.5px,#afafaf 17.7px)"><svg class="a" style="left:0;top:0" width="63" height="63" viewBox="0 0 63 63"><path d="M15 0 L32 0 C30 8 29 14 28 22 C27 32 25 40 20 48 C16 55 12 60 8 63 L1 63 C6 56 10 48 12 38 C13 28 13 14 15 0Z" fill="#a39a90" opacity="0.6"/><g stroke="#8e8478" stroke-width="0.7" fill="none" opacity="0.8"><path d="M18 0 C16 15 17 30 12 45 C9 53 5 60 3 63"/><path d="M22 0 C21 18 21 32 16 48 C13 56 9 61 6 63"/><path d="M26 0 C25 15 25 30 20 46 C17 55 12 61 9 63"/><path d="M29 0 C28 20 27 33 23 46"/><path d="M20 5 C18 20 19 35 14 50"/></g></svg></div>
<div class="a" style="left:625px;top:120px;width:80px;height:10.5px;background:#393939"></div>
<div class="t" style="left:629px;top:123px;font-size:8.2px;color:#b8b8b8;">Hair Mat.1</div>
<div class="a" style="left:625px;top:133px;width:61px;height:12px;background:#393939"></div>
<div class="a" style="left:686px;top:133px;width:6px;height:12px;background:#5e5e5e"></div>
<svg class="a" style="left:687.5px;top:136.5px;" width="3" height="5" viewBox="0 0 3 5"><path d="M0 0L3 2.5L0 5Z" fill="#aaa"/></svg>
<svg class="a" style="left:694.5px;top:132.5px;" width="12" height="12" viewBox="0 0 12 12"><circle cx="6" cy="6" r="5.6" fill="#d4d4d4"/><path d="M3.3 2.8 L9.2 6.6 L6.6 7.1 L8.6 9.6 L7.6 10.2 L5.7 7.6 L3.9 9.2Z" fill="#1a1a1a"/></svg>
<svg class="a" style="left:625.8px;top:148.1px;" width="10" height="10" viewBox="0 0 10 10"><circle cx="5.0" cy="5.0" r="4.4" fill="#3c3c3c" stroke="#7a7a7a" stroke-width="1"/><circle cx="5.0" cy="5.0" r="2.5" fill="#858585"/></svg>
<div class="t" style="left:638.7px;top:150px;font-size:8px;color:#b2b2b2;width:50px;overflow:hidden">Color<span style="color:#8a8a8a"> . . . . . .</span></div>
<div class="a" style="left:688.8px;top:148.2px;width:8.4px;height:8.6px;background:#2c2c2c;border-radius:2px"></div>
<svg class="a" style="left:688.8px;top:148.2px;" width="8.4" height="8.6" viewBox="0 0 8.4 8.6"><path d="M1.4 5 L3.3 7.3 L7.4 1.3" stroke="#ececec" stroke-width="1.3" fill="none"/></svg>
<svg class="a" style="left:625.8px;top:160.74px;" width="10" height="10" viewBox="0 0 10 10"><circle cx="5.0" cy="5.0" r="4.4" fill="#3c3c3c" stroke="#7a7a7a" stroke-width="1"/><circle cx="5.0" cy="5.0" r="2.5" fill="#858585"/></svg>
<div class="t" style="left:638.7px;top:162px;font-size:8px;color:#b2b2b2;width:50px;overflow:hidden">Backlit Color<span style="color:#8a8a8a"></span></div>
<div class="a" style="left:688.8px;top:160.84px;width:8.4px;height:8.6px;background:#5c5c5c;border-radius:2px"></div>
<svg class="a" style="left:625.8px;top:173.38px;" width="10" height="10" viewBox="0 0 10 10"><circle cx="5.0" cy="5.0" r="4.4" fill="#3c3c3c" stroke="#7a7a7a" stroke-width="1"/><circle cx="5.0" cy="5.0" r="2.5" fill="#858585"/></svg>
<div class="t" style="left:638.7px;top:175px;font-size:8px;color:#e7a62e;width:50px;overflow:hidden">Specular<span style="color:#8a8a8a">. . . . .</span></div>
<div class="a" style="left:688.8px;top:173.48px;width:8.4px;height:8.6px;background:#2c2c2c;border-radius:2px"></div>
<svg class="a" style="left:688.8px;top:173.48px;" width="8.4" height="8.6" viewBox="0 0 8.4 8.6"><path d="M1.4 5 L3.3 7.3 L7.4 1.3" stroke="#ececec" stroke-width="1.3" fill="none"/></svg>
<svg class="a" style="left:625.8px;top:186.01999999999998px;" width="10" height="10" viewBox="0 0 10 10"><circle cx="5.0" cy="5.0" r="4.4" fill="#3c3c3c" stroke="#7a7a7a" stroke-width="1"/><circle cx="5.0" cy="5.0" r="2.5" fill="#858585"/></svg>
<div class="t" style="left:638.7px;top:188px;font-size:8px;color:#b2b2b2;width:50px;overflow:hidden">Transparency<span style="color:#8a8a8a"></span></div>
<div class="a" style="left:688.8px;top:186.12px;width:8.4px;height:8.6px;background:#5c5c5c;border-radius:2px"></div>
<svg class="a" style="left:625.8px;top:198.66px;" width="10" height="10" viewBox="0 0 10 10"><circle cx="5.0" cy="5.0" r="4.4" fill="#3c3c3c" stroke="#7a7a7a" stroke-width="1"/><circle cx="5.0" cy="5.0" r="2.5" fill="#858585"/></svg>
<div class="t" style="left:638.7px;top:200px;font-size:8px;color:#b2b2b2;width:50px;overflow:hidden">Thickness<span style="color:#8a8a8a"> . . . .</span></div>
<div class="a" style="left:688.8px;top:198.76px;width:8.4px;height:8.6px;background:#2c2c2c;border-radius:2px"></div>
<svg class="a" style="left:688.8px;top:198.76px;" width="8.4" height="8.6" viewBox="0 0 8.4 8.6"><path d="M1.4 5 L3.3 7.3 L7.4 1.3" stroke="#ececec" stroke-width="1.3" fill="none"/></svg>
<svg class="a" style="left:625.8px;top:211.3px;" width="10" height="10" viewBox="0 0 10 10"><circle cx="5.0" cy="5.0" r="4.4" fill="#3c3c3c" stroke="#7a7a7a" stroke-width="1"/><circle cx="5.0" cy="5.0" r="2.5" fill="#858585"/></svg>
<div class="t" style="left:638.7px;top:213px;font-size:8px;color:#b2b2b2;width:50px;overflow:hidden">Length<span style="color:#8a8a8a"> . . . . .</span></div>
<div class="a" style="left:688.8px;top:211.4px;width:8.4px;height:8.6px;background:#5c5c5c;border-radius:2px"></div>
<svg class="a" style="left:625.8px;top:223.94px;" width="10" height="10" viewBox="0 0 10 10"><circle cx="5.0" cy="5.0" r="4.4" fill="#3c3c3c" stroke="#7a7a7a" stroke-width="1"/><circle cx="5.0" cy="5.0" r="2.5" fill="#858585"/></svg>
<div class="t" style="left:638.7px;top:225px;font-size:8px;color:#b2b2b2;width:50px;overflow:hidden">Scale<span style="color:#8a8a8a">. . . . . .</span></div>
<div class="a" style="left:688.8px;top:224.04px;width:8.4px;height:8.6px;background:#5c5c5c;border-radius:2px"></div>
<svg class="a" style="left:625.8px;top:236.57999999999998px;" width="10" height="10" viewBox="0 0 10 10"><circle cx="5.0" cy="5.0" r="4.4" fill="#3c3c3c" stroke="#7a7a7a" stroke-width="1"/><circle cx="5.0" cy="5.0" r="2.5" fill="#858585"/></svg>
<div class="t" style="left:638.7px;top:238px;font-size:8px;color:#b2b2b2;width:50px;overflow:hidden">Frizz<span style="color:#8a8a8a"> . . . . . . .</span></div>
<div class="a" style="left:688.8px;top:236.68px;width:8.4px;height:8.6px;background:#5c5c5c;border-radius:2px"></div>
<svg class="a" style="left:625.8px;top:249.22px;" width="10" height="10" viewBox="0 0 10 10"><circle cx="5.0" cy="5.0" r="4.4" fill="#3c3c3c" stroke="#7a7a7a" stroke-width="1"/><circle cx="5.0" cy="5.0" r="2.5" fill="#858585"/></svg>
<div class="t" style="left:638.7px;top:251px;font-size:8px;color:#b2b2b2;width:50px;overflow:hidden">Kink<span style="color:#8a8a8a"> . . . . . . .</span></div>
<div class="a" style="left:688.8px;top:249.32px;width:8.4px;height:8.6px;background:#5c5c5c;border-radius:2px"></div>
<svg class="a" style="left:625.8px;top:261.86px;" width="10" height="10" viewBox="0 0 10 10"><circle cx="5.0" cy="5.0" r="4.4" fill="#3c3c3c" stroke="#7a7a7a" stroke-width="1"/><circle cx="5.0" cy="5.0" r="2.5" fill="#858585"/></svg>
<div class="t" style="left:638.7px;top:263px;font-size:8px;color:#b2b2b2;width:50px;overflow:hidden">Density<span style="color:#8a8a8a">. . . . .</span></div>
<div class="a" style="left:688.8px;top:261.96px;width:8.4px;height:8.6px;background:#5c5c5c;border-radius:2px"></div>
<svg class="a" style="left:625.8px;top:274.5px;" width="10" height="10" viewBox="0 0 10 10"><circle cx="5.0" cy="5.0" r="4.4" fill="#3c3c3c" stroke="#7a7a7a" stroke-width="1"/><circle cx="5.0" cy="5.0" r="2.5" fill="#858585"/></svg>
<div class="t" style="left:638.7px;top:276px;font-size:8px;color:#b2b2b2;width:50px;overflow:hidden">Clump<span style="color:#8a8a8a">. . . . . .</span></div>
<div class="a" style="left:688.8px;top:274.6px;width:8.4px;height:8.6px;background:#5c5c5c;border-radius:2px"></div>
<svg class="a" style="left:625.8px;top:287.14px;" width="10" height="10" viewBox="0 0 10 10"><circle cx="5.0" cy="5.0" r="4.4" fill="#3c3c3c" stroke="#7a7a7a" stroke-width="1"/><circle cx="5.0" cy="5.0" r="2.5" fill="#858585"/></svg>
<div class="t" style="left:638.7px;top:289px;font-size:8px;color:#b2b2b2;width:50px;overflow:hidden">Tighten<span style="color:#8a8a8a">. . . . .</span></div>
<div class="a" style="left:688.8px;top:287.24px;width:8.4px;height:8.6px;background:#5c5c5c;border-radius:2px"></div>
<svg class="a" style="left:625.8px;top:299.78px;" width="10" height="10" viewBox="0 0 10 10"><circle cx="5.0" cy="5.0" r="4.4" fill="#3c3c3c" stroke="#7a7a7a" stroke-width="1"/><circle cx="5.0" cy="5.0" r="2.5" fill="#858585"/></svg>
<div class="t" style="left:638.7px;top:301px;font-size:8px;color:#b2b2b2;width:50px;overflow:hidden">Displace<span style="color:#8a8a8a">. . . .</span></div>
<div class="a" style="left:688.8px;top:299.88px;width:8.4px;height:8.6px;background:#5c5c5c;border-radius:2px"></div>
<svg class="a" style="left:625.8px;top:312.41999999999996px;" width="10" height="10" viewBox="0 0 10 10"><circle cx="5.0" cy="5.0" r="4.4" fill="#3c3c3c" stroke="#7a7a7a" stroke-width="1"/><circle cx="5.0" cy="5.0" r="2.5" fill="#858585"/></svg>
<div class="t" style="left:638.7px;top:314px;font-size:8px;color:#b2b2b2;width:50px;overflow:hidden">Bend<span style="color:#8a8a8a">. . . . . . .</span></div>
<div class="a" style="left:688.8px;top:312.52px;width:8.4px;height:8.6px;background:#5c5c5c;border-radius:2px"></div>
<svg class="a" style="left:625.8px;top:325.06px;" width="10" height="10" viewBox="0 0 10 10"><circle cx="5.0" cy="5.0" r="4.4" fill="#3c3c3c" stroke="#7a7a7a" stroke-width="1"/><circle cx="5.0" cy="5.0" r="2.5" fill="#858585"/></svg>
<div class="t" style="left:638.7px;top:327px;font-size:8px;color:#b2b2b2;width:50px;overflow:hidden">Curl<span style="color:#8a8a8a">. . . . . . .</span></div>
<div class="a" style="left:688.8px;top:325.16px;width:8.4px;height:8.6px;background:#5c5c5c;border-radius:2px"></div>
<svg class="a" style="left:625.8px;top:337.70000000000005px;" width="10" height="10" viewBox="0 0 10 10"><circle cx="5.0" cy="5.0" r="4.4" fill="#3c3c3c" stroke="#7a7a7a" stroke-width="1"/><circle cx="5.0" cy="5.0" r="2.5" fill="#858585"/></svg>
<div class="t" style="left:638.7px;top:339px;font-size:8px;color:#b2b2b2;width:50px;overflow:hidden">Twist<span style="color:#8a8a8a">. . . . . . .</span></div>
<div class="a" style="left:688.8px;top:337.8px;width:8.4px;height:8.6px;background:#5c5c5c;border-radius:2px"></div>
<svg class="a" style="left:625.8px;top:350.34000000000003px;" width="10" height="10" viewBox="0 0 10 10"><circle cx="5.0" cy="5.0" r="4.4" fill="#3c3c3c" stroke="#7a7a7a" stroke-width="1"/><circle cx="5.0" cy="5.0" r="2.5" fill="#858585"/></svg>
<div class="t" style="left:638.7px;top:352px;font-size:8px;color:#b2b2b2;width:50px;overflow:hidden">Wave<span style="color:#8a8a8a"> . . . . . .</span></div>
<div class="a" style="left:688.8px;top:350.44px;width:8.4px;height:8.6px;background:#5c5c5c;border-radius:2px"></div>
<svg class="a" style="left:625.8px;top:362.98px;" width="10" height="10" viewBox="0 0 10 10"><circle cx="5.0" cy="5.0" r="4.4" fill="#3c3c3c" stroke="#7a7a7a" stroke-width="1"/><circle cx="5.0" cy="5.0" r="2.5" fill="#858585"/></svg>
<div class="t" style="left:638.7px;top:364px;font-size:8px;color:#b2b2b2;width:50px;overflow:hidden">Straighten<span style="color:#8a8a8a"> . .</span></div>
<div class="a" style="left:688.8px;top:363.08px;width:8.4px;height:8.6px;background:#5c5c5c;border-radius:2px"></div>
<div class="t" style="left:638.7px;top:378px;font-size:8px;color:#b2b2b2;">Assign <span style="color:#8a8a8a">. . . . .</span></div>
<div class="t" style="left:638.7px;top:390px;font-size:8px;color:#b2b2b2;">Illumination</div>
<div class="a" style="left:716px;top:55.3px;width:467.5px;height:10.4px;background:#343434"></div>
<div class="t" style="left:717px;top:56px;font-size:8.3px;color:#c4c4c4;">Specular</div>
<div class="a" style="left:716px;top:68.7px;width:467.5px;height:10.3px;background:#6a6a6a"></div>
<svg class="a" style="left:723.5px;top:72.3px;" width="5.5" height="4" viewBox="0 0 5.5 4"><path d="M0 0H5.5L2.75 4Z" fill="#e0e0e0"/></svg>
<div class="t" style="left:730.5px;top:70px;font-size:8.3px;color:#d0d0d0;">Primary</div>
<svg class="a" style="left:722.8px;top:82.0px;" width="10" height="10" viewBox="0 0 10 10"><circle cx="5.0" cy="5.0" r="4.4" fill="#3c3c3c" stroke="#7a7a7a" stroke-width="1"/><circle cx="5.0" cy="5.0" r="2.5" fill="#858585"/></svg>
<div class="t" style="left:736px;top:83px;font-size:8.3px;color:#b4b4b4;">Color <span style="color:#8a8a8a">.</span></div>
<svg class="a" style="left:770px;top:85px;" width="5" height="4" viewBox="0 0 5 4"><path d="M0 0H5L2.5 4Z" fill="#111"/></svg>
<div class="a" style="left:776px;top:82px;width:33px;height:9px;background:#fff"></div>
<div class="a" style="left:776px;top:95.3px;width:13px;height:12.5px;background:#5c5c5c;border:1px solid #444"></div>
<svg class="a" style="left:777px;top:96.3px;" width="11" height="10" viewBox="0 0 11 10"><path d="M1 1H10M1 9H10M5.5 1.5V8.5" stroke="#333" stroke-width="1"/><path d="M3.5 3.5L5.5 1.5L7.5 3.5M3.5 6.5L5.5 8.5L7.5 6.5" fill="#333"/></svg>
<svg class="a" style="left:808px;top:94.8px;" width="13" height="13" viewBox="0 0 13 13"><circle cx="6.5" cy="6.5" r="5" fill="none" stroke="#6e6e6e" stroke-width="2.4" stroke-dasharray="1.3 1.3"/><circle cx="6.5" cy="6.5" r="2.5" fill="none" stroke="#555" stroke-width="0.8"/></svg>
<div class="a" style="left:826px;top:95.3px;width:13px;height:12.5px;background:linear-gradient(135deg,#6e6e6e,#2e2e2e);border:1px solid #404040"></div>
<div class="a" style="left:844px;top:95.3px;width:13px;height:12.5px;background:#5e5e5e;border:1px solid #444"></div>
<svg class="a" style="left:845px;top:96.3px;" width="11" height="10" viewBox="0 0 11 10"><path d="M1 9L4 3.5L6 6.5L7.5 4.5L10 9Z" fill="#2a2a2a"/><circle cx="8" cy="2.5" r="1.3" fill="none" stroke="#aaa" stroke-width="0.7"/></svg>
<svg class="a" style="left:875.6px;top:94.8px;" width="13.5" height="13.5" viewBox="0 0 13.5 13.5"><rect x="0.5" y="0.5" width="12.5" height="12.5" rx="1.5" fill="#dadada" stroke="#3a3a3a" stroke-width="1"/><text x="6.75" y="10.3" font-size="9" font-family="Liberation Sans" fill="#2a2a2a" text-anchor="middle" textLength="10.5" lengthAdjust="spacingAndGlyphs" stroke="#2a2a2a" stroke-width="0.3">RGB</text></svg>
<svg class="a" style="left:893.7px;top:94.8px;" width="13.5" height="13.5" viewBox="0 0 13.5 13.5"><rect x="0.5" y="0.5" width="12.5" height="12.5" rx="1.5" fill="#d2d2d2" stroke="#3a3a3a" stroke-width="1"/><text x="6.75" y="10.3" font-size="9" font-family="Liberation Sans" fill="#2a2a2a" text-anchor="middle" textLength="10.5" lengthAdjust="spacingAndGlyphs" stroke="#2a2a2a" stroke-width="0.3">HSV</text></svg>
<div class="a" style="left:912.5px;top:95.3px;width:12.5px;height:12.5px;background:#6c6c6c"></div>
<div class="t" style="left:916.5px;top:98px;font-size:7px;color:#555;">K</div>
<div class="a" style="left:931px;top:95.3px;width:12.5px;height:12.5px;background:#6c6c6c"></div>
<svg class="a" style="left:931px;top:95.3px;" width="12.5" height="12" viewBox="0 0 12.5 12"><rect x="2" y="2" width="3" height="3" fill="#222"/><rect x="6" y="2" width="3" height="3" fill="#888"/><path d="M1.5 8H11" stroke="#333" stroke-width="1"/><rect x="5" y="6.8" width="2.5" height="2.5" fill="#222"/></svg>
<div class="a" style="left:948.7px;top:95.3px;width:12.5px;height:12.5px;background:#6c6c6c"></div>
<svg class="a" style="left:948.7px;top:95.3px;" width="12.5" height="12" viewBox="0 0 12.5 12"><rect x="1.5" y="1.5" width="3" height="3" fill="#333"/><rect x="5" y="1.5" width="3" height="3" fill="#888"/><rect x="5" y="5" width="3" height="3" fill="#555"/><rect x="8.5" y="5" width="3" height="3" fill="#333"/><rect x="1.5" y="8" width="3" height="3" fill="#777"/></svg>
<svg class="a" style="left:980px;top:94.3px;" width="14" height="14" viewBox="0 0 14 14"><path d="M1.5 12.5 L8 6" stroke="#777" stroke-width="1.4"/><path d="M7 5 L10.5 1.5 L12.5 3.5 L9 7Z" fill="#333"/></svg>
<div class="a" style="left:776px;top:111.5px;width:400px;height:1px;background:#3b3b3b"></div>
<div class="a" style="left:776px;top:112.5px;width:400px;height:1px;background:#555"></div>
<div class="t" style="left:775.7px;top:119px;font-size:8.3px;color:#a8a8a8;">R</div>
<div class="a" style="left:785.3px;top:117.5px;width:41.700000000000045px;height:10.200000000000003px;background:#333;border-radius:2px"></div>
<div class="t" style="left:788.8px;top:119px;font-size:8.3px;color:#b4b4b4;">255</div>
<svg class="a" style="left:821px;top:118.6px;" width="5" height="8" viewBox="0 0 5 8"><path d="M0.8 3.2L2.5 0.6L4.2 3.2ZM0.8 4.8L2.5 7.4L4.2 4.8Z" fill="#8a8a8a"/></svg>
<div class="a" style="left:831.3px;top:117.8px;width:344px;height:9.900000000000002px;background:linear-gradient(90deg,#18eef0 0%,#80f6f6 25%,#c8fafa 52%,#f0fefe 80%,#fff 100%)"></div>
<div class="a" style="left:1174.5px;top:116.3px;width:1px;height:12.200000000000003px;background:#111"></div>
<div class="t" style="left:775.7px;top:134px;font-size:8.3px;color:#a8a8a8;">G</div>
<div class="a" style="left:785.3px;top:132.3px;width:41.700000000000045px;height:10.299999999999983px;background:#333;border-radius:2px"></div>
<div class="t" style="left:788.8px;top:134px;font-size:8.3px;color:#b4b4b4;">255</div>
<svg class="a" style="left:821px;top:133.45px;" width="5" height="8" viewBox="0 0 5 8"><path d="M0.8 3.2L2.5 0.6L4.2 3.2ZM0.8 4.8L2.5 7.4L4.2 4.8Z" fill="#8a8a8a"/></svg>
<div class="a" style="left:831.3px;top:132.60000000000002px;width:344px;height:9.999999999999982px;background:linear-gradient(90deg,#ee18ee 0%,#f680f6 25%,#f8c4f8 52%,#fcecfc 80%,#fff 100%)"></div>
<div class="a" style="left:1174.5px;top:131.10000000000002px;width:1px;height:12.299999999999983px;background:#111"></div>
<div class="t" style="left:775.7px;top:148px;font-size:8.3px;color:#a8a8a8;">B</div>
<div class="a" style="left:785.3px;top:146.5px;width:41.700000000000045px;height:11.0px;background:#333;border-radius:2px"></div>
<div class="t" style="left:788.8px;top:148px;font-size:8.3px;color:#b4b4b4;">255</div>
<svg class="a" style="left:821px;top:148.0px;" width="5" height="8" viewBox="0 0 5 8"><path d="M0.8 3.2L2.5 0.6L4.2 3.2ZM0.8 4.8L2.5 7.4L4.2 4.8Z" fill="#8a8a8a"/></svg>
<div class="a" style="left:831.3px;top:146.8px;width:344px;height:10.7px;background:linear-gradient(90deg,#f4ee18 0%,#faf670 25%,#fcfab8 52%,#fefde8 80%,#fff 100%)"></div>
<div class="a" style="left:1174.5px;top:145.3px;width:1px;height:13.0px;background:#111"></div>
<div class="t" style="left:775.7px;top:165px;font-size:8.3px;color:#a8a8a8;">#</div>
<div class="a" style="left:785px;top:162.2px;width:40px;height:12.800000000000011px;background:#333;border-radius:2px"></div>
<div class="t" style="left:788.5px;top:165px;font-size:8.3px;color:#b4b4b4;">FFFFFF</div>
<div class="a" style="left:776px;top:179.5px;width:400px;height:1px;background:#3b3b3b"></div>
<div class="a" style="left:776px;top:180.5px;width:400px;height:1px;background:#555"></div>
<div class="t" style="left:775.7px;top:185px;font-size:8.3px;color:#a8a8a8;">H</div>
<div class="a" style="left:785.3px;top:184px;width:41.700000000000045px;height:10.599999999999994px;background:#333;border-radius:2px"></div>
<div class="t" style="left:788.8px;top:185px;font-size:8.3px;color:#b4b4b4;">0 &deg;</div>
<svg class="a" style="left:821px;top:185.3px;" width="5" height="8" viewBox="0 0 5 8"><path d="M0.8 3.2L2.5 0.6L4.2 3.2ZM0.8 4.8L2.5 7.4L4.2 4.8Z" fill="#8a8a8a"/></svg>
<div class="a" style="left:832.3px;top:184.5px;width:343.70000000000005px;height:10.099999999999994px;background:linear-gradient(90deg,#f03020 0%,#f8a010 9%,#f4f010 17%,#18e818 33%,#10f0f0 54%,#1818f0 66%,#e010f0 77%,#f01070 90%,#ff1818 100%)"></div>
<div class="t" style="left:775.7px;top:200px;font-size:8.3px;color:#a8a8a8;">S</div>
<div class="a" style="left:785.3px;top:199px;width:41.700000000000045px;height:10.699999999999989px;background:#333;border-radius:2px"></div>
<div class="t" style="left:788.8px;top:200px;font-size:8.3px;color:#b4b4b4;">0 %</div>
<svg class="a" style="left:821px;top:200.35px;" width="5" height="8" viewBox="0 0 5 8"><path d="M0.8 3.2L2.5 0.6L4.2 3.2ZM0.8 4.8L2.5 7.4L4.2 4.8Z" fill="#8a8a8a"/></svg>
<div class="a" style="left:832.3px;top:199.5px;width:343.70000000000005px;height:10.199999999999989px;background:linear-gradient(90deg,#fff 0%,#fad8d8 30%,#f8b0b0 52%,#f07070 80%,#ff1818 100%)"></div>
<div class="t" style="left:775.7px;top:215px;font-size:8.3px;color:#a8a8a8;">V</div>
<div class="a" style="left:785.3px;top:213.8px;width:41.700000000000045px;height:10.599999999999994px;background:#333;border-radius:2px"></div>
<div class="t" style="left:788.8px;top:215px;font-size:8.3px;color:#b4b4b4;">100 %</div>
<svg class="a" style="left:821px;top:215.10000000000002px;" width="5" height="8" viewBox="0 0 5 8"><path d="M0.8 3.2L2.5 0.6L4.2 3.2ZM0.8 4.8L2.5 7.4L4.2 4.8Z" fill="#8a8a8a"/></svg>
<div class="a" style="left:831.3px;top:214.3px;width:344.70000000000005px;height:10.099999999999994px;background:linear-gradient(90deg,#111 0%,#707070 30%,#b0b0b0 52%,#e0e0e0 80%,#fff 100%)"></div>
<div class="a" style="left:831.3px;top:183.5px;width:1px;height:12px;background:#111"></div>
<div class="a" style="left:831.3px;top:198.5px;width:1px;height:12px;background:#111"></div>
<div class="a" style="left:1175px;top:213px;width:1px;height:12.5px;background:#111"></div>
<svg class="a" style="left:722.8px;top:235.0px;" width="10" height="10" viewBox="0 0 10 10"><circle cx="5.0" cy="5.0" r="4.4" fill="#3c3c3c" stroke="#7a7a7a" stroke-width="1"/><circle cx="5.0" cy="5.0" r="2.5" fill="#858585"/></svg>
<div class="t" style="left:735px;top:237px;font-size:8.2px;color:#b4b4b4;">Strength</div>
<div class="a" style="left:776.5px;top:234.3px;width:46.0px;height:10.699999999999989px;background:#333;border-radius:2px"></div>
<div class="t" style="left:780.0px;top:236px;font-size:8.3px;color:#b4b4b4;">2 %</div>
<svg class="a" style="left:816.5px;top:235.65px;" width="5" height="8" viewBox="0 0 5 8"><path d="M0.8 3.2L2.5 0.6L4.2 3.2ZM0.8 4.8L2.5 7.4L4.2 4.8Z" fill="#8a8a8a"/></svg>
<div class="a" style="left:823px;top:234.2px;width:353px;height:10.800000000000011px;background:#323232;border-radius:1px"></div>
<div class="a" style="left:823px;top:234.2px;width:7px;height:10.800000000000011px;background:#848484"></div>
<div class="a" style="left:830px;top:234.2px;width:2px;height:10.800000000000011px;background:#e9a11c"></div>
<div class="a" style="left:1001px;top:234.2px;width:1px;height:2px;background:#a07020"></div>
<svg class="a" style="left:722.8px;top:249.0px;" width="10" height="10" viewBox="0 0 10 10"><circle cx="5.0" cy="5.0" r="4.4" fill="#3c3c3c" stroke="#7a7a7a" stroke-width="1"/><circle cx="5.0" cy="5.0" r="2.5" fill="#858585"/></svg>
<div class="t" style="left:735px;top:251px;font-size:7.8px;color:#b4b4b4;">Sharpness</div>
<div class="a" style="left:776.5px;top:248.6px;width:46.0px;height:10.400000000000006px;background:#333;border-radius:2px"></div>
<div class="t" style="left:780.0px;top:250px;font-size:8.3px;color:#b4b4b4;">50</div>
<svg class="a" style="left:816.5px;top:249.8px;" width="5" height="8" viewBox="0 0 5 8"><path d="M0.8 3.2L2.5 0.6L4.2 3.2ZM0.8 4.8L2.5 7.4L4.2 4.8Z" fill="#8a8a8a"/></svg>
<div class="a" style="left:823px;top:248.4px;width:353px;height:10.200000000000017px;background:#323232;border-radius:1px"></div>
<div class="a" style="left:823px;top:248.4px;width:177.5px;height:10.200000000000017px;background:#848484"></div>
<div class="a" style="left:1000.5px;top:248.4px;width:2px;height:10.200000000000017px;background:#e9a11c"></div>
<div class="t" style="left:735px;top:264px;font-size:8.3px;color:#b4b4b4;">Texture <span style="color:#9a9a9a">. . .</span></div>
<div class="a" style="left:776px;top:262px;width:12px;height:11px;background:#666;border-radius:6px"></div>
<svg class="a" style="left:780.5px;top:265px;" width="4" height="5" viewBox="0 0 4 5"><path d="M0 0L3.5 2.5L0 5Z" fill="#ddd"/></svg>
<div class="a" style="left:791px;top:262px;width:362.5px;height:11px;background:#666;border-radius:6px"></div>
<div class="a" style="left:1156px;top:262px;width:21.5px;height:11px;background:#666;border-radius:6px"></div>
<div class="t" style="left:1163px;top:266px;font-size:5px;color:#aaa;">...</div>
<div class="a" style="left:716px;top:279px;width:467px;height:1px;background:#3e3e3e"></div>
<div class="a" style="left:716px;top:280.2px;width:467.5px;height:10.6px;background:#6a6a6a"></div>
<svg class="a" style="left:723.5px;top:284.3px;" width="5.5" height="4" viewBox="0 0 5.5 4"><path d="M0 0H5.5L2.75 4Z" fill="#e0e0e0"/></svg>
<div class="t" style="left:730.5px;top:282px;font-size:8.3px;color:#d0d0d0;">Secondary</div>
<svg class="a" style="left:722.8px;top:295.0px;" width="10" height="10" viewBox="0 0 10 10"><circle cx="5.0" cy="5.0" r="4.4" fill="#3c3c3c" stroke="#7a7a7a" stroke-width="1"/><circle cx="5.0" cy="5.0" r="2.5" fill="#858585"/></svg>
<div class="t" style="left:735px;top:297px;font-size:8.2px;color:#b4b4b4;">Strength</div>
<div class="a" style="left:776.3px;top:294px;width:46.30000000000007px;height:10.800000000000011px;background:#333;border-radius:2px"></div>
<div class="t" style="left:779.8px;top:295px;font-size:8.3px;color:#b4b4b4;">80 %</div>
<svg class="a" style="left:816.6px;top:295.4px;" width="5" height="8" viewBox="0 0 5 8"><path d="M0.8 3.2L2.5 0.6L4.2 3.2ZM0.8 4.8L2.5 7.4L4.2 4.8Z" fill="#8a8a8a"/></svg>
<div class="a" style="left:823px;top:294px;width:353px;height:10.5px;background:#323232;border-radius:1px"></div>
<div class="a" style="left:823px;top:294px;width:283.5999999999999px;height:10.5px;background:#848484"></div>
<div class="a" style="left:1106px;top:294px;width:2px;height:10.5px;background:#e9a11c"></div>
<div class="a" style="left:1001px;top:294px;width:1px;height:2px;background:#a07020"></div>
<svg class="a" style="left:722.8px;top:309.0px;" width="10" height="10" viewBox="0 0 10 10"><circle cx="5.0" cy="5.0" r="4.4" fill="#3c3c3c" stroke="#7a7a7a" stroke-width="1"/><circle cx="5.0" cy="5.0" r="2.5" fill="#858585"/></svg>
<div class="t" style="left:735px;top:311px;font-size:7.8px;color:#b4b4b4;">Sharpness</div>
<div class="a" style="left:776.3px;top:308.2px;width:46.30000000000007px;height:10.600000000000023px;background:#333;border-radius:2px"></div>
<div class="t" style="left:779.8px;top:310px;font-size:8.3px;color:#b4b4b4;">30</div>
<svg class="a" style="left:816.6px;top:309.5px;" width="5" height="8" viewBox="0 0 5 8"><path d="M0.8 3.2L2.5 0.6L4.2 3.2ZM0.8 4.8L2.5 7.4L4.2 4.8Z" fill="#8a8a8a"/></svg>
<div class="a" style="left:823px;top:308px;width:353px;height:10.5px;background:#323232;border-radius:1px"></div>
<div class="a" style="left:823px;top:308px;width:107px;height:10.5px;background:#848484"></div>
<div class="a" style="left:929.5px;top:308px;width:2px;height:10.5px;background:#e9a11c"></div>
<div class="a" style="left:1001px;top:308px;width:1px;height:2px;background:#a07020"></div>
<div class="t" style="left:735px;top:324px;font-size:8.3px;color:#b4b4b4;">Texture <span style="color:#9a9a9a">. . .</span></div>
<div class="a" style="left:776px;top:322px;width:12px;height:11px;background:#666;border-radius:6px"></div>
<svg class="a" style="left:780.5px;top:325px;" width="4" height="5" viewBox="0 0 4 5"><path d="M0 0L3.5 2.5L0 5Z" fill="#ddd"/></svg>
<div class="a" style="left:791px;top:322px;width:362.5px;height:10.5px;background:#666;border-radius:6px"></div>
<div class="a" style="left:1156px;top:322px;width:21.5px;height:10.5px;background:#666;border-radius:6px"></div>
<div class="t" style="left:1163px;top:326px;font-size:5px;color:#aaa;">...</div>
<div class="a" style="left:716px;top:339px;width:467px;height:1px;background:#3e3e3e"></div>
<div class="a" style="left:716px;top:340px;width:467px;height:1px;background:#555"></div>
<svg class="a" style="left:717px;top:345.3px;" width="10" height="10" viewBox="0 0 10 10"><circle cx="5.0" cy="5.0" r="4.4" fill="#3c3c3c" stroke="#7a7a7a" stroke-width="1"/><circle cx="5.0" cy="5.0" r="2.5" fill="#858585"/></svg>
<div class="t" style="left:730px;top:347px;font-size:7.8px;color:#b4b4b4;">Back Specular</div>
<div class="a" style="left:783.5px;top:344.6px;width:46.0px;height:10.399999999999977px;background:#333;border-radius:2px"></div>
<div class="t" style="left:787.0px;top:346px;font-size:8.3px;color:#b4b4b4;">90 %</div>
<svg class="a" style="left:823.5px;top:345.8px;" width="5" height="8" viewBox="0 0 5 8"><path d="M0.8 3.2L2.5 0.6L4.2 3.2ZM0.8 4.8L2.5 7.4L4.2 4.8Z" fill="#8a8a8a"/></svg>
<div class="a" style="left:830px;top:344.3px;width:351px;height:10.199999999999989px;background:#323232;border-radius:1px"></div>
<div class="a" style="left:830px;top:344.3px;width:318px;height:10.199999999999989px;background:#848484"></div>
<div class="a" style="left:1147.5px;top:344.3px;width:2px;height:10.199999999999989px;background:#e9a11c"></div>
<div class="a" style="left:1005px;top:344.3px;width:1px;height:2px;background:#a07020"></div>
<div class="a" style="left:729px;top:226px;width:121px;height:22.5px;border:2.8px solid #f21a1a;border-radius:3px"></div>
<svg class="a" style="left:827px;top:243px;" width="10" height="14" viewBox="0 0 10 14"><path d="M1 1 L1 11 L3.6 8.6 L5.6 12.8 L7.4 12 L5.4 7.9 L8.8 7.9Z" fill="#fff" stroke="#111" stroke-width="0.9"/></svg>
<svg class="a" style="left:660px;top:140px;" width="110" height="50" viewBox="660 140 110 50"><path d="M756 151.1 L756.6 152.6 L696.9 175.5 L690.9 182.3 L673.8 178.8 L684.7 166.3 L687.7 170Z" fill="#f41c1c"/></svg>
</body></html>
